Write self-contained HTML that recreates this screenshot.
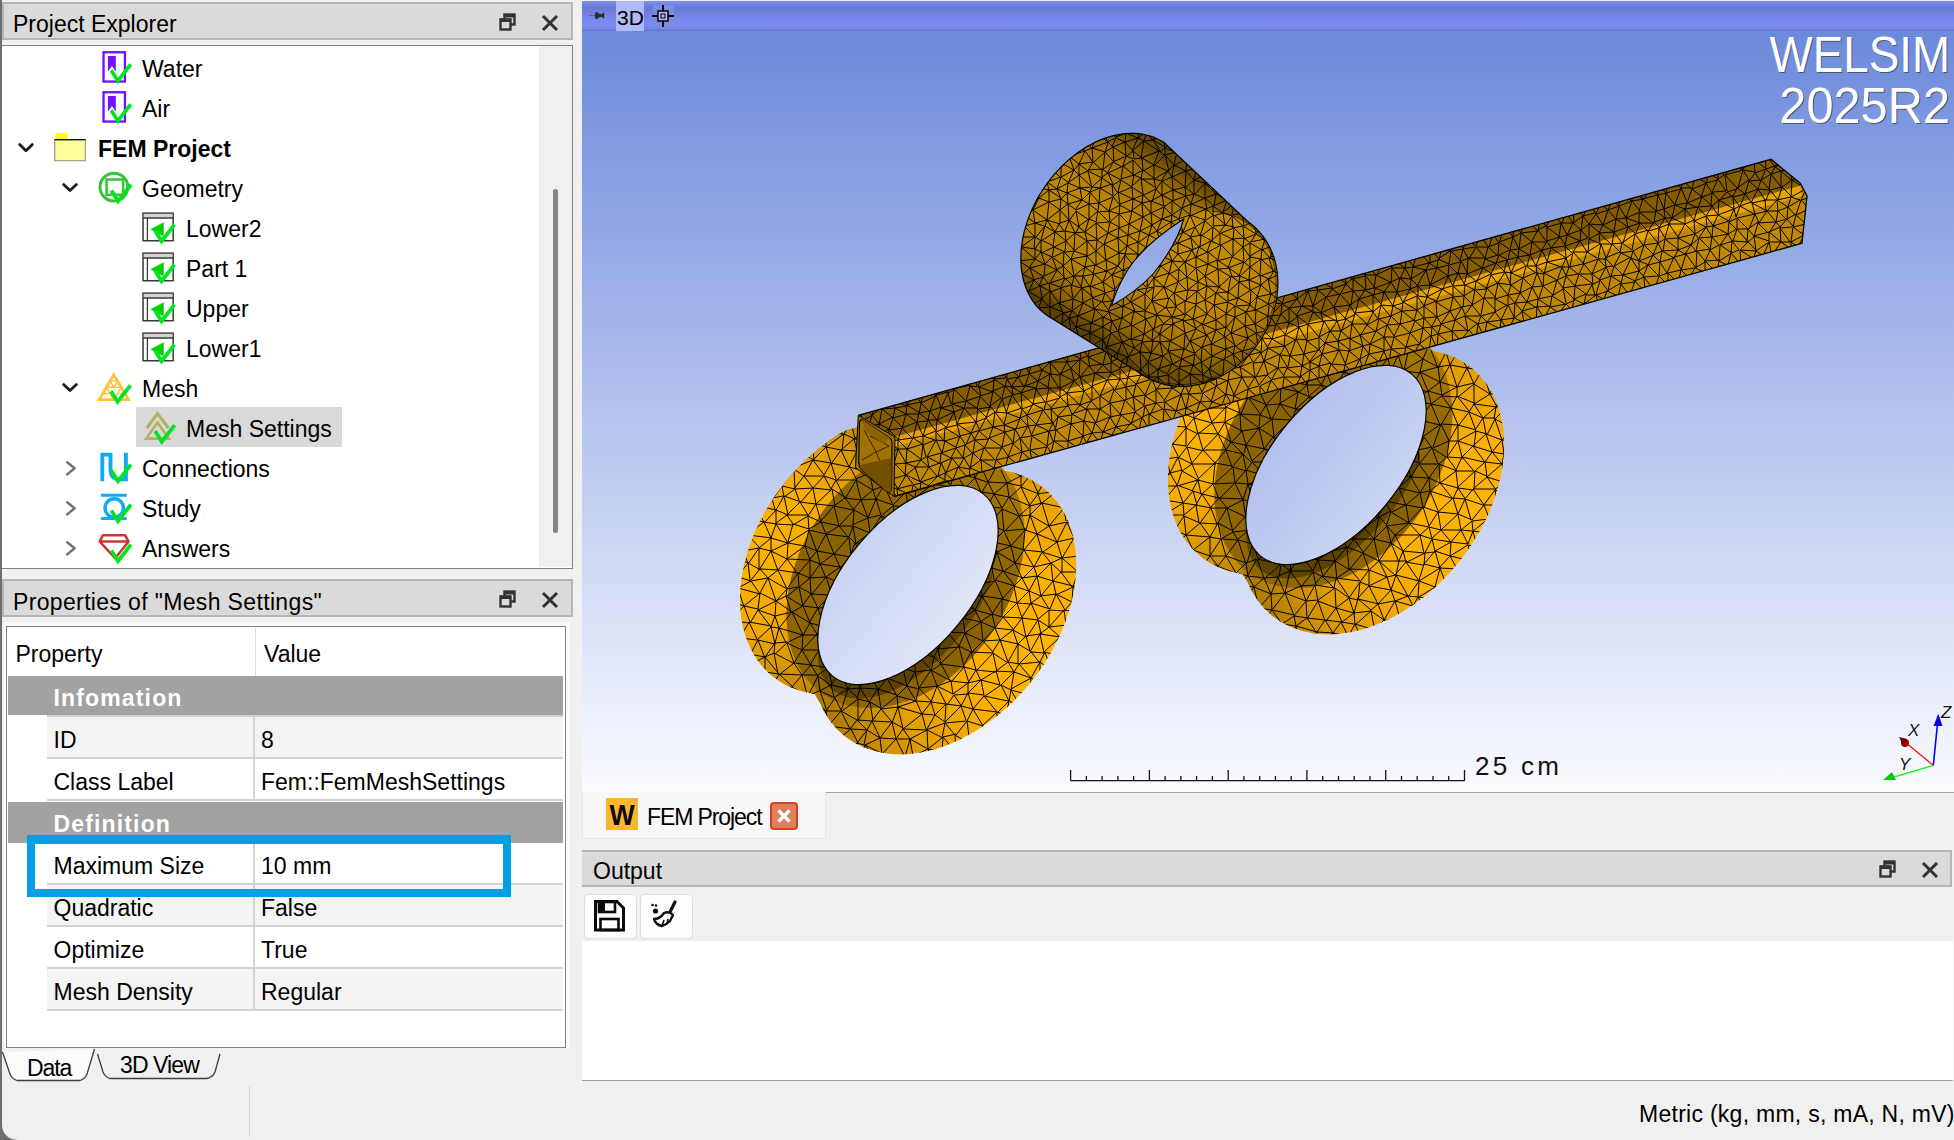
<!DOCTYPE html>
<html><head><meta charset="utf-8"><style>
html,body{margin:0;padding:0;}
body{width:1954px;height:1140px;overflow:hidden;position:relative;background:#f0f0f0;font-family:"Liberation Sans", sans-serif;}
.t{position:absolute;white-space:nowrap;}
.box{position:absolute;box-sizing:content-box;}
.ic{position:absolute;overflow:visible;}
#winborder{position:absolute;left:0;top:0;width:2px;height:1140px;background:#6c6e6f;}
#wincorner{position:absolute;left:0;top:1110px;width:30px;height:30px;background:#6c6e6f;}
#wincorner div{position:absolute;left:2px;top:-2px;width:40px;height:32px;background:#f0f0f0;border-bottom-left-radius:15px;}
</style></head><body>
<div class="box" style="left:2px;top:2px;width:567px;height:34px;background:#dadada;border:2px solid #b6b6b6"></div><div class="t" style="left:13px;top:13.0px;font-size:23px;line-height:23px;font-weight:400;color:#000;">Project Explorer</div><svg class="ic" style="left:499px;top:13px" width="18" height="18" viewBox="0 0 18 18">
<rect x="5.5" y="1.5" width="10" height="10" fill="none" stroke="#333" stroke-width="2.4"/>
<rect x="1.5" y="6.5" width="10" height="10" fill="#dadada" stroke="#333" stroke-width="2.4"/>
<rect x="1" y="5.5" width="11" height="3.5" fill="#333"/>
<rect x="5" y="1" width="11" height="3.5" fill="#333"/>
</svg><svg class="ic" style="left:541px;top:14px" width="18" height="18" viewBox="0 0 18 18"><path d="M2,2 L16,16 M16,2 L2,16" stroke="#333" stroke-width="3"/></svg><div class="box" style="left:2px;top:45px;width:570px;height:522px;background:#fff;border:1px solid #7c828c;border-left:none"></div><div class="box" style="left:539px;top:46px;width:33px;height:521px;background:#f0f0f0"></div><div class="box" style="left:553px;top:189px;width:5px;height:344px;background:#858585;border-radius:3px"></div><div class="box" style="left:136px;top:407px;width:206px;height:40px;background:#d9d9d9"></div><svg class="ic" style="left:0;top:0" width="600" height="600" viewBox="0 0 600 600"><path d="M19.7,144.4 L26.0,150.7 L32.3,144.4" fill="none" stroke="#1c1c1c" stroke-width="2.8" stroke-linecap="round" stroke-linejoin="round"/><path d="M63.6,184.6 L70.0,190.6 L76.4,184.6" fill="none" stroke="#1c1c1c" stroke-width="2.8" stroke-linecap="round" stroke-linejoin="round"/><path d="M63.6,384.6 L70.0,390.6 L76.4,384.6" fill="none" stroke="#1c1c1c" stroke-width="2.8" stroke-linecap="round" stroke-linejoin="round"/><path d="M67.2,462.2 L74.6,468.3 L67.2,474.4" fill="none" stroke="#707070" stroke-width="2.4" stroke-linecap="round" stroke-linejoin="round"/><path d="M67.2,502.2 L74.6,508.3 L67.2,514.4" fill="none" stroke="#707070" stroke-width="2.4" stroke-linecap="round" stroke-linejoin="round"/><path d="M67.2,542.2 L74.6,548.3 L67.2,554.4" fill="none" stroke="#707070" stroke-width="2.4" stroke-linecap="round" stroke-linejoin="round"/><rect x="103.55" y="52.25" width="21.4" height="29.3" fill="none" stroke="#7010ff" stroke-width="2.3"/><path d="M107.9,56 H115.8 V71.8 L111.85,66 L107.9,71.8 Z" fill="#7010ff"/><path d="M112.3,71.9 L117.9,80.9 L129.6,65.9" fill="none" stroke="#00e61e" stroke-width="3.8" stroke-linecap="square" stroke-linejoin="miter"/><rect x="103.55" y="92.25" width="21.4" height="29.3" fill="none" stroke="#7010ff" stroke-width="2.3"/><path d="M107.9,96 H115.8 V111.8 L111.85,106 L107.9,111.8 Z" fill="#7010ff"/><path d="M112.3,111.9 L117.9,120.9 L129.6,105.9" fill="none" stroke="#00e61e" stroke-width="3.8" stroke-linecap="square" stroke-linejoin="miter"/><rect x="55.8" y="133" width="11.7" height="7" fill="#ffff00"/><rect x="54.8" y="139.7" width="30.5" height="21" fill="#fdfd9c" stroke="#8c8c70" stroke-width="1"/><path d="M54.5,139.7 H85.6" stroke="#000" stroke-width="1.2"/><circle cx="113.9" cy="187.1" r="13.9" fill="none" stroke="#35c435" stroke-width="3"/><rect x="106.6" y="179.5" width="16.5" height="15.2" fill="none" stroke="#35c435" stroke-width="2.5"/><path d="M112.5,192.1 L118.1,201.1 L129.8,186.1" fill="none" stroke="#00e61e" stroke-width="3.8" stroke-linecap="square" stroke-linejoin="miter"/><rect x="143.05" y="213.15" width="30.1" height="27.6" fill="#fff" stroke="#3a3a3a" stroke-width="1.5"/><rect x="143.8" y="213.9" width="28.6" height="3.6" fill="#d2d2d2"/><path d="M143,218 H173.2 M147.4,218 V240.8" stroke="#3a3a3a" stroke-width="1.3"/><path d="M150.4,229.2 L163.7,222.2 L163.7,236.5 Z" fill="#00cc00"/><path d="M156.0,232.1 L161.6,241.1 L173.3,226.1" fill="none" stroke="#00e61e" stroke-width="3.8" stroke-linecap="square" stroke-linejoin="miter"/><rect x="143.05" y="253.15" width="30.1" height="27.6" fill="#fff" stroke="#3a3a3a" stroke-width="1.5"/><rect x="143.8" y="253.9" width="28.6" height="3.6" fill="#d2d2d2"/><path d="M143,258 H173.2 M147.4,258 V280.8" stroke="#3a3a3a" stroke-width="1.3"/><path d="M150.4,269.2 L163.7,262.2 L163.7,276.5 Z" fill="#00cc00"/><path d="M156.0,272.1 L161.6,281.1 L173.3,266.1" fill="none" stroke="#00e61e" stroke-width="3.8" stroke-linecap="square" stroke-linejoin="miter"/><rect x="143.05" y="293.15" width="30.1" height="27.6" fill="#fff" stroke="#3a3a3a" stroke-width="1.5"/><rect x="143.8" y="293.9" width="28.6" height="3.6" fill="#d2d2d2"/><path d="M143,298 H173.2 M147.4,298 V320.8" stroke="#3a3a3a" stroke-width="1.3"/><path d="M150.4,309.2 L163.7,302.2 L163.7,316.5 Z" fill="#00cc00"/><path d="M156.0,312.1 L161.6,321.1 L173.3,306.1" fill="none" stroke="#00e61e" stroke-width="3.8" stroke-linecap="square" stroke-linejoin="miter"/><rect x="143.05" y="333.15" width="30.1" height="27.6" fill="#fff" stroke="#3a3a3a" stroke-width="1.5"/><rect x="143.8" y="333.9" width="28.6" height="3.6" fill="#d2d2d2"/><path d="M143,338 H173.2 M147.4,338 V360.8" stroke="#3a3a3a" stroke-width="1.3"/><path d="M150.4,349.2 L163.7,342.2 L163.7,356.5 Z" fill="#00cc00"/><path d="M156.0,352.1 L161.6,361.1 L173.3,346.1" fill="none" stroke="#00e61e" stroke-width="3.8" stroke-linecap="square" stroke-linejoin="miter"/><path d="M113.8,374.8 L128.6,399.7 L99.2,399.7 Z" fill="none" stroke="#fbc43a" stroke-width="2.8" stroke-linejoin="miter"/><path d="M106.4,387.3 H121.2 L113.8,399.7 Z M110.1,381 H117.5 L113.8,387.3 Z M102.8,393.5 H110 M117.6,393.5 H124.8" fill="none" stroke="#fbc43a" stroke-width="1.5"/><path d="M112.0,392.8 L117.6,401.8 L129.3,386.8" fill="none" stroke="#00e61e" stroke-width="3.8" stroke-linecap="square" stroke-linejoin="miter"/><path d="M146.8,428 L157.5,413.5 L168.4,428" fill="none" stroke="#b4b064" stroke-width="3"/><path d="M157.5,422.4 L168.9,438.6 L146.1,438.6 Z" fill="none" stroke="#b4b064" stroke-width="2.6"/><path d="M156.2,432.7 L161.8,441.7 L173.5,426.7" fill="none" stroke="#00e61e" stroke-width="3.8" stroke-linecap="square" stroke-linejoin="miter"/><path d="M102.3,481.2 V454.6 H110.5 V468.5 Q110.5,479.2 119,479.2 H125.9 V452.7" fill="none" stroke="#10aaf6" stroke-width="3.9"/><path d="M112.4,472.2 L118.0,481.2 L129.7,466.2" fill="none" stroke="#00e61e" stroke-width="3.8" stroke-linecap="square" stroke-linejoin="miter"/><path d="M101,495.2 H126.7 M101,518.5 H126.7" stroke="#10aaf6" stroke-width="3"/><circle cx="114.2" cy="508" r="9.2" fill="none" stroke="#10aaf6" stroke-width="3.4"/><path d="M112.4,512.2 L118.0,521.2 L129.7,506.2" fill="none" stroke="#00e61e" stroke-width="3.8" stroke-linecap="square" stroke-linejoin="miter"/><path d="M103,535.2 H125 L128.6,541.5 L115.2,558.2 L99.6,541.5 Z M99.6,541.5 H128.6" fill="none" stroke="#cc3333" stroke-width="2.5" stroke-linejoin="round"/><path d="M112.4,552.2 L118.0,561.2 L129.7,546.2" fill="none" stroke="#00e61e" stroke-width="3.8" stroke-linecap="square" stroke-linejoin="miter"/></svg><div class="t" style="left:142px;top:57.9px;font-size:23px;line-height:23px;font-weight:400;color:#000;">Water</div><div class="t" style="left:142px;top:97.9px;font-size:23px;line-height:23px;font-weight:400;color:#000;">Air</div><div class="t" style="left:98px;top:137.9px;font-size:23px;line-height:23px;font-weight:700;color:#000;">FEM Project</div><div class="t" style="left:142px;top:177.9px;font-size:23px;line-height:23px;font-weight:400;color:#000;">Geometry</div><div class="t" style="left:186px;top:217.9px;font-size:23px;line-height:23px;font-weight:400;color:#000;">Lower2</div><div class="t" style="left:186px;top:257.9px;font-size:23px;line-height:23px;font-weight:400;color:#000;">Part 1</div><div class="t" style="left:186px;top:297.9px;font-size:23px;line-height:23px;font-weight:400;color:#000;">Upper</div><div class="t" style="left:186px;top:337.9px;font-size:23px;line-height:23px;font-weight:400;color:#000;">Lower1</div><div class="t" style="left:142px;top:377.9px;font-size:23px;line-height:23px;font-weight:400;color:#000;">Mesh</div><div class="t" style="left:186px;top:417.9px;font-size:23px;line-height:23px;font-weight:400;color:#000;">Mesh Settings</div><div class="t" style="left:142px;top:457.9px;font-size:23px;line-height:23px;font-weight:400;color:#000;">Connections</div><div class="t" style="left:142px;top:497.9px;font-size:23px;line-height:23px;font-weight:400;color:#000;">Study</div><div class="t" style="left:142px;top:537.9px;font-size:23px;line-height:23px;font-weight:400;color:#000;">Answers</div><div class="box" style="left:2px;top:579px;width:567px;height:34px;background:#dadada;border:2px solid #b6b6b6"></div><div class="t" style="left:13px;top:590.5px;font-size:23px;line-height:23px;font-weight:400;color:#000;letter-spacing:0.35px">Properties of "Mesh Settings"</div><svg class="ic" style="left:499px;top:590px" width="18" height="18" viewBox="0 0 18 18">
<rect x="5.5" y="1.5" width="10" height="10" fill="none" stroke="#333" stroke-width="2.4"/>
<rect x="1.5" y="6.5" width="10" height="10" fill="#dadada" stroke="#333" stroke-width="2.4"/>
<rect x="1" y="5.5" width="11" height="3.5" fill="#333"/>
<rect x="5" y="1" width="11" height="3.5" fill="#333"/>
</svg><svg class="ic" style="left:541px;top:591px" width="18" height="18" viewBox="0 0 18 18"><path d="M2,2 L16,16 M16,2 L2,16" stroke="#333" stroke-width="3"/></svg><div class="box" style="left:4px;top:622px;width:566px;height:426px;background:#fafafa"></div><div class="box" style="left:6px;top:626px;width:558px;height:420px;background:#fff;border:1px solid #7c828c"></div><div class="box" style="left:255px;top:628px;width:1px;height:48px;background:#dcdcdc"></div><div class="t" style="left:15.5px;top:642.5px;font-size:23px;line-height:23px;font-weight:400;color:#000;">Property</div><div class="t" style="left:264px;top:642.5px;font-size:23px;line-height:23px;font-weight:400;color:#000;">Value</div><div class="box" style="left:8px;top:676px;width:555px;height:39px;background:#a2a2a2"></div><div class="t" style="left:53.5px;top:686.5px;font-size:23px;line-height:23px;font-weight:700;color:#fff;letter-spacing:1.15px">Infomation</div><div class="box" style="left:47px;top:715px;width:516px;height:2px;background:#d0d0d0"></div><div class="box" style="left:47px;top:717px;width:516px;height:40px;background:#f4f4f4"></div><div class="box" style="left:47px;top:757px;width:516px;height:2px;background:#d4d4d4"></div><div class="box" style="left:253px;top:717px;width:2px;height:40px;background:#d4d4d4"></div><div class="t" style="left:53.5px;top:728.5px;font-size:23px;line-height:23px;font-weight:400;color:#000;">ID</div><div class="t" style="left:261px;top:728.5px;font-size:23px;line-height:23px;font-weight:400;color:#000;">8</div><div class="box" style="left:47px;top:759px;width:516px;height:40px;background:#fff"></div><div class="box" style="left:47px;top:799px;width:516px;height:2px;background:#d4d4d4"></div><div class="box" style="left:253px;top:759px;width:2px;height:40px;background:#d4d4d4"></div><div class="t" style="left:53.5px;top:770.5px;font-size:23px;line-height:23px;font-weight:400;color:#000;">Class Label</div><div class="t" style="left:261px;top:770.5px;font-size:23px;line-height:23px;font-weight:400;color:#000;">Fem::FemMeshSettings</div><div class="box" style="left:8px;top:802px;width:555px;height:39px;background:#a2a2a2"></div><div class="t" style="left:53.5px;top:812.5px;font-size:23px;line-height:23px;font-weight:700;color:#fff;letter-spacing:1.15px">Definition</div><div class="box" style="left:8px;top:841px;width:555px;height:2px;background:#a2a2a2"></div><div class="box" style="left:47px;top:843px;width:516px;height:40px;background:#fff"></div><div class="box" style="left:47px;top:883px;width:516px;height:2px;background:#d4d4d4"></div><div class="box" style="left:253px;top:843px;width:2px;height:40px;background:#d4d4d4"></div><div class="t" style="left:53.5px;top:854.5px;font-size:23px;line-height:23px;font-weight:400;color:#000;">Maximum Size</div><div class="t" style="left:261px;top:854.5px;font-size:23px;line-height:23px;font-weight:400;color:#000;">10 mm</div><div class="box" style="left:47px;top:885px;width:516px;height:40px;background:#f4f4f4"></div><div class="box" style="left:47px;top:925px;width:516px;height:2px;background:#d4d4d4"></div><div class="box" style="left:253px;top:885px;width:2px;height:40px;background:#d4d4d4"></div><div class="t" style="left:53.5px;top:896.5px;font-size:23px;line-height:23px;font-weight:400;color:#000;">Quadratic</div><div class="t" style="left:261px;top:896.5px;font-size:23px;line-height:23px;font-weight:400;color:#000;">False</div><div class="box" style="left:47px;top:927px;width:516px;height:40px;background:#fff"></div><div class="box" style="left:47px;top:967px;width:516px;height:2px;background:#d4d4d4"></div><div class="box" style="left:253px;top:927px;width:2px;height:40px;background:#d4d4d4"></div><div class="t" style="left:53.5px;top:938.5px;font-size:23px;line-height:23px;font-weight:400;color:#000;">Optimize</div><div class="t" style="left:261px;top:938.5px;font-size:23px;line-height:23px;font-weight:400;color:#000;">True</div><div class="box" style="left:47px;top:969px;width:516px;height:40px;background:#f4f4f4"></div><div class="box" style="left:47px;top:1009px;width:516px;height:2px;background:#d4d4d4"></div><div class="box" style="left:253px;top:969px;width:2px;height:40px;background:#d4d4d4"></div><div class="t" style="left:53.5px;top:980.5px;font-size:23px;line-height:23px;font-weight:400;color:#000;">Mesh Density</div><div class="t" style="left:261px;top:980.5px;font-size:23px;line-height:23px;font-weight:400;color:#000;">Regular</div><div class="box" style="left:27px;top:835px;width:468px;height:45px;border:8px solid #00a0e6;border-top-width:9px;border-bottom-width:8px"></div><svg class="ic" style="left:0px;top:1046px" width="240" height="40" viewBox="0 0 240 40">
<path d="M2.5,6 L10,28 Q12,33 17,34.5 L80,34.5 Q85,33 87,28 L94.5,3" fill="#fbfbfb" stroke="#3c3c3c" stroke-width="1.3"/>
<path d="M97.5,8 L103,26 Q105,31 110,32.5 L207,32.5 Q213,31 215,26 L220,8" fill="#f0f0f0" stroke="#3c3c3c" stroke-width="1.3"/>
</svg><div class="t" style="left:27px;top:1056.5px;font-size:23px;line-height:23px;font-weight:400;color:#000;letter-spacing:-1.1px">Data</div><div class="t" style="left:120px;top:1054.1px;font-size:23px;line-height:23px;font-weight:400;color:#000;letter-spacing:-0.9px">3D View</div><div class="box" style="left:249px;top:1086px;width:1px;height:51px;background:#d2d2d2"></div><svg class="ic" style="left:582px;top:0px" width="1372" height="792" viewBox="582 0 1372 792">
<defs><linearGradient id="bg" x1="0" y1="31" x2="0" y2="792" gradientUnits="userSpaceOnUse">
<stop offset="0" stop-color="#6c8adb"/><stop offset="0.5" stop-color="#b4c2ee"/><stop offset="1" stop-color="#fafbff"/>
</linearGradient>
<linearGradient id="tb" x1="0" y1="1" x2="0" y2="31" gradientUnits="userSpaceOnUse">
<stop offset="0" stop-color="#7b8ff2"/><stop offset="0.22" stop-color="#6a78d4"/><stop offset="0.7" stop-color="#7a8cf2"/><stop offset="0.92" stop-color="#7584e6"/><stop offset="1" stop-color="#6676cc"/>
</linearGradient><pattern id="mbar" patternUnits="userSpaceOnUse" width="12" height="21.0" patternTransform="rotate(-15.5)">
<path d="M-1,0 H13 M-1,10.5 H13 M-1,21.0 H13 M0,0 L12,21.0 M12,0 L0,21.0 M-6.0,-10.5 L6.0,10.5 M6.0,10.5 L18.0,31.5 M6.0,-10.5 L-6.0,10.5 M18.0,10.5 L6.0,31.5" stroke="#000" stroke-width="1.0" stroke-opacity="1" fill="none" shape-rendering="crispEdges"/>
</pattern><pattern id="mring" patternUnits="userSpaceOnUse" width="18" height="30" patternTransform="rotate(12)">
<path d="M-1,0 H19 M-1,15 H19 M-1,30 H19 M0,0 L18,30 M18,0 L0,30 M-9.0,-15 L9.0,15 M9.0,15 L27.0,45 M9.0,-15 L-9.0,15 M27.0,15 L9.0,45" stroke="#000" stroke-width="1.0" stroke-opacity="1" fill="none" shape-rendering="crispEdges"/>
</pattern><pattern id="mup" patternUnits="userSpaceOnUse" width="13" height="22" patternTransform="rotate(40)">
<path d="M-1,0 H14 M-1,11 H14 M-1,22 H14 M0,0 L13,22 M13,0 L0,22 M-6.5,-11 L6.5,11 M6.5,11 L19.5,33 M6.5,-11 L-6.5,11 M19.5,11 L6.5,33" stroke="#000" stroke-width="1.0" stroke-opacity="1" fill="none" shape-rendering="crispEdges"/>
</pattern><clipPath id="barclip"><path d="M582,504.4 L1954,120.0 L1954,792 L582,792 Z"/></clipPath><radialGradient id="rF-428" cx="987" cy="735" r="290" gradientUnits="userSpaceOnUse">
<stop offset="0" stop-color="#ffb600"/><stop offset="0.32" stop-color="#fcb000"/><stop offset="0.6" stop-color="#e29e00"/><stop offset="0.8" stop-color="#b88200"/><stop offset="1" stop-color="#946800"/></radialGradient>
<radialGradient id="rB-428" cx="752" cy="540" r="190" gradientUnits="userSpaceOnUse">
<stop offset="0" stop-color="#ffb400"/><stop offset="0.45" stop-color="#f4aa00"/><stop offset="0.8" stop-color="#c88e00"/><stop offset="1" stop-color="#a07000"/></radialGradient>
<linearGradient id="rD-428" x1="787" y1="570" x2="1027" y2="570" gradientUnits="userSpaceOnUse">
<stop offset="0" stop-color="#906600"/><stop offset="0.5" stop-color="#8a6200"/><stop offset="0.85" stop-color="#946a00"/><stop offset="1" stop-color="#a27400"/></linearGradient>
<linearGradient id="rDb-428" x1="0" y1="660" x2="0" y2="710" gradientUnits="userSpaceOnUse">
<stop offset="0" stop-color="#5e4300"/><stop offset="1" stop-color="#9a6e00"/></linearGradient><clipPath id="s1clip-428"><ellipse cx="872.3" cy="552.4" rx="159.1" ry="111.8" transform="rotate(-51.3 872.3 552.4)"/></clipPath><clipPath id="edclip-428"><ellipse cx="905.4" cy="574.7" rx="145.3" ry="104.2" transform="rotate(-55.3 905.4 574.7)"/></clipPath><clipPath id="silclip-428"><path d="M943.9,611.9 L844.5,736.0 Q822.6,708.2 814.6,694.2 Q804.6,692.2 772.9,676.5 L872.3,552.4 Z"/><ellipse cx="872.3" cy="552.4" rx="159.1" ry="111.8" transform="rotate(-51.3 872.3 552.4)"/><ellipse cx="943.9" cy="611.9" rx="159.1" ry="111.8" transform="rotate(-51.3 943.9 611.9)"/></clipPath><radialGradient id="rF0" cx="1415" cy="615" r="290" gradientUnits="userSpaceOnUse">
<stop offset="0" stop-color="#ffb600"/><stop offset="0.32" stop-color="#fcb000"/><stop offset="0.6" stop-color="#e29e00"/><stop offset="0.8" stop-color="#b88200"/><stop offset="1" stop-color="#946800"/></radialGradient>
<radialGradient id="rB0" cx="1180" cy="420" r="190" gradientUnits="userSpaceOnUse">
<stop offset="0" stop-color="#ffb400"/><stop offset="0.45" stop-color="#f4aa00"/><stop offset="0.8" stop-color="#c88e00"/><stop offset="1" stop-color="#a07000"/></radialGradient>
<linearGradient id="rD0" x1="1215" y1="450" x2="1455" y2="450" gradientUnits="userSpaceOnUse">
<stop offset="0" stop-color="#906600"/><stop offset="0.5" stop-color="#8a6200"/><stop offset="0.85" stop-color="#946a00"/><stop offset="1" stop-color="#a27400"/></linearGradient>
<linearGradient id="rDb0" x1="0" y1="540" x2="0" y2="590" gradientUnits="userSpaceOnUse">
<stop offset="0" stop-color="#5e4300"/><stop offset="1" stop-color="#9a6e00"/></linearGradient><clipPath id="s1clip0"><ellipse cx="1300.3" cy="432.4" rx="159.1" ry="111.8" transform="rotate(-51.3 1300.3 432.4)"/></clipPath><clipPath id="edclip0"><ellipse cx="1333.4" cy="454.7" rx="145.3" ry="104.2" transform="rotate(-55.3 1333.4 454.7)"/></clipPath><clipPath id="silclip0"><path d="M1371.9,491.9 L1272.5,616.0 Q1250.6,588.2 1242.6,574.2 Q1232.6,572.2 1200.9,556.5 L1300.3,432.4 Z"/><ellipse cx="1300.3" cy="432.4" rx="159.1" ry="111.8" transform="rotate(-51.3 1300.3 432.4)"/><ellipse cx="1371.9" cy="491.9" rx="159.1" ry="111.8" transform="rotate(-51.3 1371.9 491.9)"/></clipPath><clipPath id="barfaces"><path d="M858.3,415.0 L1771.0,159.3 L1800.0,183.0 L1800.0,186.0 L895.0,437.0Z M895.0,437.0 L1800.0,186.0 L1807.0,196.0 L1802.0,243.3 L890.0,496.7Z"/></clipPath><clipPath id="cpF"><path d="M1246.0,222.6 L1250.1,225.6 L1253.8,228.9 L1257.4,232.5 L1260.6,236.3 L1263.6,240.4 L1266.3,244.8 L1268.7,249.4 L1270.7,254.2 L1272.5,259.1 L1273.9,264.3 L1275.0,269.6 L1275.7,275.0 L1276.1,280.5 L1276.1,286.1 L1275.8,291.7 L1275.1,297.4 L1274.1,303.1 L1272.8,308.7 L1271.1,314.3 L1269.1,319.8 L1266.8,325.3 L1264.1,330.6 L1261.2,335.8 L1258.0,340.8 L1254.5,345.6 L1250.8,350.2 L1246.8,354.6 L1242.6,358.8 L1238.2,362.7 L1233.6,366.3 L1228.9,369.6 L1224.0,372.7 L1219.0,375.4 L1213.8,377.7 L1208.6,379.8 L1203.4,381.4 L1198.1,382.8 L1192.7,383.7 L1187.4,384.3 L1182.2,384.5 L1176.9,384.4 L1171.8,383.8 L1166.8,382.9 L1161.8,381.7 L1157.1,380.1 L1152.4,378.1 L1148.0,375.8 L1143.8,373.2 L1139.7,370.2 L1136.0,366.9 L1132.4,363.3 L1129.2,359.5 L1126.2,355.4 L1123.5,351.0 L1121.1,346.4 L1119.1,341.6 L1117.3,336.7 L1115.9,331.5 L1114.8,326.2 L1114.1,320.8 L1113.7,315.3 L1113.7,309.7 L1114.0,304.1 L1114.7,298.4 L1115.7,292.7 L1117.0,287.1 L1118.7,281.5 L1120.7,276.0 L1123.0,270.5 L1125.7,265.2 L1128.6,260.0 L1131.8,255.0 L1135.3,250.2 L1139.0,245.6 L1143.0,241.2 L1147.2,237.0 L1151.6,233.1 L1156.2,229.5 L1160.9,226.2 L1165.8,223.1 L1170.8,220.4 L1176.0,218.1 L1181.2,216.0 L1186.4,214.4 L1191.7,213.0 L1197.1,212.1 L1202.4,211.5 L1207.6,211.3 L1212.9,211.4 L1218.0,212.0 L1223.0,212.9 L1228.0,214.1 L1232.7,215.7 L1237.4,217.7 L1241.8,220.0 L1246.0,222.6Z"/></clipPath><linearGradient id="upO" x1="1152.0" y1="150.0" x2="1047.4" y2="303.8" gradientUnits="userSpaceOnUse">
<stop offset="0" stop-color="#6a4a00"/><stop offset="0.12" stop-color="#9e7000"/><stop offset="0.4" stop-color="#c08800"/><stop offset="0.75" stop-color="#b48000"/><stop offset="0.92" stop-color="#8a6100"/><stop offset="1" stop-color="#5a4000"/></linearGradient>
<radialGradient id="upI" cx="1204.9" cy="247.9" r="130" gradientUnits="userSpaceOnUse">
<stop offset="0" stop-color="#c48c00"/><stop offset="0.5" stop-color="#c08800"/><stop offset="0.8" stop-color="#a07000"/><stop offset="1" stop-color="#6e4e00"/></radialGradient><clipPath id="uphull"><path d="M1247.2,221.0 L1250.5,223.4 L1253.6,226.0 L1256.6,228.8 L1259.4,231.8 L1262.1,235.0 L1264.5,238.3 L1266.8,241.8 L1268.9,245.5 L1270.7,249.3 L1272.4,253.2 L1273.9,257.3 L1275.1,261.4 L1276.1,265.7 L1276.9,270.1 L1277.5,274.5 L1277.8,279.0 L1277.9,283.6 L1277.8,288.1 L1277.4,292.8 L1276.9,297.4 L1276.1,302.0 L1275.1,306.7 L1273.8,311.2 L1272.4,315.8 L1270.7,320.3 L1268.8,324.8 L1266.8,329.2 L1264.5,333.4 L1262.0,337.6 L1259.4,341.7 L1256.6,345.7 L1253.6,349.5 L1250.4,353.2 L1247.1,356.8 L1243.7,360.1 L1240.1,363.3 L1236.4,366.4 L1232.6,369.2 L1228.6,371.9 L1224.6,374.3 L1220.5,376.5 L1216.3,378.6 L1212.1,380.4 L1207.9,381.9 L1203.5,383.3 L1199.2,384.4 L1194.9,385.2 L1190.5,385.9 L1186.2,386.3 L1181.9,386.4 L1177.6,386.3 L1173.4,386.0 L1169.2,385.4 L1165.1,384.6 L1161.1,383.5 L1157.2,382.2 L1153.4,380.7 L1149.7,379.0 L1146.1,377.0 L1142.6,374.8 L1047.1,315.4 L1044.0,313.1 L1041.0,310.5 L1038.2,307.8 L1035.6,304.8 L1033.2,301.6 L1031.0,298.2 L1029.0,294.7 L1027.2,290.9 L1025.6,287.0 L1024.3,282.9 L1023.1,278.7 L1022.2,274.4 L1021.5,269.9 L1021.1,265.3 L1020.9,260.6 L1020.9,255.8 L1021.1,251.0 L1021.6,246.1 L1022.3,241.1 L1023.2,236.1 L1024.4,231.1 L1025.8,226.1 L1027.4,221.1 L1029.2,216.1 L1031.3,211.1 L1033.5,206.2 L1035.9,201.4 L1038.5,196.6 L1041.4,192.0 L1044.3,187.4 L1047.5,182.9 L1050.8,178.6 L1054.3,174.4 L1057.9,170.4 L1061.6,166.5 L1065.5,162.8 L1069.4,159.3 L1073.5,155.9 L1077.6,152.8 L1081.9,149.9 L1086.2,147.1 L1090.5,144.7 L1094.9,142.4 L1099.3,140.4 L1103.8,138.6 L1108.2,137.1 L1112.6,135.8 L1117.1,134.8 L1121.4,134.0 L1125.8,133.5 L1130.1,133.3 L1134.3,133.3 L1138.4,133.6 L1142.5,134.2 L1146.4,135.0 L1150.3,136.1 L1154.0,137.4 L1157.6,139.0 L1161.0,140.8 L1164.3,142.8Z"/></clipPath></defs>
<rect x="582" y="31" width="1372" height="761" fill="url(#bg)"/><g clip-path="url(#barclip)"><ellipse cx="872.3" cy="552.4" rx="159.1" ry="111.8" transform="rotate(-51.3 872.3 552.4)" fill="url(#rB-428)"/><path d="M943.9,611.9 L844.5,736.0 Q822.6,708.2 814.6,694.2 Q804.6,692.2 772.9,676.5 L872.3,552.4 Z" fill="url(#rB-428)"/><ellipse cx="943.9" cy="611.9" rx="159.1" ry="111.8" transform="rotate(-51.3 943.9 611.9)" fill="url(#rF-428)"/><path d="M672.3,352.4 L912.3,352.4 L802.3,702.4 L672.3,702.4 Z" fill="url(#rB-428)" clip-path="url(#s1clip-428)"/><ellipse cx="905.4" cy="574.7" rx="145.3" ry="104.2" transform="rotate(-55.3 905.4 574.7)" fill="url(#rD-428)"/><ellipse cx="908.0" cy="599.0" rx="118.3" ry="63.8" transform="rotate(-50.2 908.0 599.0)" fill="url(#rDb-428)" clip-path="url(#edclip-428)"/><ellipse cx="908.0" cy="585.0" rx="118.3" ry="63.8" transform="rotate(-50.2 908.0 585.0)" fill="url(#bg)"/><g clip-path="url(#silclip-428)"><path d="M1081 394l18 4M1081 394l-29 10M1081 394l-12 19M1081 394l11 22M1098 398l14 5M1098 398l-7 18M1098 398l8 22M1112 402l-6 18M1112 402l4 18M995 395l11 0M995 395l-17 10M995 395l-1 13M1006 395l17 2M1006 395l-12 13M1006 395l3 19M1023 397l14 4M1023 397l-14 16M1023 397l6 22M1037 401l15 3M1037 401l-9 18M1037 401l4 16M1052 404l17 9M1052 404l-11 13M1052 404l10 16M1069 413l23 3M1069 413l-6 7M1069 413l6 8M1091 416l15 4M1091 416l-17 5M1091 416l4 10M1107 420l10 1M1107 420l-11 6M1107 420l-2 14M1117 421l-12 13M1117 421l-0 30M927 398l16 4M927 398l32 5M927 398l-36 2M927 398l-26 6M927 398l-4 10M927 398l14 14M943 402l17 1M943 402l-2 10M943 402l7 15M959 403l19 2M959 403l-10 14M959 403l11 12M978 404l16 3M978 404l-7 10M978 404l9 14M994 408l15 5M994 408l-7 11M994 408l8 20M1009 413l19 6M1009 413l-7 15M1009 413l5 15M1029 419l12 -2M1029 419l-15 9M1029 419l7 12M1041 417l21 3M1041 417l-5 14M1041 417l11 16M1062 420l13 1M1062 420l-11 13M1062 420l7 19M1075 421l21 5M1075 421l-6 18M1075 421l11 19M1095 426l9 8M1095 426l-10 13M1105 434l-19 6M1105 434l-8 13M1105 434l12 17M876 397l16 3M876 397l-27 9M876 397l-15 11M876 397l0 16M891 400l10 4M891 400l-15 13M891 400l2 17M901 404l22 4M901 404l-7 13M901 404l5 20M923 408l17 4M923 408l-17 16M923 408l-0 20M941 411l9 6M941 411l-18 16M941 411l-1 19M950 417l21 -2M950 417l-10 14M950 417l8 15M971 415l17 4M971 415l-13 18M971 415l-0 20M987 419l15 9M987 419l-17 16M987 419l6 17M1002 428l12 0M1002 428l-9 8M1002 428l6 12M1014 428l21 4M1014 428l-6 12M1014 428l8 12M1035 431l16 2M1035 431l-14 8M1035 431l-1 18M1052 433l17 6M1052 433l-17 16M1052 433l6 16M1069 439l16 1M1069 439l-11 10M1069 439l-0 11M1086 440l11 7M1086 440l-17 10M1086 440l-1 15M1096 447l20 4M1096 447l-12 8M1096 447l4 11M1116 451l-15 7M1116 451l-0 14M777 394l19 3M777 394l-21 8M777 394l-5 13M777 394l12 16M796 396l13 6M796 396l-7 13M796 396l8 14M809 403l21 5M809 403l-5 8M809 403l8 13M830 407l19 -2M830 407l-13 8M830 407l0 12M849 406l12 3M849 406l-18 13M849 406l2 16M861 408l16 5M861 408l-10 14M861 408l8 18M876 413l18 4M876 413l-7 13M876 413l4 15M894 417l12 7M894 417l-14 11M894 417l3 14M906 424l16 3M906 424l-10 8M906 424l9 14M923 427l17 4M923 427l-8 10M923 427l10 13M940 431l18 2M940 431l-6 9M940 431l12 11M957 432l13 2M957 432l-6 9M957 432l2 16M970 435l23 1M970 435l-11 13M970 435l6 15M993 436l14 4M993 436l-16 13M993 436l5 17M1008 440l14 -0M1008 440l-9 13M1008 440l5 18M1022 440l13 9M1022 440l-9 19M1035 449l23 0M1035 449l-22 9M1035 449l-5 13M1035 449l14 17M1058 449l11 1M1058 449l-10 17M1058 449l6 20M1069 450l16 5M1069 450l-5 20M1069 450l11 22M1085 455l16 3M1085 455l-5 16M1085 455l10 20M1101 458l15 6M1101 458l-6 17M1101 458l8 15M1116 465l-7 8M1116 465l-4 24M703 396l20 2M703 396l31 1M703 396l2 15M703 396l-3 30M723 398l11 -1M723 398l-17 13M723 398l7 13M734 397l22 5M734 397l-4 13M734 397l9 20M756 402l16 5M756 402l-13 15M756 402l1 20M772 407l17 3M772 407l-15 15M772 407l4 13M789 410l15 1M789 410l-13 10M789 410l5 14M804 411l13 5M804 411l-11 13M804 411l2 17M817 416l13 3M817 416l-11 11M817 416l9 17M830 419l21 3M830 419l-4 14M830 419l13 15M851 422l18 4M851 422l-7 12M851 422l4 17M869 426l11 2M869 426l-15 13M869 426l-0 14M880 428l17 4M880 428l-11 12M880 428l10 19M897 432l18 6M897 432l-7 15M897 432l12 18M915 438l18 3M915 438l-7 13M915 438l2 15M933 440l18 1M933 440l-17 13M933 440l5 14M951 441l8 7M951 441l-13 12M951 441l4 20M960 448l17 1M960 448l-4 13M960 448l13 17M977 449l22 4M977 449l-5 15M977 449l4 17M999 453l14 5M999 453l-17 13M999 453l-1 11M1013 458l17 4M1013 458l-15 6M1013 458l8 18M1030 462l19 5M1030 462l-9 14M1030 462l0 13M1048 466l16 3M1048 466l-18 9M1048 466l-1 10M1064 469l16 2M1064 469l-17 7M1064 469l3 12M1080 471l15 4M1080 471l-13 10M1080 471l2 14M1095 475l14 -2M1095 475l-14 10M1095 475l5 14M1109 473l-8 16M1109 473l3 16M705 411l25 -0M705 411l-5 15M705 411l10 13M730 411l13 7M730 411l-15 13M730 411l-3 17M742 417l14 5M742 417l-15 11M742 417l10 14M742 417l-5 24M757 422l19 -3M757 422l-5 10M757 422l11 10M776 419l17 5M776 419l-8 13M776 419l7 23M793 424l13 3M793 424l-10 18M793 424l-0 21M806 427l20 6M806 427l-13 17M806 427l5 15M826 433l17 1M826 433l-14 9M826 433l-0 14M844 434l11 5M844 434l-18 13M844 434l-2 16M854 439l14 1M854 439l-13 11M854 439l3 12M869 441l21 7M869 441l-12 11M869 441l8 19M890 447l18 3M890 447l-13 12M890 447l-1 15M908 450l8 3M908 450l-19 13M908 450l-3 16M917 453l22 1M917 453l-11 13M917 453l12 17M939 454l16 7M939 454l-10 16M939 454l4 13M955 461l17 4M955 461l-13 6M955 461l0 11M972 465l9 2M972 465l-17 7M972 465l3 13M981 466l17 -2M981 466l-6 12M981 466l7 16M998 464l23 12M998 464l-10 18M998 464l9 19M1021 476l9 -1M1021 476l-14 7M1021 476l-0 10M1030 475l17 1M1030 475l-9 12M1030 475l8 18M1047 476l20 5M1047 476l-9 17M1047 476l10 15M1067 481l15 4M1067 481l-10 9M1067 481l5 14M1081 485l19 4M1081 485l-10 11M1081 485l5 14M1100 489l12 0M1100 489l-14 10M1100 489l5 19M1112 489l-7 19M1112 489l1 29M700 426l15 -3M700 426l2 8M700 426l-5 22M715 424l12 4M715 424l-13 11M715 424l5 20M727 428l-7 16M727 428l10 14M752 432l16 1M752 432l-15 10M752 432l4 18M768 432l15 10M768 432l-12 18M768 432l-4 20M783 442l10 2M783 442l-19 10M783 442l1 9M793 445l19 -2M793 445l-9 7M793 445l10 10M812 442l14 5M812 442l-9 12M812 442l2 18M826 447l15 3M826 447l-13 13M826 447l5 16M841 450l16 1M841 450l-10 14M841 450l8 17M857 451l20 8M857 451l-8 16M857 451l12 22M877 459l13 4M877 459l-8 14M877 459l8 15M889 463l17 3M889 463l-5 11M889 463l12 15M906 466l23 4M906 466l-5 12M906 466l11 15M928 470l14 -3M928 470l-12 11M928 470l4 14M942 467l13 4M942 467l-10 16M942 467l8 19M955 472l20 6M955 472l-5 15M955 472l10 16M975 478l12 4M975 478l-10 10M975 478l6 14M988 482l19 1M988 482l-6 10M988 482l6 12M1007 483l14 3M1007 483l-13 11M1007 483l2 14M1021 487l18 7M1021 487l-12 11M1021 487l9 19M1038 494l18 -3M1038 494l-9 12M1038 494l3 9M1057 491l15 5M1057 491l-15 12M1057 491l8 18M1072 496l15 3M1072 496l-7 13M1072 496l5 18M1087 499l19 10M1087 499l-9 15M1087 499l5 16M1105 508l-14 6M1105 508l8 10M702 434l18 9M702 434l-7 14M702 434l8 23M720 444l17 -2M720 444l-10 13M720 444l11 10M737 442l19 8M737 442l-7 12M737 442l5 16M756 450l8 3M756 450l-14 7M756 450l1 14M764 453l20 -1M764 453l-7 12M764 453l12 15M784 452l19 3M784 452l-8 16M784 452l10 17M803 454l11 6M803 454l-9 14M813 460l18 3M813 460l-20 8M813 460l-9 16M813 460l11 15M831 463l18 4M831 463l-7 12M831 463l5 16M850 467l19 6M850 467l-13 13M850 467l7 13M869 473l16 1M869 473l-13 6M869 473l4 16M869 473l15 12M885 474l17 4M885 474l-0 12M901 478l16 3M901 478l-17 8M901 478l4 15M917 481l16 3M917 481l-11 12M917 481l-2 17M933 484l18 3M933 484l-18 14M933 484l7 20M950 487l15 1M950 487l-11 17M950 487l1 19M965 488l16 4M965 488l-14 18M965 488l2 20M982 492l12 2M982 492l-15 16M982 492l5 15M994 494l15 3M994 494l-7 13M994 494l8 14M1009 497l21 9M1009 497l-7 11M1009 497l10 18M1030 506l12 -3M1030 506l-11 10M1030 506l0 9M1042 503l23 5M1042 503l-12 12M1042 503l7 23M1064 508l13 5M1064 508l-15 18M1064 508l2 13M1077 513l14 1M1077 513l-10 8M1077 513l9 15M1091 515l22 4M1091 515l-5 14M1091 515l3 14M1113 518l-19 10M1113 518l1 13M696 448l15 9M696 448l1 15M710 457l20 -3M710 457l-14 7M710 457l4 14M731 454l11 3M731 454l-17 18M731 454l2 22M742 457l15 7M742 457l-9 19M742 457l7 19M757 464l19 3M757 464l-8 13M757 464l7 13M776 467l18 1M776 467l-12 10M776 467l6 18M794 469l11 8M794 469l-12 17M794 469l1 20M804 476l20 -0M804 476l-10 13M804 476l9 12M824 476l12 4M824 476l-11 12M824 476l7 13M836 480l20 -0M836 480l-5 9M836 480l9 19M856 480l17 10M856 480l-11 19M856 480l5 20M873 490l11 -4M873 490l-12 10M873 490l3 10M884 485l22 7M884 485l-8 14M884 485l9 20M906 492l9 6M906 492l-13 13M906 492l2 14M915 498l25 5M915 498l-7 9M915 498l12 17M939 503l12 2M939 503l-13 12M939 503l1 10M951 506l16 3M951 506l-11 8M951 506l6 10M967 508l20 -1M967 508l-9 8M967 508l10 10M987 507l15 1M987 507l-10 11M987 507l3 16M1002 509l17 7M1002 509l-12 15M1002 509l2 23M1019 516l11 -1M1019 516l-15 16M1019 516l6 14M1030 515l19 11M1030 515l-4 15M1030 515l7 19M1049 526l18 -4M1049 526l-12 8M1049 526l8 16M1067 522l19 6M1067 522l-10 20M1067 522l7 16M1086 528l8 1M1086 528l-12 10M1086 528l1 15M1094 529l20 3M1094 529l-7 14M1094 529l10 22M1114 531l-10 19M1114 531l1 16M696 464l18 8M696 464l5 15M714 472l19 4M714 472l-12 7M714 472l5 11M733 476l16 1M733 476l-14 7M733 476l2 9M749 477l15 1M749 477l-14 8M749 477l2 17M764 478l18 8M764 478l-13 16M764 478l8 21M782 486l13 3M782 486l-9 13M782 486l2 11M795 489l19 -1M795 489l-11 8M795 489l5 14M813 488l18 2M813 488l-13 15M813 488l3 16M832 489l14 9M832 489l-16 15M832 489l3 17M845 498l16 2M845 498l-11 8M845 498l9 12M861 500l15 -1M861 500l-8 10M861 500l7 18M876 499l17 6M876 499l-8 19M876 499l5 16M893 506l15 1M893 506l-12 10M893 506l3 15M908 507l18 9M908 507l-13 14M908 507l9 22M927 515l14 -2M927 515l-10 13M927 515l4 10M940 513l17 2M940 513l-10 12M940 513l7 20M958 516l19 3M958 516l-10 18M958 516l2 14M977 518l13 5M977 518l-17 12M977 518l5 21M990 523l14 8M990 523l-8 16M990 523l3 19M1004 531l22 -2M1004 531l-11 11M1004 531l7 15M1025 530l12 4M1025 530l-15 17M1025 530l-2 20M1037 534l20 8M1037 534l-13 16M1037 534l5 18M1057 542l17 -4M1057 542l-14 10M1057 542l5 16M1074 538l13 5M1074 538l-12 20M1074 538l5 18M1087 543l18 8M1087 543l-7 13M1087 543l5 17M1104 550l11 -4M1104 550l-13 10M1104 550l7 11M1116 547l-4 15M1116 547l-0 35M701 479l17 4M701 479l9 21M701 479l-3 29M719 483l16 2M719 483l-8 17M719 483l9 21M735 485l16 9M735 485l-7 19M735 485l6 20M751 494l21 4M751 494l-11 11M751 494l3 10M772 498l11 -2M772 498l-19 6M772 498l3 12M784 496l17 6M784 496l-8 14M784 496l4 19M800 502l16 2M800 502l-13 13M800 502l8 13M816 504l18 2M816 504l-8 12M816 504l5 18M834 506l19 4M834 506l-14 16M834 506l5 20M854 510l15 8M854 510l-14 15M854 510l-1 15M868 518l13 -3M868 518l-16 7M868 518l2 14M881 516l15 5M881 516l-11 17M881 516l7 16M896 521l21 7M896 521l-8 11M896 521l8 18M917 528l14 -3M917 528l-13 10M917 528l-0 12M931 526l17 8M931 526l-14 15M931 526l9 17M948 533l12 -3M948 533l-8 9M948 533l2 13M959 530l22 10M959 530l-10 16M959 530l7 20M982 539l11 3M982 539l-16 10M982 539l0 13M993 542l18 4M993 542l-11 10M993 542l4 10M1011 546l13 4M1011 546l-14 6M1011 546l4 17M1024 550l19 2M1024 550l-9 13M1024 550l10 17M1042 552l19 6M1042 552l-8 15M1042 552l9 11M1062 558l17 -2M1062 558l-11 5M1062 558l-0 14M1062 558l16 14M1079 556l13 5M1079 556l-1 16M1092 560l19 1M1092 560l-14 12M1092 560l4 12M1111 561l-15 11M1111 561l4 20M711 500l17 4M711 500l-13 7M711 500l3 15M728 504l13 1M728 504l-14 11M728 504l-1 14M741 505l13 -1M741 505l-14 13M741 505l6 13M754 505l22 5M754 505l-8 13M754 505l10 17M776 510l12 5M776 510l-11 12M776 510l0 14M787 515l21 0M787 515l-11 8M787 515l6 9M808 516l13 6M808 516l-15 9M808 516l1 14M821 522l19 4M821 522l-12 7M821 522l5 12M839 526l13 0M839 526l-13 8M839 526l9 11M853 526l17 7M853 526l-4 11M853 526l3 18M870 533l17 -1M870 533l-15 11M870 533l3 11M887 532l17 6M887 532l-14 12M887 532l2 16M904 538l12 2M904 538l-15 10M904 538l5 12M916 540l24 2M916 540l-8 10M916 540l4 13M940 542l10 4M940 542l-20 11M940 542l0 18M950 546l16 4M950 546l-10 14M950 546l4 15M966 550l16 3M966 550l-12 11M966 550l5 16M982 552l15 -0M982 552l-11 13M982 552l10 16M997 552l18 11M997 552l-5 16M997 552l6 19M1015 563l19 4M1015 563l-12 9M1015 563l7 15M1034 567l17 -4M1034 567l-12 12M1034 567l3 9M1051 563l10 9M1051 563l-14 14M1051 563l2 19M1061 572l16 -0M1061 572l-8 9M1061 572l11 15M1078 572l18 0M1078 572l-5 15M1078 572l6 12M1096 572l19 10M1096 572l-12 12M1096 572l9 23M1115 582l-10 14M1115 582l-9 23M698 507l16 7M698 507l9 20M714 515l13 3M714 515l-7 13M714 515l2 16M727 518l20 -0M727 518l-11 13M727 518l7 14M746 518l18 4M746 518l-13 14M746 518l1 17M764 522l12 2M764 522l-17 13M764 522l7 16M776 524l17 1M776 524l-5 14M776 524l12 19M793 524l16 5M793 524l-5 18M809 530l17 4M809 530l-21 13M809 530l-4 16M809 530l8 22M826 534l23 3M826 534l-9 17M826 534l8 20M849 537l7 7M849 537l-15 17M849 537l2 20M855 543l18 1M855 543l-5 13M855 543l10 18M873 544l16 4M873 544l-8 17M873 544l13 14M889 549l19 2M889 549l-3 10M889 549l9 18M909 550l12 3M909 550l-10 16M909 550l4 17M920 553l20 7M920 553l-8 14M920 553l9 20M940 560l14 1M940 560l-10 12M940 560l2 11M954 561l17 4M954 561l-12 11M954 561l10 17M971 565l21 3M971 565l-7 12M971 565l9 18M992 568l10 3M992 568l-12 15M992 568l2 12M1003 571l20 7M1003 571l-8 9M1003 571l12 15M1022 578l15 -2M1022 578l-8 8M1022 578l7 13M1037 576l16 5M1037 576l-8 15M1037 576l4 20M1053 581l20 5M1053 581l-12 15M1053 581l3 13M1073 587l11 -3M1073 587l-17 8M1073 587l-1 15M1073 587l16 14M1084 584l22 12M1084 584l5 17M1106 596l-16 5M1106 596l1 9M707 528l9 3M707 528l-1 16M715 531l18 1M715 531l-10 12M715 531l6 12M734 532l14 2M734 532l-12 11M734 532l9 19M748 535l24 3M748 535l-4 16M748 535l12 13M771 538l17 5M771 538l-12 10M771 538l-0 13M788 543l17 3M788 543l-17 8M788 543l-1 16M805 546l12 5M805 546l-18 13M805 546l5 14M817 551l17 3M817 551l-7 8M817 551l3 13M834 554l16 3M834 554l-14 10M834 554l6 13M850 557l15 5M850 557l-10 11M850 557l1 10M865 561l21 -3M865 561l-14 5M865 561l8 15M865 561l-9 20M886 558l12 8M886 558l-13 18M886 558l-3 19M898 567l14 0M898 567l-15 11M898 567l5 11M912 567l17 6M912 567l-9 10M912 567l3 13M930 573l12 -1M930 573l-14 8M930 573l6 16M942 572l22 6M942 572l-7 17M942 572l12 22M964 578l15 6M964 578l-11 16M964 578l-1 18M980 584l15 -3M980 584l-17 12M980 584l2 12M995 580l20 6M995 580l-13 16M995 580l8 19M1014 586l15 5M1014 586l-12 13M1014 586l3 16M1029 591l12 5M1029 591l-12 12M1029 591l2 12M1041 596l15 -2M1041 596l-10 7M1041 596l8 13M1056 594l16 8M1056 594l-6 15M1056 594l9 16M1072 602l18 -1M1072 602l-7 8M1072 602l13 12M1089 601l17 4M1089 601l-5 13M1089 601l6 17M1106 605l-11 13M1106 605l10 15M706 543l16 -0M706 543l-4 10M706 543l10 16M722 543l21 8M722 543l-6 16M722 543l6 14M743 551l16 -3M743 551l-15 6M743 551l5 12M759 548l12 3M759 548l-11 16M759 548l0 22M771 551l16 8M771 551l-12 19M771 551l7 20M787 559l23 1M787 559l-9 11M787 559l11 15M810 560l10 4M810 560l-12 14M810 560l0 19M820 564l20 3M820 564l-10 14M820 564l6 14M840 567l12 -1M840 567l-14 10M840 567l1 18M851 567l-10 18M851 567l5 15M873 576l10 2M873 576l-16 5M873 576l1 11M883 578l21 -1M883 578l-9 9M883 578l8 12M903 577l12 3M903 577l-13 12M903 577l2 16M915 580l20 8M915 580l-10 13M915 580l4 21M935 589l19 5M935 589l-16 13M935 589l6 9M954 594l9 2M954 594l-13 5M954 594l0 10M963 595l18 1M963 595l-9 8M963 595l12 15M982 596l21 3M982 596l-7 14M982 596l11 18M1002 599l15 4M1002 599l-10 15M1002 599l0 18M1017 603l14 1M1017 603l-14 14M1017 603l5 15M1031 603l19 6M1031 603l-9 14M1031 603l7 16M1049 610l15 1M1049 610l-12 10M1049 610l-0 17M1064 610l20 3M1064 610l-15 17M1064 610l2 14M1084 614l11 4M1084 614l-18 11M1084 614l6 15M1095 618l21 2M1095 618l-5 11M1095 618l7 15M1116 620l-14 13M1116 620l-8 31M702 553l13 6M702 553l-2 12M715 559l12 -2M715 559l-16 7M715 559l1 15M728 557l21 6M728 557l-11 16M728 557l10 20M748 563l11 6M748 563l-10 13M748 563l2 17M760 569l19 1M760 569l-9 11M760 569l8 9M778 570l20 3M778 570l-10 8M778 570l9 19M798 573l12 5M798 573l-11 16M798 573l1 14M810 578l15 -1M810 578l-11 9M810 578l1 16M826 577l16 7M826 577l-14 17M826 577l6 18M841 585l15 -4M841 585l-10 11M841 585l4 13M856 581l17 5M856 581l-11 17M856 581l4 22M874 586l17 3M874 586l-13 17M874 586l8 19M890 589l15 4M890 589l-9 16M890 589l11 21M905 593l14 8M905 593l-5 17M905 593l9 16M920 602l21 -3M920 602l-5 7M920 602l11 14M941 598l13 5M941 598l-10 17M941 598l3 18M954 603l20 6M954 603l-10 13M954 603l9 15M975 610l18 5M975 610l-12 8M975 610l6 12M992 614l10 3M992 614l-12 8M992 614l3 13M1003 617l20 1M1003 617l-8 11M1003 617l11 13M1022 618l16 2M1022 618l-9 12M1022 618l4 19M1038 620l11 7M1038 620l-11 17M1038 620l3 14M1049 627l18 -2M1049 627l-9 7M1049 627l11 10M1067 625l23 4M1067 625l-7 12M1067 625l7 23M1090 629l12 4M1090 629l-16 19M1090 629l-2 16M1102 633l-14 12M1102 633l6 18M700 565l17 8M700 565l11 18M700 565l-2 30M717 574l21 3M717 574l-6 10M717 574l9 12M738 577l13 4M738 577l-13 9M738 577l-0 11M751 581l17 -3M751 581l-13 7M751 581l9 13M768 578l19 11M768 578l-8 15M768 578l8 23M787 589l11 -2M787 589l-11 12M787 589l-1 7M799 587l13 7M799 587l-12 9M799 587l4 19M811 594l20 1M811 594l-9 12M811 594l7 14M831 595l14 2M831 595l-13 13M831 595l10 12M845 598l15 5M845 598l-4 9M845 598l13 13M860 603l21 3M860 603l-2 8M860 603l5 15M881 606l20 4M881 606l-16 12M881 606l3 16M901 610l14 -1M901 610l-17 11M901 610l-1 11M915 609l16 7M915 609l-15 13M915 609l3 21M931 616l14 1M931 616l-13 14M931 616l8 13M944 616l19 2M944 616l-5 12M944 616l3 16M963 618l18 4M963 618l-16 14M963 618l2 15M981 622l14 6M981 622l-16 11M981 622l2 19M995 628l18 2M995 628l-12 13M995 628l5 12M1013 630l13 7M1013 630l-13 10M1013 630l5 15M1026 636l14 -2M1026 636l-8 8M1026 636l4 15M1040 634l20 3M1040 634l-10 18M1040 634l4 19M1060 637l14 11M1060 637l-16 15M1060 637l2 20M1074 648l14 -3M1074 648l-12 9M1074 648l10 14M1088 645l20 6M1088 645l-4 17M1088 645l10 19M1108 651l-10 13M1108 651l1 12M710 583l15 2M710 583l-13 12M710 583l0 15M725 586l12 2M725 586l-15 13M725 586l1 15M738 588l22 6M738 588l-11 13M738 588l6 19M760 593l16 8M760 593l-16 13M760 593l-2 16M776 601l10 -5M776 601l-18 9M776 601l-1 15M776 601l16 11M786 596l16 10M786 596l5 16M803 606l16 2M803 606l-11 6M803 606l7 17M818 608l23 -1M818 608l-9 15M818 608l6 19M842 607l17 4M842 607l-17 19M842 607l2 18M858 611l7 7M858 611l-14 14M858 611l-1 20M865 618l19 3M865 618l-9 13M865 618l5 16M884 621l15 0M884 621l-14 13M884 621l5 15M900 622l18 8M900 622l-10 15M900 622l10 16M918 630l21 -1M918 630l-7 8M918 630l4 13M939 629l8 3M939 629l-18 14M939 629l-0 20M947 632l18 1M947 632l-9 17M947 632l12 14M965 633l18 8M965 633l-6 13M965 633l7 19M983 641l17 -1M983 641l-11 11M983 641l10 11M1000 640l18 4M1000 640l-8 13M1000 640l8 22M1018 644l12 7M1018 644l-10 18M1018 644l0 20M1031 652l14 1M1031 652l-12 12M1031 652l9 11M1045 652l18 5M1045 652l-5 10M1045 652l6 18M1062 657l22 5M1062 657l-12 13M1062 657l3 15M1084 662l14 2M1084 662l-18 10M1084 662l1 10M1098 664l11 -1M1098 664l-13 8M1098 664l4 15M1110 663l-7 16M1110 663l-3 28M698 596l13 3M698 596l8 20M698 596l6 30M711 598l16 2M711 598l-5 17M711 598l4 18M727 600l17 6M727 600l-12 16M727 600l4 20M744 606l14 3M744 606l-13 14M744 606l6 16M758 610l17 6M758 610l-8 13M758 610l13 17M775 616l17 -4M775 616l-4 11M775 616l4 12M792 612l18 11M792 612l-13 16M792 612l11 23M810 623l15 4M810 623l-7 12M810 623l7 11M825 626l19 -1M825 626l-8 8M825 626l3 11M844 625l13 6M844 625l-16 13M844 625l5 17M857 631l14 4M857 631l-8 11M857 631l7 15M870 634l19 2M870 634l-7 12M870 634l11 12M890 637l21 1M890 637l-8 9M890 637l10 11M910 638l11 5M910 638l-11 10M910 638l5 14M921 643l17 6M921 643l-6 9M921 643l13 14M938 649l21 -2M938 649l-4 8M938 649l3 15M959 646l12 6M959 646l-18 17M959 646l5 21M971 652l21 1M971 652l-8 15M971 652l5 18M993 653l15 10M993 653l-16 17M993 653l4 19M1008 662l11 2M1008 662l-12 9M1008 662l6 10M1019 664l21 -2M1019 664l-5 8M1019 664l12 14M1040 662l11 8M1040 662l-9 16M1040 662l-0 21M1050 670l15 3M1050 670l-11 13M1050 670l7 14M1066 673l20 -1M1066 673l-8 12M1066 673l13 17M1085 672l17 7M1085 672l-7 17M1085 672l9 19M1103 679l-8 12M1103 679l4 12M706 616l9 1M706 616l-2 10M715 617l16 4M715 617l-11 9M715 617l12 15M731 621l19 2M731 621l-4 11M731 621l9 17M749 622l22 4M749 622l-9 16M749 622l8 17M771 627l8 1M771 627l-14 13M771 627l4 17M779 628l24 7M779 628l-4 15M779 628l7 15M803 635l14 -0M803 635l-17 8M803 635l-1 15M817 634l11 4M817 634l-15 16M817 634l2 15M828 638l21 4M828 638l-9 12M828 638l7 20M849 642l15 5M849 642l-14 16M849 642l6 19M864 646l18 -0M864 646l-9 15M864 646l4 15M882 646l18 2M882 646l-13 15M882 646l2 20M900 648l16 4M900 648l-16 18M900 648l4 20M915 652l19 5M915 652l-12 16M915 652l-0 20M915 652l16 18M934 657l7 7M934 657l-3 14M941 664l22 3M941 664l-10 7M941 664l10 18M964 667l12 3M964 667l-12 14M964 667l5 16M976 670l20 2M976 670l-8 13M976 670l5 11M996 671l18 1M996 671l-15 9M996 671l4 14M1014 672l17 6M1014 672l-13 13M1014 672l-3 18M1031 678l9 5M1031 678l-20 11M1031 678l-1 17M1039 683l18 1M1039 683l-10 12M1039 683l9 11M1058 684l20 5M1058 684l-9 10M1058 684l3 19M1078 689l17 1M1078 689l-18 14M1078 689l0 12M1095 691l11 0M1095 691l-16 11M1095 691l1 20M1106 691l-10 19M1106 691l6 21M704 626l22 5M704 626l-2 14M704 626l6 20M726 631l14 6M726 631l-16 15M726 631l4 14M740 638l17 2M740 638l-10 7M740 638l9 17M758 640l17 4M758 640l-8 15M758 640l7 18M775 643l12 -1M775 643l-10 14M775 643l-1 10M787 643l15 7M787 643l-12 11M787 643l7 20M802 650l17 -0M802 650l-8 13M802 650l9 15M819 650l15 8M819 650l-9 15M819 650l9 19M835 658l20 3M835 658l-7 11M835 658l6 15M855 661l13 1M855 661l-15 11M855 661l2 12M868 662l15 5M868 662l-11 11M868 662l2 14M884 666l19 2M884 666l-13 9M884 666l3 11M903 668l12 4M903 668l-16 10M903 668l4 18M915 672l16 -2M915 672l-8 14M915 672l4 17M931 670l20 11M931 670l-12 18M931 670l6 16M951 681l17 2M951 681l-14 5M951 681l2 13M968 683l13 -3M968 683l-15 11M968 683l-0 10M981 680l19 5M981 680l-13 13M981 680l3 15M1001 685l10 5M1001 685l-16 11M1001 685l8 16M1011 690l19 5M1011 690l-2 11M1011 690l9 16M1030 695l19 -1M1030 695l-10 11M1030 695l4 11M1049 694l12 9M1049 694l-15 13M1049 694l6 17M1061 703l18 -1M1061 703l-6 8M1061 703l4 8M1079 702l18 9M1079 702l-14 10M1079 702l4 15M1096 711l16 1M1096 711l-13 6M1096 711l9 15M1113 712l-8 13M702 640l9 6M702 640l-3 17M710 647l20 -1M710 647l-12 11M710 647l5 12M731 645l19 9M731 645l-15 13M731 645l8 15M749 654l16 3M749 654l-10 6M749 654l0 11M765 657l9 -4M765 657l-16 8M765 657l-0 15M765 657l14 17M774 653l19 10M774 653l4 21M794 663l17 2M794 663l-15 12M794 663l8 12M811 665l17 3M811 665l-9 10M811 665l7 11M828 668l13 4M828 668l-10 7M828 668l4 17M840 672l17 1M840 672l-9 13M840 672l8 17M857 673l13 2M857 673l-9 16M857 673l3 15M870 675l17 2M870 675l-10 13M870 675l8 14M887 678l20 8M887 678l-9 12M887 678l10 18M907 686l12 3M907 686l-10 10M907 686l9 15M919 688l18 -2M919 688l-3 12M919 688l13 14M937 686l16 8M937 686l-6 16M937 686l9 18M954 695l15 -1M954 695l-7 10M954 695l8 12M968 693l16 2M968 693l-7 13M968 693l5 16M984 696l24 5M984 696l-11 13M984 696l13 16M1009 701l11 5M1009 701l-11 11M1009 701l-3 15M1020 706l15 1M1020 706l-14 9M1020 706l2 18M1034 707l21 4M1034 707l-13 18M1034 707l10 14M1055 711l10 1M1055 711l-11 11M1055 711l5 20M1065 712l18 5M1065 712l-5 19M1065 712l11 22M1083 717l22 8M1083 717l-7 17M1083 717l7 17M1105 725l-15 9M1105 725l-2 13M1105 725l7 30M698 657l17 1M698 657l5 15M698 657l3 24M715 658l23 2M715 658l-13 14M715 658l8 15M739 661l11 5M739 661l-15 12M739 661l-2 20M749 665l15 7M749 665l-13 16M749 665l8 18M765 672l14 2M765 672l-7 11M765 672l7 16M779 674l23 1M779 674l-7 13M779 674l13 12M802 675l16 0M802 675l-10 12M802 675l5 20M818 676l14 10M818 676l-10 20M818 676l2 15M831 685l17 4M831 685l-12 6M831 685l3 12M848 689l12 -1M848 689l-13 8M848 689l10 9M848 689l-7 22M860 688l18 1M860 688l-3 11M860 688l9 14M878 689l19 6M878 689l-9 13M878 689l3 20M897 696l19 5M897 696l-16 13M897 696l1 11M916 701l15 1M916 701l-18 6M916 701l6 13M931 702l15 2M931 702l-9 12M931 702l4 13M946 704l15 2M946 704l-11 11M946 704l-1 18M961 706l12 3M961 706l-16 16M961 706l5 14M973 709l24 3M973 709l-6 12M973 709l10 17M997 712l8 3M997 712l-15 14M997 712l-0 21M1006 715l16 9M1006 715l-9 18M1006 715l13 21M1022 724l23 -3M1022 724l-3 12M1022 724l13 15M1044 721l16 9M1044 721l-10 18M1044 721l-1 22M1060 730l16 4M1060 730l-18 13M1060 730l0 9M1076 734l14 -0M1076 734l-15 5M1076 734l2 14M1090 734l13 4M1090 734l-12 14M1090 734l8 19M1103 738l-5 15M1103 738l9 18M703 672l21 1M703 672l-1 9M703 672l10 17M723 673l13 8M723 673l-11 16M723 673l2 15M736 681l21 2M736 681l-11 7M736 681l8 15M758 683l14 5M758 683l-14 13M758 683l6 11M771 688l20 -1M771 688l-8 6M771 688l2 12M792 687l15 9M792 687l-19 12M792 687l-0 13M807 696l12 -5M807 696l-15 4M807 696l-2 12M807 696l19 15M820 691l15 7M820 691l7 20M835 698l-9 13M835 698l7 14M858 699l12 3M858 699l-16 12M858 699l-0 22M870 702l12 7M870 702l-12 18M870 702l3 19M881 709l17 -2M881 709l-9 12M881 709l11 13M898 707l24 7M898 707l-6 16M898 707l5 22M922 714l13 1M922 714l-19 15M922 714l4 15M935 715l10 7M935 715l-8 14M945 723l22 -2M945 723l-19 7M945 723l-3 15M945 723l10 12M967 721l16 5M967 721l-11 14M967 721l3 23M983 726l15 7M983 726l-12 17M983 726l9 14M997 733l21 3M997 733l-6 7M997 733l4 14M1018 736l16 3M1018 736l-17 12M1018 736l5 12M1035 739l8 4M1035 739l-12 9M1035 739l-0 12M1043 744l18 -4M1043 744l-9 8M1043 744l11 14M1061 739l17 9M1061 739l-7 18M1061 739l7 16M1078 748l20 5M1078 748l-11 7M1078 748l8 13M1098 753l14 3M1098 753l-12 8M1098 753l7 11M1112 756l-7 8M1112 756l0 15M701 682l11 8M701 682l-4 19M713 689l12 -1M713 689l-15 11M713 689l6 16M725 688l19 8M725 688l-6 17M725 688l14 17M744 696l19 -2M744 696l-5 9M744 696l11 11M763 694l10 5M763 694l-8 13M773 699l19 1M773 699l-18 8M773 699l-3 14M773 699l13 14M792 700l13 8M792 700l-6 14M792 700l5 15M805 708l21 3M805 708l-8 7M805 708l14 18M805 708l1 23M826 711l15 0M826 711l-8 16M826 711l2 16M841 711l16 9M841 711l-13 15M841 711l9 18M857 720l15 1M857 720l-7 9M857 720l10 10M872 721l20 1M872 721l-5 9M872 721l8 17M892 722l11 6M892 722l-12 16M892 722l4 17M903 729l24 1M903 729l-7 10M903 729l7 10M927 730l16 8M927 730l-17 9M927 730l1 20M943 737l13 -3M943 737l-15 12M943 737l-1 14M943 737l14 17M955 735l15 9M955 735l1 20M970 743l21 -3M970 743l-14 11M970 743l2 14M992 740l10 8M992 740l-19 17M992 740l4 19M1001 748l22 1M1001 748l-6 12M1001 748l12 13M1023 748l11 3M1023 748l-10 13M1023 748l-1 17M1034 752l20 6M1034 752l-13 14M1034 752l3 13M1054 757l14 -2M1054 757l-17 7M1054 757l1 15M1068 755l18 5M1068 755l-12 17M1068 755l3 15M1086 761l19 3M1086 761l-15 10M1086 761l2 13M1105 764l7 7M1105 764l-17 10M1105 764l1 20M1113 770l-6 13M1113 770l-1 25M698 700l21 5M698 700l12 12M698 700l-0 31M719 706l20 -1M719 706l-9 6M719 706l3 11M739 705l17 2M739 705l-17 11M739 705l4 17M755 707l15 6M755 707l-12 15M755 707l-0 16M770 713l16 1M770 713l-15 10M770 713l2 13M786 714l11 1M786 714l-14 12M786 714l5 21M797 715l-6 20M797 715l10 17M819 727l10 -0M819 727l-12 5M819 727l-2 8M828 726l23 3M828 726l-11 9M828 726l4 17M851 729l17 1M851 729l-18 14M851 729l7 14M867 730l13 8M867 730l-10 13M867 730l-3 15M880 738l16 1M880 738l-15 7M880 738l2 17M896 739l14 -0M896 739l-14 15M896 739l9 18M910 739l18 10M910 739l-5 18M910 739l3 17M928 749l14 3M928 749l-15 7M928 749l3 8M942 752l15 3M942 752l-11 6M942 752l6 10M956 755l16 2M956 755l-9 7M956 755l5 16M973 757l23 2M973 757l-12 14M973 757l8 16M995 759l18 2M995 759l-14 14M995 759l4 12M1013 761l9 5M1013 761l-14 10M1013 761l-1 18M1022 766l16 -1M1022 766l-9 13M1022 766l5 13M1037 765l18 7M1037 765l-10 14M1037 765l12 22M1055 772l16 -1M1055 772l-6 14M1055 772l11 14M1071 771l17 3M1071 771l-5 15M1071 771l9 17M1088 774l19 10M1088 774l-8 14M1088 774l5 16M1106 783l-14 6M1106 783l6 12M710 712l12 4M710 712l-12 20M710 712l5 19M722 716l21 5M722 716l-7 15M722 716l4 20M743 722l12 1M743 722l-17 14M743 722l5 20M755 723l17 3M755 723l-7 19M755 723l7 22M772 726l18 9M772 726l-10 19M772 726l4 16M791 735l16 -4M791 735l-14 7M791 735l1 13M806 731l11 3M806 731l-14 17M806 731l6 19M817 735l16 8M817 735l-5 15M817 735l6 18M833 743l25 1M833 743l-10 10M833 743l10 14M857 743l7 2M857 743l-14 14M857 743l3 16M865 745l18 9M865 745l-5 14M865 745l10 15M882 755l22 3M882 755l-7 5M882 755l11 15M905 757l8 -1M905 757l-12 12M905 757l1 14M913 756l18 1M913 756l-7 15M913 756l9 20M931 758l16 4M931 758l-9 18M931 758l6 16M947 762l14 9M947 762l-10 12M947 762l12 17M961 771l20 2M961 771l-2 8M961 771l8 13M981 773l18 -2M981 773l-12 11M981 773l7 17M1000 771l13 8M1000 771l-11 19M1000 771l3 18M1012 779l15 0M1012 779l-10 11M1012 779l12 13M1027 779l22 7M1027 779l-3 13M1049 786l17 -0M1049 786l-25 5M1066 786l14 2M1080 788l13 2M1080 788l32 8M1093 789l19 6M698 732l17 -1M698 732l2 10M714 731l11 5M714 731l-14 11M714 731l3 19M726 736l23 6M726 736l-8 14M726 736l4 12M748 742l14 3M748 742l-19 6M748 742l0 11M762 745l15 -3M762 745l-13 7M762 745l8 13M777 742l16 6M777 742l-6 15M777 742l3 14M792 748l20 2M792 748l-13 8M792 748l10 13M812 750l11 3M812 750l-10 12M812 750l4 14M823 753l20 4M823 753l-6 12M823 753l7 14M843 757l17 2M843 757l-14 10M843 757l6 16M860 759l15 1M860 759l-11 14M860 759l2 13M875 760l18 10M875 760l-13 13M875 760l7 22M893 770l13 2M893 770l-11 13M893 770l-1 10M906 772l16 4M906 772l-14 8M906 772l2 13M922 776l16 -2M922 776l-13 9M922 776l8 15M937 774l22 5M937 774l-7 17M937 774l7 16M959 779l10 5M959 779l-15 11M959 779l-2 16M969 784l19 7M969 784l-12 11M988 790l14 -1M988 790l36 1M988 790l-31 4M1003 789l21 2M700 742l18 8M700 742l8 20M700 742l-0 31M718 750l12 -2M718 750l-10 12M718 750l3 11M729 748l19 4M729 748l-9 13M729 748l7 20M749 752l21 5M749 752l-13 16M749 752l4 19M770 758l9 -1M770 758l-17 14M770 758l2 17M779 757l23 5M779 757l-8 18M779 757l10 18M802 762l14 3M802 762l-13 13M802 762l5 18M816 765l13 3M816 765l-9 15M816 765l-0 14M829 767l20 6M829 767l-13 11M829 767l4 19M849 773l12 -1M849 773l-17 13M849 773l1 18M862 772l21 10M862 772l-12 19M862 772l10 17M882 782l10 -3M882 782l26 2M882 782l-11 7M892 779l16 5M908 785l22 6M930 791l14 -1M930 791l27 4M944 789l13 5M708 762l12 -1M708 762l-8 11M708 762l2 11M720 761l16 7M720 761l-10 13M720 761l5 15M736 768l17 3M736 768l-11 8M736 768l11 13M753 771l19 3M753 771l-6 10M753 771l6 10M772 775l17 -0M772 775l-13 7M772 775l8 13M789 775l19 5M789 775l-9 13M789 775l5 17M807 780l8 -1M807 780l-14 12M807 780l2 11M816 778l17 8M816 778l-6 12M816 778l6 18M833 787l17 5M833 787l-11 9M850 791l21 -2M850 791l-29 5M700 773l10 1M700 773l-1 16M710 773l15 2M710 773l-11 15M710 773l11 17M725 776l22 6M725 776l-4 14M747 782l12 0M747 782l-26 9M759 782l21 6M780 788l14 3M794 791l16 -1M794 791l28 5M810 790l12 5M699 789l22 1" stroke="#000" stroke-width="1" fill="none"/></g><ellipse cx="908.0" cy="585.0" rx="118.3" ry="63.8" transform="rotate(-50.2 908.0 585.0)" fill="url(#bg)"/><ellipse cx="908.0" cy="585.0" rx="118.3" ry="63.8" transform="rotate(-50.2 908.0 585.0)" fill="none" stroke="#000" stroke-width="1.2"/></g><g clip-path="url(#barclip)"><ellipse cx="1300.3" cy="432.4" rx="159.1" ry="111.8" transform="rotate(-51.3 1300.3 432.4)" fill="url(#rB0)"/><path d="M1371.9,491.9 L1272.5,616.0 Q1250.6,588.2 1242.6,574.2 Q1232.6,572.2 1200.9,556.5 L1300.3,432.4 Z" fill="url(#rB0)"/><ellipse cx="1371.9" cy="491.9" rx="159.1" ry="111.8" transform="rotate(-51.3 1371.9 491.9)" fill="url(#rF0)"/><path d="M1100.3,232.4 L1340.3,232.4 L1230.3,582.4 L1100.3,582.4 Z" fill="url(#rB0)" clip-path="url(#s1clip0)"/><ellipse cx="1333.4" cy="454.7" rx="145.3" ry="104.2" transform="rotate(-55.3 1333.4 454.7)" fill="url(#rD0)"/><ellipse cx="1336.0" cy="479.0" rx="118.3" ry="63.8" transform="rotate(-50.2 1336.0 479.0)" fill="url(#rDb0)" clip-path="url(#edclip0)"/><ellipse cx="1336.0" cy="465.0" rx="118.3" ry="63.8" transform="rotate(-50.2 1336.0 465.0)" fill="url(#bg)"/><g clip-path="url(#silclip0)"><path d="M1510 280l15 2M1510 280l-23 8M1510 280l-14 9M1510 280l6 15M1525 282l15 5M1525 282l-9 13M1525 282l3 17M1540 287l-12 13M1540 287l-2 27M1440 277l8 3M1440 277l28 6M1440 277l-30 12M1440 277l-15 17M1440 277l2 13M1448 280l20 2M1448 280l-6 10M1448 280l10 15M1468 282l19 6M1468 282l-10 13M1468 282l9 15M1487 288l9 0M1487 288l-10 9M1487 288l4 12M1496 288l21 7M1496 288l-5 11M1496 288l9 19M1517 295l12 4M1517 295l-11 12M1517 295l6 10M1529 299l-6 6M1529 299l10 14M1344 275l21 0M1344 275l-28 7M1344 275l-14 13M1344 275l5 9M1364 276l7 6M1364 276l26 7M1364 276l-16 9M1364 276l3 13M1371 281l20 2M1371 281l-4 7M1371 281l7 16M1390 283l20 6M1390 283l-13 14M1390 283l7 16M1410 289l15 5M1410 289l-13 10M1410 289l4 15M1425 294l16 -4M1425 294l-11 10M1425 294l7 10M1442 290l17 6M1442 290l-10 14M1442 290l-0 18M1458 295l18 2M1458 295l-17 12M1458 295l7 14M1477 297l14 3M1477 297l-11 12M1477 297l1 14M1491 300l14 8M1491 300l-13 12M1491 300l2 18M1505 307l17 -2M1505 307l-12 11M1505 307l5 17M1523 305l16 8M1523 305l-12 19M1523 305l2 19M1539 313l-14 11M1539 313l-6 26M1264 275l16 1M1264 275l-21 5M1264 275l-6 12M1264 275l7 15M1280 276l24 0M1280 276l-9 14M1280 276l10 15M1304 276l11 6M1304 276l-14 15M1304 276l2 16M1315 282l14 6M1315 282l-9 11M1315 282l7 19M1330 288l19 -3M1330 288l-7 14M1330 288l8 12M1348 285l19 4M1348 285l-10 15M1348 285l4 17M1367 288l10 9M1367 288l-14 14M1367 288l3 16M1377 297l19 2M1377 297l-7 8M1377 297l13 14M1397 299l17 5M1397 299l-7 12M1397 299l2 17M1414 304l17 0M1414 304l-15 12M1414 304l1 13M1432 304l9 4M1432 304l-16 13M1432 304l-2 18M1441 308l24 1M1441 308l-11 14M1441 308l13 15M1465 309l13 2M1465 309l-11 14M1465 309l6 20M1478 312l15 7M1478 312l-7 18M1478 312l3 16M1494 318l17 6M1494 318l-12 9M1494 318l4 15M1510 324l14 0M1510 324l-13 9M1510 324l3 11M1524 325l-11 10M1524 325l9 14M1211 275l14 -0M1211 275l-29 9M1211 275l-9 9M1211 275l6 19M1225 274l18 5M1225 274l-8 19M1225 274l1 17M1242 280l16 8M1242 280l-17 12M1242 280l5 18M1258 287l13 3M1258 287l-11 11M1258 287l3 10M1271 290l20 1M1271 290l-10 7M1271 290l4 14M1291 291l16 2M1291 291l-16 13M1291 291l1 15M1306 293l16 9M1306 293l-15 13M1306 293l6 22M1323 302l15 -2M1323 302l-10 13M1323 302l8 16M1338 300l15 3M1338 300l-8 18M1338 300l5 18M1353 302l17 2M1353 302l-10 15M1353 302l6 15M1370 305l20 7M1370 305l-11 12M1370 305l6 17M1390 311l9 5M1390 311l-14 10M1390 311l4 16M1399 316l16 1M1399 316l-5 11M1399 316l10 16M1415 317l14 5M1415 317l-6 16M1415 317l4 18M1430 322l25 1M1430 322l-11 13M1430 322l7 16M1454 323l17 6M1454 323l-18 16M1454 323l5 19M1471 330l10 -2M1471 330l-12 13M1471 330l1 13M1481 327l16 6M1481 327l-9 15M1481 327l8 20M1497 333l16 2M1497 333l-8 14M1497 333l10 15M1513 335l20 4M1513 335l-6 13M1513 335l9 18M1533 339l-11 14M1533 339l6 16M1133 276l15 5M1133 276l29 3M1133 276l-0 16M1133 276l-8 24M1149 281l14 -2M1149 281l-16 11M1149 281l4 14M1163 279l19 5M1163 279l-10 17M1163 279l7 13M1181 284l21 0M1181 284l-12 8M1181 284l4 18M1202 284l15 9M1202 284l-16 18M1202 284l-0 20M1217 293l9 -2M1217 293l-15 11M1217 293l6 11M1226 292l22 6M1226 292l-2 13M1226 292l6 18M1247 298l14 -1M1247 298l-16 12M1247 298l7 19M1247 298l-8 23M1261 298l14 7M1261 298l-6 19M1261 298l3 14M1275 304l16 2M1275 304l-11 7M1275 304l13 14M1291 306l21 8M1291 306l-3 12M1291 306l8 13M1313 314l18 3M1313 314l-14 5M1313 314l5 15M1313 314l16 11M1330 318l13 -0M1330 318l-2 7M1343 317l16 -0M1343 317l-15 8M1343 317l5 12M1359 317l17 4M1359 317l-10 12M1359 317l8 16M1376 321l19 6M1376 321l-9 11M1376 321l5 20M1394 327l15 5M1394 327l-13 14M1394 327l6 13M1409 333l10 3M1409 333l-9 8M1409 333l-0 16M1419 335l18 3M1419 335l-10 13M1419 335l10 10M1437 339l22 4M1437 339l-8 6M1437 339l10 13M1459 342l13 0M1459 342l-13 9M1459 342l-1 9M1472 342l17 4M1472 342l-15 9M1472 342l9 14M1490 347l18 1M1490 347l-9 10M1490 347l4 12M1508 348l14 5M1508 348l-14 11M1508 348l-0 17M1522 353l17 2M1522 353l-14 12M1522 353l2 12M1539 355l-15 10M1539 355l5 15M1133 292l19 3M1133 292l-8 8M1133 292l8 14M1153 295l17 -3M1153 295l-11 10M1153 295l3 12M1170 292l16 10M1170 292l-14 16M1170 292l4 17M1186 302l16 2M1186 302l-12 7M1186 302l8 10M1202 304l22 0M1202 304l-8 8M1202 304l9 13M1223 305l8 5M1223 305l-13 13M1223 305l-2 20M1231 310l-10 14M1231 310l8 11M1255 317l9 -5M1255 317l-15 5M1255 317l5 9M1264 312l24 7M1264 312l-4 14M1264 312l13 17M1288 318l11 1M1288 318l-10 11M1288 318l-3 16M1299 319l19 10M1299 319l-14 15M1299 319l3 14M1317 329l11 -4M1317 329l-16 5M1317 329l6 11M1328 325l20 4M1328 325l-4 15M1328 325l9 18M1348 329l18 4M1348 329l-11 14M1348 329l5 18M1367 333l15 9M1367 333l-14 14M1367 333l4 18M1381 342l19 -1M1381 342l-10 9M1381 342l6 16M1400 340l9 8M1400 340l-12 17M1400 340l-2 15M1409 348l20 -4M1409 348l-11 7M1409 348l14 11M1409 348l-5 22M1429 345l17 7M1429 345l-6 14M1429 345l9 23M1446 352l11 -0M1446 352l-8 16M1446 352l4 13M1458 351l23 5M1458 351l-8 14M1458 351l9 17M1481 357l12 3M1481 357l-14 11M1481 357l0 13M1494 359l14 6M1494 359l-12 11M1494 359l6 22M1508 365l17 1M1508 365l-8 16M1508 365l5 16M1524 366l20 5M1524 366l-12 16M1524 366l7 19M1544 371l-12 14M1544 371l-10 31M1125 300l16 5M1125 300l6 13M1125 300l-0 33M1141 306l15 2M1141 306l-10 8M1141 306l4 13M1156 308l18 2M1156 308l-11 11M1156 308l5 17M1174 309l20 3M1174 309l-13 15M1174 309l10 20M1193 313l17 5M1193 313l-10 16M1193 313l-0 15M1210 317l11 7M1210 317l-17 10M1210 317l-1 14M1222 324l18 -3M1222 324l-12 7M1222 324l12 13M1222 324l-4 22M1240 321l20 4M1240 321l-6 16M1240 321l8 23M1260 325l18 4M1260 325l-13 19M1260 325l-0 22M1260 325l16 18M1277 329l8 5M1277 329l-2 14M1285 334l17 -1M1285 334l-9 9M1285 334l12 19M1302 334l22 7M1302 334l-5 20M1302 334l11 20M1324 340l14 3M1324 340l-11 13M1324 340l5 15M1338 343l15 4M1338 343l-9 12M1338 343l5 17M1353 347l18 4M1353 347l-10 13M1353 347l7 13M1371 351l17 7M1371 351l-11 9M1371 351l8 19M1388 358l11 -2M1388 358l-9 12M1388 358l3 14M1398 355l-7 16M1398 355l5 15M1423 359l15 8M1423 359l-19 11M1423 359l-3 13M1438 367l12 -2M1438 367l-18 5M1438 367l2 15M1450 365l17 3M1450 365l-10 17M1450 365l7 22M1467 368l15 2M1467 368l-10 19M1467 368l7 16M1482 370l18 11M1482 370l-8 14M1482 370l8 24M1499 381l13 0M1499 381l-10 13M1499 381l3 12M1512 381l19 4M1512 381l-10 12M1512 381l7 13M1531 385l-12 9M1531 385l3 16M1131 314l14 5M1131 314l-6 19M1131 314l10 22M1145 318l15 6M1145 318l-5 17M1145 318l5 21M1161 324l23 5M1161 324l-10 15M1161 324l6 17M1183 329l10 -2M1183 329l-17 12M1183 329l3 15M1193 327l16 4M1193 327l-7 16M1193 327l10 20M1210 331l-7 16M1210 331l8 15M1234 337l14 7M1234 337l-16 9M1234 337l3 12M1247 345l12 3M1247 345l-11 5M1247 345l5 10M1260 347l16 -4M1260 347l-7 7M1260 347l10 15M1276 343l21 10M1276 343l-6 19M1276 343l4 23M1297 354l16 -0M1297 354l-17 12M1297 354l4 10M1313 353l15 2M1313 353l-12 11M1313 353l-2 19M1328 355l15 4M1328 355l-18 17M1328 355l-1 19M1343 360l17 0M1343 360l-16 15M1343 360l1 13M1360 360l19 9M1360 360l-15 12M1360 360l1 19M1379 369l12 2M1379 369l-18 9M1379 369l4 12M1391 372l13 -1M1391 372l-8 9M1391 372l4 16M1404 371l16 2M1404 371l-9 17M1404 371l9 17M1420 372l20 10M1420 372l-8 16M1420 372l8 19M1440 382l17 5M1440 382l-12 9M1440 382l2 14M1457 387l17 -4M1457 387l-15 8M1457 387l0 9M1474 384l16 10M1474 384l-16 13M1474 384l0 20M1490 394l13 -1M1490 394l-16 10M1490 394l7 13M1502 393l17 1M1502 393l-6 14M1502 393l6 12M1520 394l14 7M1520 394l-11 11M1520 394l5 18M1534 401l-9 11M1534 401l6 13M1125 333l16 2M1125 333l1 16M1141 335l10 4M1141 335l-14 14M1141 335l5 15M1151 339l16 2M1151 339l-4 12M1151 339l12 15M1166 341l20 3M1166 341l-3 13M1166 341l4 17M1186 344l17 4M1186 344l-15 14M1186 344l5 12M1203 348l15 -1M1203 348l-12 8M1203 348l1 12M1218 346l19 3M1218 346l-14 14M1218 346l6 15M1236 350l17 5M1236 350l-13 12M1236 350l7 18M1253 355l17 8M1253 355l-10 13M1253 355l4 22M1269 362l11 4M1269 362l-13 14M1269 362l4 12M1280 366l21 -2M1280 366l-7 8M1280 366l4 14M1301 364l10 8M1301 364l-17 16M1301 364l6 21M1311 372l16 2M1311 372l-4 13M1311 372l11 13M1327 374l17 -2M1327 374l-6 11M1327 374l7 16M1344 372l16 6M1344 372l-10 18M1344 372l12 17M1360 379l23 2M1360 379l-4 11M1360 379l5 12M1383 381l12 6M1383 381l-17 10M1383 381l-0 14M1395 387l18 0M1395 387l-12 8M1395 387l10 11M1413 388l16 4M1413 388l-8 11M1413 388l2 13M1428 391l14 4M1428 391l-14 9M1428 391l3 12M1442 396l15 1M1442 396l-11 8M1442 396l9 12M1457 396l17 7M1457 396l-6 11M1457 396l12 15M1474 404l23 3M1474 404l-5 8M1474 404l9 14M1496 407l12 -2M1496 407l-13 11M1496 407l-2 12M1509 405l16 7M1509 405l-14 14M1509 405l3 23M1525 412l15 2M1525 412l-13 15M1525 412l8 17M1540 414l-7 15M1540 414l5 20M1127 349l20 2M1127 349l2 16M1127 349l-2 27M1146 351l17 3M1146 351l-17 14M1146 351l3 16M1163 354l8 4M1163 354l-14 13M1163 354l-3 16M1170 358l20 -3M1170 358l-10 11M1170 358l11 9M1191 356l13 5M1191 356l-10 12M1191 356l3 22M1204 360l20 1M1204 360l-10 17M1204 360l13 15M1223 361l20 6M1223 361l-6 14M1223 361l8 23M1243 367l14 9M1243 367l-11 17M1243 367l5 14M1257 376l16 -2M1257 376l-9 5M1257 376l3 15M1273 374l11 6M1273 374l-14 16M1273 374l8 14M1284 380l23 5M1284 380l-3 8M1284 380l14 12M1307 385l15 0M1307 385l-8 7M1307 385l2 12M1322 385l13 5M1322 385l-13 11M1322 385l5 13M1335 390l22 -1M1335 390l-8 8M1335 390l5 10M1356 390l10 1M1356 390l-16 10M1356 390l-1 16M1366 391l17 5M1366 391l-11 15M1366 391l11 17M1383 395l22 4M1383 395l-6 12M1383 395l3 18M1405 399l9 2M1405 399l-18 15M1405 399l3 20M1414 401l17 3M1414 401l-7 18M1414 401l5 19M1431 404l19 4M1431 404l-12 16M1431 404l9 21M1451 408l18 4M1451 408l-10 17M1451 408l7 17M1469 412l14 6M1469 412l-11 14M1469 412l7 19M1483 418l12 0M1483 418l-8 12M1483 418l3 16M1495 419l17 9M1495 419l-8 16M1495 419l7 21M1512 428l21 1M1512 428l-10 12M1512 428l7 12M1533 429l12 5M1533 429l-14 11M1533 429l5 18M1545 434l-8 13M1545 434l-7 24M1129 365l20 2M1129 365l-4 11M1129 365l4 11M1149 367l11 3M1149 367l-16 9M1149 367l4 11M1160 370l21 -2M1160 370l-7 8M1160 370l13 12M1181 367l13 10M1181 367l-8 14M1181 367l5 16M1194 377l23 -2M1194 377l-8 7M1194 377l6 16M1217 375l15 9M1217 375l-17 18M1217 375l3 21M1232 384l16 -3M1232 384l-12 12M1232 384l5 15M1232 384l16 13M1248 381l11 10M1248 381l-1 16M1259 391l21 -3M1259 391l-12 6M1259 391l7 14M1281 388l18 4M1281 388l-15 17M1281 388l-1 16M1298 392l10 4M1298 392l-19 12M1298 392l-3 17M1309 397l18 1M1309 397l-13 12M1309 397l7 13M1327 398l13 2M1327 398l-11 11M1327 398l2 21M1340 400l15 5M1340 400l-11 19M1340 400l11 19M1355 405l22 2M1355 405l-5 13M1355 405l7 19M1377 407l9 6M1377 407l-15 17M1377 407l0 15M1387 414l21 6M1387 414l-9 9M1387 414l11 14M1407 419l12 1M1407 419l-10 8M1407 419l2 15M1419 420l21 5M1419 420l-10 15M1419 420l4 17M1441 424l17 1M1441 424l-17 12M1441 424l8 17M1441 424l-8 23M1458 425l18 5M1458 425l-9 16M1458 425l-0 16M1476 431l11 3M1476 431l-18 10M1476 431l-2 15M1486 434l16 6M1486 434l-13 12M1486 434l6 18M1502 440l17 0M1502 440l-10 12M1502 440l2 14M1519 440l18 7M1519 440l-15 14M1519 440l8 18M1537 447l-10 11M1537 447l0 10M1125 376l8 -0M1125 376l13 15M1125 376l10 32M1133 375l20 2M1133 375l5 15M1153 378l20 4M1153 378l-15 13M1153 378l8 21M1173 382l13 2M1173 382l-12 17M1173 382l-1 19M1186 384l14 9M1186 384l-14 17M1186 384l6 22M1200 393l20 3M1200 393l-7 13M1200 393l7 14M1220 396l17 3M1220 396l-13 11M1220 396l6 11M1237 399l11 -2M1237 399l-11 8M1237 399l3 14M1248 397l19 8M1248 397l-7 17M1248 397l13 18M1266 405l14 -1M1266 405l-6 10M1266 405l5 14M1280 404l16 5M1280 404l-8 15M1280 404l12 15M1296 409l20 0M1296 409l-4 10M1296 409l12 13M1316 409l12 10M1316 409l-8 13M1328 419l22 -0M1328 419l-21 3M1328 419l-8 13M1328 419l8 13M1350 419l12 5M1350 419l-14 13M1350 419l2 16M1362 424l15 -2M1362 424l-10 11M1362 424l8 16M1377 423l20 5M1377 423l-8 17M1377 423l6 15M1398 427l12 7M1398 427l-15 10M1398 427l3 19M1409 434l14 2M1409 434l-9 12M1409 434l9 16M1424 437l-6 14M1424 437l8 11M1449 441l9 0M1449 441l-16 7M1449 441l-2 16M1458 441l15 5M1458 441l-11 16M1458 441l4 16M1473 446l19 6M1473 446l-11 11M1473 446l12 16M1492 452l12 2M1492 452l-7 10M1492 452l10 12M1504 454l23 4M1504 454l-2 10M1504 454l14 11M1527 458l10 -1M1527 458l-9 7M1527 458l5 11M1538 458l-5 12M1538 458l1 29M1138 391l23 8M1138 391l-3 17M1138 391l12 15M1161 399l11 2M1161 399l-11 7M1161 399l2 15M1172 401l20 5M1172 401l-9 12M1172 401l9 12M1193 406l14 2M1193 406l-11 7M1193 406l1 12M1207 408l19 -0M1207 408l-13 10M1207 408l5 15M1226 407l14 6M1226 407l-14 15M1226 407l-1 14M1240 414l20 1M1240 414l-15 8M1240 414l1 18M1240 414l19 14M1260 415l11 4M1260 415l-1 13M1272 419l20 1M1272 419l-12 9M1272 419l2 18M1292 419l16 3M1292 419l-18 18M1292 419l-0 22M1308 422l13 10M1308 422l-16 19M1308 422l-3 20M1320 432l16 -0M1320 432l-16 11M1320 432l1 11M1337 432l15 3M1337 432l-15 11M1337 432l3 18M1352 435l18 5M1352 435l-12 15M1352 435l10 18M1370 440l13 -2M1370 440l-8 13M1370 440l5 19M1383 437l17 9M1383 437l-8 21M1383 437l6 21M1400 446l18 4M1400 446l-11 13M1400 446l4 11M1418 450l14 -3M1418 450l-14 7M1418 450l1 13M1432 448l14 9M1432 448l-13 16M1432 448l6 16M1447 457l16 1M1447 457l-8 7M1447 457l10 14M1462 457l22 5M1462 457l-6 13M1462 457l12 14M1485 462l17 2M1485 462l-10 9M1485 462l2 15M1502 464l16 1M1502 464l-15 13M1502 464l4 19M1518 465l15 4M1518 465l-12 18M1518 465l5 15M1533 469l-10 11M1533 469l6 17M1135 407l15 -1M1135 407l-2 8M1150 406l14 7M1150 406l-17 10M1150 406l3 15M1164 413l18 -0M1164 413l-11 8M1164 413l5 13M1182 413l12 5M1182 413l-13 13M1182 413l4 15M1194 418l18 5M1194 418l-8 10M1194 418l4 16M1212 423l13 -1M1212 423l-14 11M1212 423l6 11M1225 422l17 9M1225 422l-7 12M1225 422l6 20M1242 431l18 -3M1242 431l-10 11M1242 431l4 14M1259 428l14 9M1259 428l-14 18M1259 428l5 21M1273 437l18 4M1273 437l-9 12M1273 437l10 15M1292 441l13 1M1292 441l-8 11M1292 441l5 13M1305 443l16 0M1305 443l-8 11M1305 443l11 17M1321 443l18 7M1321 443l-5 17M1321 443l13 14M1340 449l22 3M1340 449l-6 8M1340 449l4 9M1362 453l13 6M1362 453l-19 6M1362 453l-1 12M1375 458l14 0M1375 458l-15 6M1375 458l1 15M1389 459l15 -2M1389 459l-13 14M1389 459l7 14M1404 457l15 6M1404 457l-8 16M1404 457l7 20M1419 464l20 0M1419 464l-8 13M1419 464l10 14M1439 464l18 7M1439 464l-10 14M1439 464l1 19M1456 471l18 0M1456 471l-16 12M1456 471l2 17M1475 471l12 5M1475 471l-17 16M1475 471l-1 18M1487 477l19 6M1487 477l-14 12M1487 477l9 13M1506 483l17 -3M1506 483l-11 6M1506 483l4 12M1523 480l16 6M1523 480l-13 15M1523 480l0 18M1539 486l-16 12M1539 486l6 14M1133 416l20 5M1133 416l-6 14M1133 416l4 23M1153 421l16 6M1153 421l-16 18M1153 421l8 21M1169 426l18 1M1169 426l-8 15M1169 426l4 18M1186 428l12 6M1186 428l-14 17M1186 428l0 19M1198 433l20 1M1198 433l-11 13M1198 433l5 17M1218 434l13 8M1218 434l-15 16M1218 434l8 16M1231 442l14 3M1231 442l-5 8M1231 442l12 12M1246 445l19 4M1246 445l-2 8M1246 445l6 16M1265 449l19 3M1265 449l-13 12M1265 449l11 13M1283 452l13 1M1283 452l-7 9M1283 452l7 15M1296 454l19 6M1296 454l-6 13M1296 454l5 17M1316 460l18 -2M1316 460l-14 10M1316 460l-0 12M1316 460l18 12M1334 457l9 1M1334 457l-0 14M1343 459l18 6M1343 459l-10 13M1343 459l8 21M1361 465l16 8M1361 465l-9 15M1361 465l5 17M1377 473l20 -0M1377 473l-11 8M1377 473l5 10M1396 473l15 4M1396 473l-14 10M1396 473l2 15M1411 477l17 1M1411 477l-13 11M1411 477l9 16M1429 478l11 5M1429 478l-9 15M1429 478l1 13M1440 483l18 5M1440 483l-10 8M1440 483l13 16M1458 488l15 2M1458 488l-5 11M1458 488l8 12M1473 489l22 0M1473 489l-8 10M1473 489l11 16M1495 490l15 6M1495 490l-12 16M1495 490l3 16M1511 495l13 3M1511 495l-12 11M1511 495l8 17M1523 498l22 2M1523 498l-5 14M1523 498l4 16M1545 500l-18 14M1545 500l-0 15M1127 430l10 9M1127 430l3 19M1137 439l24 3M1137 439l-7 10M1137 439l15 14M1161 441l12 3M1161 441l-9 11M1161 441l6 18M1172 444l14 2M1172 444l-5 15M1172 444l6 12M1187 447l17 4M1187 447l-8 10M1187 447l5 17M1203 450l23 -0M1203 450l-11 13M1203 450l12 13M1226 450l17 4M1226 450l-11 13M1226 450l6 17M1243 454l8 8M1243 454l-11 13M1243 454l3 16M1252 462l24 0M1252 462l-6 9M1252 462l13 14M1276 462l14 6M1276 462l-12 14M1276 462l0 15M1291 467l11 3M1291 467l-14 10M1291 467l3 12M1302 470l14 1M1302 470l-8 9M1302 470l4 10M1316 472l18 -0M1316 472l-10 9M1316 472l9 13M1334 471l18 8M1334 471l-9 13M1334 471l11 24M1351 479l14 2M1351 479l-7 16M1351 479l2 17M1366 481l16 2M1366 481l-12 15M1366 481l4 18M1382 483l17 5M1382 483l-12 16M1382 483l3 18M1399 488l21 5M1399 488l-13 13M1399 488l7 17M1420 493l9 -2M1420 493l-14 12M1420 493l3 14M1430 491l24 8M1430 491l-6 17M1430 491l9 22M1453 498l12 1M1453 498l-15 14M1453 498l5 16M1465 499l18 6M1465 499l-7 15M1465 499l6 21M1484 505l15 0M1484 505l-12 15M1484 505l5 13M1498 506l20 6M1498 506l-10 13M1498 506l6 18M1518 512l9 2M1518 512l-14 12M1518 512l1 18M1527 514l17 1M1527 514l-8 15M1527 514l4 16M1545 515l-13 15M1545 515l-8 28M1130 449l21 4M1130 449l2 18M1130 449l-3 31M1152 453l15 7M1152 453l-19 14M1152 453l2 18M1167 459l11 -2M1167 459l-14 11M1167 459l3 14M1178 457l14 7M1178 457l-8 16M1178 457l4 14M1192 464l24 -0M1192 464l-10 7M1192 464l7 16M1215 463l17 3M1215 463l-17 16M1215 463l-2 21M1233 467l13 4M1233 467l-19 17M1233 467l2 16M1246 470l19 6M1246 470l-11 13M1246 470l2 14M1265 476l12 1M1265 476l-16 8M1265 476l5 13M1277 477l17 2M1277 477l-7 11M1277 477l4 14M1293 479l12 2M1293 479l-13 12M1293 479l6 16M1306 481l19 4M1306 481l-6 15M1306 481l10 17M1325 484l20 11M1325 484l-9 13M1325 484l10 18M1344 495l9 1M1344 495l-10 7M1344 495l4 11M1353 496l16 3M1353 496l-5 10M1353 496l13 17M1370 499l15 2M1370 499l-4 14M1370 499l9 18M1385 501l20 4M1385 501l-7 16M1385 501l6 11M1406 505l17 3M1406 505l-14 7M1406 505l3 18M1423 507l15 5M1423 507l-14 15M1423 507l6 19M1438 512l20 2M1438 512l-9 14M1438 512l3 18M1458 514l14 6M1458 514l-17 16M1458 514l3 16M1472 521l17 -2M1472 521l-11 9M1472 521l1 11M1488 519l16 5M1488 519l-16 13M1488 519l5 16M1504 524l15 6M1504 524l-10 11M1504 524l4 14M1519 529l13 1M1519 529l-11 8M1519 529l10 12M1531 530l-3 11M1531 530l6 13M1132 467l21 4M1132 467l-5 12M1132 467l7 16M1153 471l17 3M1153 471l-14 13M1153 471l5 15M1170 473l12 -3M1170 473l-11 12M1170 473l7 12M1182 471l16 9M1182 471l-5 15M1198 480l15 4M1198 480l-21 6M1198 480l-6 11M1198 480l3 14M1213 484l21 -1M1213 484l-11 10M1213 484l6 15M1235 483l14 1M1235 483l-16 16M1235 483l8 17M1248 484l21 4M1248 484l-5 16M1248 484l5 17M1270 488l11 3M1270 488l-16 12M1270 488l4 17M1280 491l20 4M1280 491l-7 14M1280 491l9 15M1300 495l16 2M1300 495l-11 11M1300 495l6 21M1316 497l19 5M1316 497l-10 19M1316 497l-1 19M1335 502l14 4M1335 502l-19 14M1335 502l5 18M1349 506l17 7M1349 506l-9 14M1349 506l6 17M1366 513l13 5M1366 513l-11 11M1366 513l-1 16M1379 517l12 -6M1379 517l-14 11M1379 517l8 8M1379 517l-5 22M1391 512l18 11M1391 512l-5 14M1409 523l20 4M1409 523l-22 3M1409 523l-14 12M1409 523l11 12M1429 527l12 3M1429 527l-9 8M1429 527l3 12M1441 530l20 0M1441 530l-10 9M1441 530l10 12M1461 530l11 1M1461 530l-10 12M1461 530l7 14M1473 531l21 3M1473 531l-5 13M1473 531l4 15M1494 534l14 3M1494 534l-17 12M1494 534l7 19M1507 538l21 4M1507 538l-7 15M1507 538l3 15M1529 542l8 2M1529 542l-19 11M1529 542l-2 14M1537 544l-10 12M1537 544l9 14M1127 479l12 4M1127 479l2 11M1139 483l20 2M1139 483l-10 7M1139 483l8 14M1159 486l18 -0M1159 486l-12 11M1159 486l5 15M1177 485l16 6M1177 485l-13 15M1177 485l6 18M1193 491l9 3M1193 491l-10 12M1193 491l4 14M1202 494l17 4M1202 494l-6 11M1202 494l9 14M1219 498l24 1M1219 498l-8 9M1219 498l8 10M1243 500l10 1M1243 500l-16 8M1243 500l3 18M1253 501l20 5M1253 501l-8 17M1253 501l8 21M1274 506l15 0M1274 506l-13 16M1274 506l-2 19M1274 506l17 17M1289 506l17 10M1289 506l2 17M1306 516l9 0M1306 516l-15 7M1306 516l-0 11M1315 516l24 4M1315 516l-10 11M1315 516l10 13M1339 520l16 3M1339 520l-14 9M1339 520l-0 16M1355 524l10 5M1355 524l-16 13M1355 524l-2 16M1365 529l-11 10M1365 529l9 10M1387 526l8 9M1387 526l-13 13M1387 526l4 17M1395 535l25 0M1395 535l-4 8M1395 535l8 16M1420 535l12 4M1420 535l-17 16M1420 535l4 18M1432 539l19 3M1432 539l-7 14M1432 539l3 12M1451 542l17 2M1451 542l-16 9M1451 542l-1 14M1468 545l9 2M1468 545l-18 11M1468 545l4 16M1477 547l24 6M1477 547l-5 14M1477 547l10 19M1501 553l10 -0M1501 553l-14 13M1501 553l4 17M1510 553l17 3M1510 553l-6 18M1510 553l12 21M1527 556l19 2M1527 556l-5 18M1527 556l9 15M1546 558l-11 13M1546 558l-2 30M1129 491l18 6M1129 491l3 16M1147 497l17 3M1147 497l-15 10M1147 497l6 15M1164 500l19 3M1164 500l-11 12M1164 500l-0 15M1183 503l13 2M1183 503l-19 12M1183 503l1 12M1196 505l15 3M1196 505l-13 11M1196 505l3 18M1211 508l15 0M1211 508l-11 15M1211 508l6 16M1227 508l19 9M1227 508l-9 15M1227 508l6 24M1245 517l15 4M1245 517l-13 14M1245 517l5 12M1261 522l11 3M1261 522l-10 8M1261 522l-0 14M1271 525l19 -2M1271 525l-11 11M1271 525l8 15M1291 523l15 4M1291 523l-12 17M1291 523l8 20M1306 527l19 2M1306 527l-6 16M1306 527l7 18M1325 530l14 7M1325 530l-12 15M1325 530l7 21M1339 536l14 3M1339 536l-7 14M1339 536l8 11M1354 539l20 -0M1354 539l-6 8M1354 539l10 14M1374 539l17 4M1374 539l-11 14M1374 539l5 22M1391 543l12 8M1391 543l-12 18M1391 543l8 19M1403 551l21 2M1403 551l-4 10M1403 551l3 11M1425 553l10 -1M1425 553l-18 9M1425 553l-1 12M1435 551l15 5M1435 551l-11 13M1435 551l5 17M1450 556l22 5M1450 556l-11 12M1450 556l7 13M1472 561l14 5M1472 561l-15 8M1472 561l-1 17M1487 566l18 5M1487 566l-16 11M1487 566l10 11M1504 571l18 3M1504 571l-8 7M1504 571l-0 14M1522 574l13 -3M1522 574l-18 10M1522 574l2 9M1536 571l-11 12M1536 571l9 17M1132 507l21 6M1132 507l13 14M1132 507l-7 31M1153 512l10 3M1153 512l-8 8M1153 512l9 13M1164 515l20 0M1164 515l-2 10M1164 515l10 15M1184 516l16 7M1184 516l-10 15M1184 516l2 19M1200 523l18 1M1200 523l-14 12M1200 523l10 14M1218 523l15 8M1218 523l-8 14M1218 523l3 15M1233 532l18 -2M1233 532l-12 7M1233 532l5 8M1250 529l10 6M1250 529l-13 11M1250 529l2 14M1260 535l19 5M1260 535l-8 8M1260 535l14 14M1279 540l20 3M1279 540l-5 10M1279 540l9 12M1299 543l13 2M1299 543l-11 8M1299 543l2 12M1313 545l20 6M1313 545l-12 10M1313 545l5 15M1332 551l15 -4M1332 551l-15 9M1332 551l3 10M1347 547l16 6M1347 547l-12 14M1347 547l2 22M1363 553l16 8M1363 553l-14 17M1363 553l6 17M1379 561l20 0M1379 561l-10 9M1379 561l8 16M1379 561l16 14M1399 561l8 0M1399 561l-3 14M1406 562l17 3M1406 562l-11 13M1406 562l13 19M1424 564l16 4M1424 564l-5 16M1440 568l18 1M1440 568l-21 13M1440 568l-5 19M1440 568l6 16M1457 569l13 8M1457 569l-11 15M1471 577l26 -0M1471 577l-25 7M1471 577l-2 14M1471 577l13 18M1497 577l7 7M1497 577l-13 18M1497 577l3 17M1504 585l20 -2M1504 585l-5 9M1504 585l5 13M1524 583l20 5M1524 583l-15 14M1524 583l4 18M1544 588l-15 13M1544 588l-6 28M1145 521l17 5M1145 521l-20 17M1145 521l6 19M1162 526l12 4M1162 526l-11 14M1162 526l-2 13M1174 530l12 5M1174 530l-14 8M1174 530l4 12M1186 535l24 2M1186 535l-8 7M1186 535l7 15M1210 537l11 2M1210 537l-17 13M1210 537l0 19M1221 539l17 1M1221 539l-11 17M1221 539l5 17M1238 540l15 4M1238 540l-12 16M1238 540l8 24M1253 543l22 7M1253 543l-6 20M1253 543l5 16M1274 550l14 2M1274 550l-17 9M1274 550l6 14M1289 552l12 4M1289 552l-8 12M1289 552l2 20M1301 555l16 5M1301 555l-11 16M1301 555l12 16M1318 560l17 1M1318 560l-5 11M1318 560l5 16M1335 561l15 9M1335 561l-12 15M1335 561l2 18M1350 569l19 1M1350 569l-13 9M1350 569l10 12M1369 570l18 7M1369 570l-9 12M1369 570l0 16M1387 577l9 -2M1387 577l-18 9M1387 577l4 13M1396 575l23 6M1396 575l-5 15M1396 575l12 21M1419 581l16 6M1419 581l-11 16M1419 581l-1 17M1435 587l11 -3M1435 587l-16 10M1435 587l1 13M1446 584l23 7M1446 584l-11 15M1446 584l8 16M1469 592l15 4M1469 592l-14 9M1469 592l4 15M1484 595l16 -1M1484 595l-11 11M1484 595l6 12M1499 594l10 3M1499 594l-10 13M1499 594l2 21M1510 597l19 4M1510 597l-8 17M1510 597l9 19M1529 601l-10 15M1529 601l9 15M1125 537l26 2M1125 537l7 11M1125 537l0 29M1151 539l9 -1M1151 539l-19 9M1151 539l-2 17M1151 539l14 14M1160 538l18 3M1160 538l5 15M1178 542l15 8M1178 542l-13 12M1178 542l6 19M1193 550l17 6M1193 550l-9 11M1193 550l9 16M1210 556l16 -0M1210 556l-8 11M1210 556l8 10M1226 556l20 7M1226 556l-8 10M1226 556l10 17M1246 563l11 -4M1246 563l-10 10M1246 563l2 13M1257 559l24 5M1257 559l-9 16M1257 559l7 19M1281 564l10 7M1281 564l-16 14M1281 564l-2 13M1290 571l22 0M1290 571l-12 5M1290 571l11 15M1290 571l-5 22M1313 572l10 5M1313 572l-12 15M1313 572l3 13M1322 576l14 2M1322 576l-7 8M1322 576l12 12M1336 578l23 3M1336 578l-2 10M1336 578l13 19M1360 582l10 4M1360 582l-11 16M1360 582l-2 18M1369 586l22 4M1369 586l-12 13M1369 586l9 18M1391 590l17 6M1391 590l-13 14M1391 590l4 11M1408 596l10 1M1408 596l-13 5M1408 596l5 10M1418 597l17 2M1418 597l-5 9M1418 597l5 10M1435 599l19 1M1435 599l-13 8M1435 599l9 13M1454 600l18 6M1454 600l-10 12M1454 600l6 14M1473 606l17 0M1473 606l-12 8M1473 606l1 14M1490 607l12 8M1490 607l-16 14M1490 607l-2 19M1501 615l17 1M1501 615l-14 11M1501 615l7 16M1519 616l19 -0M1519 616l-10 15M1519 616l0 16M1538 616l-19 16M1538 616l1 17M1132 548l17 8M1132 548l-7 18M1132 548l9 17M1149 556l16 -3M1149 556l-7 9M1149 556l10 18M1165 553l19 8M1165 553l-6 20M1165 553l12 25M1184 561l18 5M1184 561l-7 17M1184 561l6 14M1202 566l15 -1M1202 566l-13 8M1202 566l8 13M1217 566l18 7M1217 566l-8 14M1217 566l5 19M1236 573l12 3M1236 573l-13 11M1236 573l1 12M1248 576l16 2M1248 576l-11 9M1248 576l6 11M1264 578l14 -1M1264 578l-10 9M1264 578l7 16M1278 577l-7 17M1278 577l7 17M1301 586l14 -1M1301 586l-16 7M1301 586l5 15M1315 585l19 3M1315 585l-9 16M1315 585l3 16M1335 588l14 10M1335 588l-17 12M1335 588l1 20M1349 598l9 2M1349 598l-13 10M1349 598l5 15M1358 599l21 5M1358 599l-4 14M1358 599l13 11M1378 604l16 -3M1378 604l-8 7M1378 604l6 16M1395 601l18 5M1395 601l-11 19M1395 601l6 21M1413 606l10 1M1413 606l-12 15M1413 606l5 18M1423 607l22 5M1423 607l-5 17M1423 607l9 20M1444 613l16 2M1444 613l-12 15M1444 613l3 15M1460 614l13 6M1460 614l-13 13M1460 614l8 16M1474 620l14 5M1474 620l-5 10M1474 620l3 16M1487 625l21 6M1487 625l-10 11M1487 625l6 12M1508 631l11 1M1508 631l-15 7M1508 631l2 14M1519 632l19 1M1519 632l-9 13M1519 632l8 11M1538 633l-11 10M1538 633l-8 25M1538 633l8 34M1125 566l16 -2M1125 566l6 16M1141 565l17 9M1141 565l-10 18M1141 565l4 21M1159 574l18 4M1159 574l-13 12M1159 574l0 11M1177 578l13 -3M1177 578l-17 7M1177 578l1 7M1189 575l20 5M1189 575l-12 11M1189 575l7 19M1210 579l13 5M1210 579l-13 14M1210 579l-3 19M1223 584l14 1M1223 584l-15 14M1223 584l5 19M1237 585l17 2M1237 585l-10 18M1237 585l7 16M1254 587l17 7M1254 587l-11 14M1254 587l5 22M1271 594l14 -1M1271 594l-12 14M1271 594l1 17M1285 593l21 8M1285 593l-13 17M1285 593l9 22M1306 601l12 -1M1306 601l-12 15M1306 601l1 17M1318 601l18 7M1318 601l-11 18M1318 601l7 20M1336 608l18 5M1336 608l-10 13M1336 608l6 14M1354 613l17 -2M1354 613l-12 9M1354 613l1 12M1371 611l13 9M1371 611l-16 14M1371 611l4 20M1384 620l17 1M1384 620l-10 11M1384 620l4 10M1401 622l17 3M1401 622l-13 8M1401 622l7 15M1418 625l15 3M1418 625l-9 12M1418 625l3 11M1432 628l15 0M1432 628l-11 8M1432 628l2 12M1448 628l21 3M1448 628l-13 12M1448 628l6 14M1468 630l9 7M1468 630l-15 11M1468 630l1 15M1477 637l16 1M1477 637l-8 8M1477 637l13 12M1493 638l17 8M1493 638l-3 12M1493 638l7 13M1510 645l17 -2M1510 645l-10 6M1510 645l12 11M1527 643l-5 13M1527 643l3 15M1132 583l14 3M1132 583l3 11M1146 586l13 -1M1146 586l-12 7M1146 586l7 11M1159 585l18 0M1159 585l-6 12M1159 585l10 21M1178 585l19 8M1178 585l-8 21M1178 585l5 22M1196 594l11 5M1196 594l-14 14M1196 594l0 16M1207 598l20 5M1207 598l-11 12M1207 598l6 13M1227 603l17 -2M1227 603l-14 9M1227 603l2 14M1244 601l15 8M1244 601l-14 16M1244 601l0 20M1259 608l13 2M1259 608l-15 12M1259 608l5 14M1272 610l22 5M1272 610l-8 11M1272 610l10 14M1294 616l14 2M1294 616l-12 8M1294 616l2 10M1307 618l18 2M1307 618l-11 8M1307 618l9 14M1325 620l16 2M1325 620l-8 12M1325 620l8 13M1341 622l13 2M1341 622l-8 11M1341 622l7 14M1355 624l20 6M1355 624l-6 11M1355 624l9 20M1374 631l14 -1M1374 631l-11 14M1374 631l2 11M1388 630l20 7M1388 630l-11 11M1388 630l8 17M1408 637l13 -1M1408 637l-12 10M1408 637l-3 17M1408 637l13 18M1421 635l13 4M1421 635l0 20M1435 640l19 2M1435 640l-13 15M1435 640l4 18M1454 641l15 4M1454 641l-15 16M1454 641l4 16M1469 645l21 4M1469 645l-12 12M1469 645l8 16M1490 649l10 2M1490 649l-13 12M1490 649l-3 14M1501 651l21 5M1501 651l-13 12M1501 651l6 17M1522 656l8 2M1522 656l-15 11M1522 656l3 15M1530 658l16 9M1530 658l-6 14M1530 658l13 17M1546 667l-3 8M1134 594l19 4M1134 594l2 18M1134 594l-1 30M1153 597l16 9M1153 597l-17 14M1153 597l-1 14M1169 606l13 1M1169 606l-17 5M1169 606l1 9M1182 607l14 2M1182 607l-12 8M1182 607l7 10M1196 610l17 2M1196 610l-7 8M1196 610l5 15M1213 612l16 5M1213 612l-12 13M1213 612l8 19M1229 617l15 3M1229 617l-8 14M1229 617l6 14M1244 620l20 2M1244 620l-9 11M1244 620l13 11M1264 622l18 2M1264 622l-7 10M1264 622l7 13M1282 624l14 2M1282 624l-12 11M1282 624l6 17M1296 626l21 6M1296 626l-8 16M1296 626l4 18M1317 632l17 1M1317 632l-17 11M1317 632l2 14M1333 633l15 3M1333 633l-15 13M1333 633l5 14M1348 636l15 8M1348 636l-10 11M1348 636l-2 14M1364 644l13 -3M1364 644l-17 6M1364 644l7 11M1376 641l20 5M1376 641l-5 14M1376 641l7 20M1396 647l9 7M1396 647l-13 14M1405 653l16 2M1405 653l-22 8M1405 653l-2 13M1405 653l8 15M1421 655l17 3M1421 655l-9 14M1421 655l9 17M1438 657l19 -0M1438 657l-7 15M1438 657l11 14M1457 657l20 4M1457 657l-8 14M1477 661l10 2M1477 661l-28 10M1487 663l19 5M1506 668l18 4M1524 671l19 3M1136 611l17 -0M1136 611l-3 13M1136 611l10 12M1153 611l18 4M1153 611l-7 12M1153 611l7 20M1171 615l19 3M1171 615l-11 16M1171 615l3 17M1190 618l12 7M1190 618l-16 14M1190 618l4 18M1202 624l20 7M1202 624l-8 12M1202 624l6 16M1221 631l14 0M1221 631l-14 9M1221 631l7 14M1235 631l21 0M1235 631l-7 13M1235 631l8 15M1257 631l14 3M1257 631l-13 15M1257 631l6 17M1270 635l18 7M1270 635l-7 13M1270 635l6 19M1288 642l12 2M1288 642l-12 13M1288 642l1 11M1300 644l19 3M1300 644l-10 9M1300 644l7 14M1319 646l20 1M1319 646l-13 12M1319 646l4 17M1339 647l8 3M1339 647l-15 16M1339 647l1 18M1347 650l24 6M1347 650l-7 15M1347 650l13 22M1371 655l13 5M1371 655l-12 16M1371 655l2 19M1383 661l20 5M1383 661l-11 14M1403 666l10 2M1403 666l-30 9M1413 668l18 4M1431 672l19 -1M1133 624l13 -0M1133 624l6 15M1133 624l3 34M1146 624l14 8M1146 624l-7 15M1146 624l6 18M1160 631l14 1M1160 631l-8 10M1160 631l11 12M1174 632l20 4M1174 632l-3 11M1174 632l8 14M1193 636l14 4M1193 636l-12 10M1193 636l3 17M1207 640l21 5M1207 640l-11 14M1207 640l12 20M1228 645l15 1M1228 645l-9 15M1228 645l8 11M1244 646l19 2M1244 646l-8 9M1244 646l4 16M1263 648l13 6M1263 648l-16 14M1263 648l4 15M1276 654l13 -2M1276 654l-9 9M1276 654l5 15M1289 653l17 5M1289 653l-8 17M1289 653l10 17M1306 658l17 6M1306 658l-7 12M1323 663l17 2M1323 663l-24 7M1340 665l19 7M1359 672l13 3M1139 639l13 2M1139 639l-2 18M1152 641l19 1M1152 641l-15 16M1152 641l1 17M1171 643l11 3M1171 643l-18 16M1171 643l2 20M1182 646l15 7M1182 646l-9 17M1182 646l10 19M1196 653l23 6M1196 653l-5 11M1196 653l4 13M1219 660l17 -4M1219 660l-18 7M1219 660l-1 9M1236 656l11 7M1236 656l-17 13M1247 662l20 2M1247 662l34 7M1247 662l-29 7M1267 664l14 6M1281 670l18 0M1137 657l16 1M1137 657l-6 13M1137 657l8 15M1153 659l19 4M1153 659l-8 14M1153 659l7 16M1172 663l20 2M1172 663l-12 12M1172 663l10 11M1192 665l9 2M1192 665l-10 9M1192 665l-0 11M1201 667l18 2M1201 667l-9 9M1218 669l-27 7M1131 671l14 2M1144 673l15 2M1160 675l22 -1M1160 675l32 1M1182 674l9 2" stroke="#000" stroke-width="1" fill="none"/></g><ellipse cx="1336.0" cy="465.0" rx="118.3" ry="63.8" transform="rotate(-50.2 1336.0 465.0)" fill="url(#bg)"/><ellipse cx="1336.0" cy="465.0" rx="118.3" ry="63.8" transform="rotate(-50.2 1336.0 465.0)" fill="none" stroke="#000" stroke-width="1.2"/></g><path d="M858.3,415.0 L1771.0,159.3 L1800.0,183.0 L1800.0,186.0 L895.0,437.0Z" fill="#855c00"/><path d="M895.0,437.0 L1800.0,186.0 L1807.0,196.0 L1802.0,243.3 L890.0,496.7Z" fill="#bf8800"/><path d="M895.0,437.0 L1800.0,186.0 L1802.0,196.0 L893.0,447.0Z" fill="#eaa400"/><g clip-path="url(#barfaces)"><path d="M1444 237l-14 11M1444 237l-2 10M1444 237l13 7M1444 237l23 4M1504 220l17 -5M1504 220l-11 14M1504 220l1 6M1504 220l10 4M1522 215l22 -6M1522 215l-8 9M1522 215l4 4M1522 215l20 2M1543 209l-2 8M1543 209l10 4M1638 183l-18 11M1638 183l-6 7M1638 183l12 7M1638 183l19 0M1638 183l5 17M1736 155l-18 12M1736 155l-2 10M1736 155l8 6M1736 155l18 4M850 411l14 -4M850 411l-4 9M850 411l11 9M864 407l11 -2M864 407l-4 14M864 407l8 9M875 404l16 -5M875 404l-3 11M875 404l6 4M891 400l11 -8M891 400l-9 9M891 400l4 8M891 400l16 6M902 392l12 0M902 392l23 -6M902 392l5 14M914 392l11 -6M914 392l-7 13M914 392l7 11M925 386l12 -2M925 386l-4 17M925 386l11 10M937 384l9 1M937 384l25 -5M937 384l-1 11M946 385l16 -6M946 385l-10 10M946 385l2 8M946 385l8 4M962 379l10 -6M962 379l-8 10M962 379l8 6M971 374l12 -1M971 374l26 -5M971 374l-2 12M971 374l7 13M983 373l14 -5M983 373l-5 14M983 373l11 6M997 368l10 -2M997 368l-3 11M997 368l10 10M1007 366l17 -6M1007 366l-0 12M1007 366l11 10M1024 360l9 -3M1024 360l-5 17M1024 360l5 14M1033 356l13 -4M1033 356l21 -6M1033 356l-4 18M1033 356l9 14M1033 356l17 6M1046 353l8 -2M1046 353l4 10M1054 350l13 2M1054 350l25 -5M1054 350l-4 12M1054 350l14 12M1067 352l12 -7M1067 352l1 9M1067 352l14 7M1079 345l12 -3M1079 345l2 14M1079 345l9 11M1091 342l15 -2M1091 342l-3 15M1091 342l15 9M1106 339l12 -6M1106 339l-0 12M1106 339l6 8M1118 333l14 -1M1118 333l20 -5M1118 333l-6 14M1118 333l11 10M1132 332l6 -4M1132 332l-3 11M1132 332l9 7M1138 328l15 -4M1138 328l3 10M1138 328l12 11M1153 324l14 -1M1153 324l24 -5M1153 324l-3 14M1153 324l11 6M1167 323l10 -4M1167 323l-3 7M1167 323l7 5M1177 319l9 -5M1177 319l-3 8M1177 319l8 8M1186 314l12 -4M1186 314l-1 14M1186 314l13 8M1198 310l13 2M1198 310l26 -6M1198 310l1 12M1198 310l11 10M1211 312l13 -8M1211 312l-2 8M1211 312l9 7M1224 304l12 0M1224 304l-4 14M1224 304l12 8M1236 305l16 -9M1236 305l0 8M1236 305l9 7M1252 295l11 1M1252 295l19 -2M1252 295l-8 16M1252 295l10 12M1263 296l8 -3M1263 296l-1 11M1263 296l5 6M1271 293l16 -6M1271 293l-3 9M1271 293l11 10M1287 288l12 -0M1287 288l25 -6M1287 288l-5 16M1287 288l10 11M1298 288l14 -6M1298 288l-1 11M1298 288l10 4M1312 281l8 0M1312 281l20 -7M1312 281l-4 10M1312 281l6 9M1320 281l12 -7M1320 281l-3 9M1320 281l12 7M1333 274l13 -4M1333 274l-1 14M1333 274l14 10M1345 270l14 1M1345 270l23 -3M1345 270l1 14M1345 270l7 9M1359 271l9 -4M1359 271l-6 7M1359 271l6 4M1368 267l16 -9M1368 267l-3 8M1368 267l8 8M1384 259l8 -0M1384 259l-7 16M1384 259l8 9M1392 259l15 -0M1392 259l-0 9M1392 259l13 9M1407 258l11 -9M1407 258l-2 10M1407 258l6 8M1418 250l12 -2M1418 250l-5 17M1418 250l11 13M1430 248l12 -1M1430 248l-0 15M1430 248l9 11M1442 247l15 -3M1442 247l-3 13M1442 247l9 5M1456 243l11 -3M1456 243l-6 8M1456 243l7 5M1467 240l13 -4M1467 240l-4 9M1467 240l9 6M1480 236l13 -2M1480 236l-4 10M1480 236l8 10M1493 234l12 -8M1493 234l-4 13M1493 234l6 9M1505 226l9 -2M1505 226l-6 17M1505 226l8 11M1514 224l11 -4M1514 224l-1 13M1514 224l7 9M1525 220l16 -3M1525 220l-4 13M1525 220l13 11M1541 217l12 -4M1541 217l-3 14M1541 217l5 10M1553 213l12 0M1553 213l19 -4M1553 213l-7 14M1553 213l8 10M1566 213l7 -4M1566 213l-4 10M1566 213l7 10M1573 208l16 -7M1573 208l1 15M1573 208l11 8M1589 202l12 3M1589 202l23 -2M1589 202l-6 15M1589 202l7 12M1601 204l11 -4M1601 204l-5 9M1601 204l7 6M1612 200l8 -6M1612 200l-4 10M1612 200l7 6M1620 194l12 -4M1620 194l-1 12M1620 194l12 7M1632 190l-0 11M1632 190l11 10M1650 190l7 -7M1650 190l-7 10M1650 190l8 5M1657 183l13 -4M1657 183l1 12M1657 183l9 10M1670 179l13 2M1670 179l25 -2M1670 179l-4 14M1670 179l11 9M1683 181l11 -4M1683 181l-2 7M1683 181l8 7M1695 177l12 -5M1695 177l-3 12M1695 177l12 6M1707 172l10 -6M1707 172l-0 11M1707 172l11 7M1717 166l17 -2M1717 166l1 13M1717 166l7 9M1734 164l9 -4M1734 164l-9 11M1734 164l8 6M1743 161l11 -2M1743 161l-1 10M1754 159l11 -6M1754 159l-12 11M1754 159l1 14M1754 159l12 10M1765 153l17 -1M1765 153l1 16M1765 153l10 14M1782 152l-7 15M1782 152l9 8M846 420l14 0M846 420l10 8M846 420l11 21M860 421l12 -5M860 421l-5 8M860 421l9 7M872 415l9 -7M872 415l-3 12M872 415l7 9M882 409l13 -1M882 409l-3 16M882 409l11 9M895 408l12 -2M895 408l-2 10M895 408l11 6M907 405l14 -3M907 405l-1 8M907 405l13 8M921 403l15 -7M921 403l-2 11M921 403l9 9M936 395l12 -3M936 395l-6 16M936 395l5 12M948 393l6 -3M948 393l-7 15M948 393l3 11M954 389l16 -4M954 389l-2 15M954 389l11 11M970 386l9 1M970 386l-4 15M970 386l11 10M979 387l16 -7M979 387l2 9M979 387l14 5M994 379l12 -1M994 379l-1 12M994 379l10 7M1007 379l12 -2M1007 379l-2 8M1007 379l5 8M1018 377l11 -3M1018 377l-7 10M1018 377l6 10M1029 374l13 -4M1029 374l-4 12M1029 374l9 7M1042 370l8 -8M1042 370l-4 11M1042 370l8 4M1050 362l17 -0M1050 362l1 12M1050 362l10 12M1067 362l13 -2M1067 362l-7 13M1067 362l4 7M1080 359l7 -3M1080 359l-9 9M1080 359l9 7M1080 359l-1 18M1088 357l18 -6M1088 357l2 10M1088 357l15 8M1106 351l6 -3M1106 351l-3 14M1106 351l6 11M1112 347l17 -5M1112 347l-1 15M1112 347l13 8M1129 343l12 -4M1129 343l-4 13M1129 343l7 7M1141 339l9 0M1141 339l-5 11M1141 339l8 9M1150 339l14 -8M1150 339l-1 9M1150 339l8 7M1164 331l10 -3M1164 331l-5 15M1164 331l10 11M1174 328l11 -0M1174 328l0 14M1174 328l6 11M1185 328l14 -5M1185 328l-4 11M1185 328l9 11M1199 322l10 -2M1199 322l-5 16M1199 322l9 11M1209 320l11 -1M1209 320l-1 13M1209 320l9 12M1220 319l16 -7M1220 319l-2 14M1220 319l13 7M1236 312l8 -1M1236 312l-2 13M1236 312l9 9M1244 311l17 -5M1244 311l1 10M1244 311l13 9M1261 307l6 -4M1261 307l-4 14M1261 307l9 9M1268 302l14 2M1268 302l2 13M1282 304l15 -5M1282 304l-12 12M1282 304l-1 10M1282 304l7 4M1297 299l11 -8M1297 299l-8 9M1297 299l5 8M1308 291l10 -1M1308 291l-6 15M1308 291l5 15M1318 290l14 -2M1318 290l-5 16M1318 290l8 7M1332 289l14 -5M1332 289l-6 9M1332 289l8 6M1346 284l7 -6M1346 284l-6 10M1346 284l7 7M1353 279l12 -3M1353 279l-0 12M1353 279l13 11M1365 275l12 -0M1365 275l1 14M1365 275l10 13M1376 275l15 -7M1376 275l-2 13M1376 275l14 7M1392 268l13 0M1392 268l-1 15M1392 268l8 11M1405 268l9 -1M1405 268l-5 11M1405 268l6 11M1413 267l16 -4M1413 267l-2 13M1413 267l13 3M1429 263l9 -3M1429 263l-3 7M1429 263l8 5M1438 259l12 -8M1438 259l-1 9M1438 259l11 5M1451 251l13 -2M1451 251l-2 13M1451 251l10 10M1463 249l12 -2M1463 249l-3 12M1463 249l5 9M1476 247l13 -0M1476 247l-7 12M1476 247l10 12M1488 247l11 -4M1488 247l-3 12M1488 247l10 9M1499 242l14 -5M1499 242l-1 13M1499 242l10 7M1513 237l8 -4M1513 237l-3 13M1513 237l6 12M1521 233l17 -2M1521 233l-2 16M1521 233l11 9M1538 230l8 -4M1538 230l-6 11M1538 230l8 11M1547 227l15 -4M1547 227l0 15M1547 227l13 10M1561 223l12 0M1561 223l-2 14M1561 223l6 12M1573 223l10 -7M1573 223l-6 12M1573 223l8 7M1583 216l12 -3M1583 216l-2 14M1583 216l6 8M1596 214l12 -4M1596 214l-7 10M1596 214l7 11M1608 210l11 -4M1608 210l-5 15M1608 210l8 9M1619 206l13 -5M1619 206l-3 13M1619 206l7 12M1632 201l12 -2M1632 201l-6 17M1632 201l8 10M1643 199l14 -4M1643 199l-4 12M1643 199l13 12M1658 195l8 -2M1658 195l-2 16M1658 195l6 14M1666 193l15 -4M1666 193l-2 16M1666 193l9 12M1681 188l11 0M1681 188l-6 16M1681 188l6 14M1692 189l15 -6M1692 189l-5 14M1692 189l10 8M1706 183l12 -3M1706 183l-5 14M1706 183l6 10M1718 179l6 -4M1718 179l-6 13M1718 179l8 12M1725 175l18 -5M1725 175l2 16M1725 175l12 13M1743 170l13 2M1743 170l-5 18M1743 170l6 10M1755 173l11 -4M1755 173l-6 8M1755 173l5 7M1766 169l9 -3M1766 169l-5 11M1766 169l5 5M1775 167l16 -7M1775 167l-4 7M1775 167l6 4M1791 160l-9 11M1791 160l5 8M1791 160l16 16M855 429l13 -2M855 429l1 12M855 429l9 10M869 427l10 -3M869 427l-4 11M869 427l9 8M879 424l14 -7M879 424l-1 11M879 424l10 5M893 418l14 -4M893 418l-4 12M893 418l10 10M906 414l13 -0M906 414l-4 15M906 414l11 8M919 413l11 -2M919 413l-2 9M919 413l9 7M930 411l11 -4M930 411l-2 9M930 411l7 9M941 408l11 -3M941 408l-4 13M941 408l13 4M952 404l14 -3M952 404l2 8M952 404l12 4M966 401l15 -5M966 401l-2 8M966 401l12 8M980 396l13 -4M980 396l-3 13M980 396l10 11M993 391l12 -5M993 391l-3 15M993 391l8 7M1005 386l7 1M1005 386l-3 12M1005 386l8 9M1012 387l13 -1M1012 387l1 8M1012 387l10 6M1025 386l13 -5M1025 386l-4 7M1025 386l12 2M1038 381l12 -7M1038 381l-2 8M1038 381l11 7M1050 374l9 1M1050 374l-2 14M1050 374l9 14M1060 374l12 -6M1060 374l-0 13M1060 374l14 7M1071 368l3 13M1071 368l8 8M1089 366l14 -2M1089 366l-9 11M1089 366l6 7M1103 365l8 -2M1103 365l-8 9M1103 365l8 8M1111 362l14 -7M1111 362l-0 10M1111 362l9 6M1125 355l11 -6M1125 355l-5 13M1125 355l6 10M1136 350l13 -2M1136 350l-5 15M1136 350l6 14M1148 348l10 -2M1148 348l-7 16M1148 348l5 10M1158 346l16 -4M1158 346l-5 13M1158 346l8 8M1174 342l6 -3M1174 342l-8 12M1174 342l9 7M1180 339l14 -0M1180 339l2 9M1180 339l12 9M1194 339l14 -5M1194 339l-2 10M1194 339l9 9M1208 333l10 -1M1208 333l-5 15M1208 333l11 8M1218 333l15 -7M1218 333l1 9M1218 333l11 7M1234 325l12 -5M1234 325l-4 14M1234 325l6 11M1245 321l13 -1M1245 321l-6 16M1245 321l8 12M1258 320l12 -5M1258 320l-4 12M1258 320l3 6M1270 316l11 -1M1270 316l-10 11M1270 316l6 9M1281 314l8 -6M1281 314l-5 10M1281 314l8 9M1289 308l14 -2M1289 308l0 15M1289 308l8 8M1302 306l11 0M1302 306l-6 10M1302 306l10 5M1313 306l13 -9M1313 306l-0 5M1313 306l8 6M1326 297l14 -3M1326 297l-5 16M1326 297l8 10M1340 294l13 -3M1340 294l-6 13M1340 294l10 11M1353 291l13 -1M1353 291l-2 14M1353 291l7 8M1365 290l9 -2M1365 290l-6 9M1365 290l8 5M1375 288l16 -6M1375 288l-1 7M1375 288l10 4M1391 282l9 -4M1391 282l-7 10M1391 282l6 10M1400 278l11 1M1400 278l-3 14M1400 278l10 10M1411 279l16 -10M1411 279l-1 10M1411 279l7 7M1426 270l11 -2M1426 270l-9 16M1426 270l4 15M1437 268l12 -3M1437 268l-7 17M1437 268l11 8M1449 265l11 -3M1449 265l-1 12M1449 265l9 9M1461 261l8 -3M1461 261l-3 12M1461 261l7 13M1468 258l17 0M1468 258l-1 16M1468 258l14 10M1485 259l13 -4M1485 259l-3 10M1485 259l10 4M1499 255l11 -5M1499 255l-3 8M1499 255l9 5M1510 250l9 -1M1510 250l-2 10M1510 250l8 7M1519 249l13 -7M1519 249l-1 8M1519 249l10 6M1532 242l15 -0M1532 242l-2 13M1532 242l10 9M1547 241l13 -4M1547 241l-5 9M1547 241l4 7M1560 237l8 -2M1560 237l-9 11M1560 237l6 9M1567 235l14 -5M1567 235l-2 11M1567 235l13 6M1581 230l8 -6M1581 230l-1 11M1581 230l7 8M1589 224l14 1M1589 224l-0 14M1589 224l10 8M1603 225l13 -6M1603 225l-4 8M1603 225l11 7M1616 219l10 -1M1616 219l-2 13M1616 219l12 8M1626 218l14 -6M1626 218l2 9M1626 218l14 5M1639 212l17 -0M1639 212l0 11M1639 212l14 11M1656 211l8 -2M1656 211l-2 11M1656 211l9 7M1664 209l11 -4M1664 209l1 9M1664 209l8 9M1675 205l12 -2M1675 205l-3 13M1675 205l10 4M1687 203l15 -6M1687 203l-2 7M1687 203l11 5M1702 197l11 -4M1702 197l-4 11M1702 197l10 9M1712 192l14 -1M1712 192l-1 14M1712 192l7 8M1727 192l10 -3M1727 192l-8 9M1727 192l6 5M1737 188l12 -8M1737 188l-4 8M1737 188l8 6M1749 181l12 -1M1749 181l-4 13M1749 181l9 8M1761 180l10 -6M1761 180l-3 9M1761 180l9 10M1771 174l10 -3M1771 174l-2 16M1771 174l10 13M1781 171l14 -3M1781 171l0 16M1781 171l10 9M1795 168l-4 12M1795 168l11 8M857 441l8 -3M857 441l5 10M865 438l13 -3M865 438l-3 13M865 438l9 12M878 435l11 -6M878 435l-4 15M878 435l9 6M889 430l14 -2M889 430l-1 11M889 430l10 10M902 428l15 -6M902 428l-4 12M902 428l10 10M917 422l11 -1M917 422l-4 16M917 422l6 14M928 420l9 -0M928 420l-5 16M928 420l8 11M937 420l17 -8M937 420l-1 11M937 420l9 7M954 412l10 -4M954 412l-8 16M954 412l3 12M964 408l14 0M964 408l-7 16M964 408l12 14M978 409l13 -2M978 409l-2 13M978 409l9 9M990 406l11 -8M990 406l-4 12M990 406l5 6M1002 399l11 -4M1002 399l-6 13M1002 399l5 15M1012 395l9 -2M1012 395l-6 18M1012 395l9 13M1021 393l15 -5M1021 393l1 15M1021 393l12 11M1036 389l12 -1M1036 389l-3 15M1036 389l9 13M1049 388l11 -0M1049 388l-3 14M1049 388l11 9M1060 388l14 -7M1060 388l0 10M1060 388l7 5M1074 381l6 -4M1074 381l-7 12M1074 381l10 10M1080 377l16 -4M1080 377l4 14M1080 377l12 10M1095 373l16 -1M1095 373l-3 13M1095 373l12 7M1111 373l9 -4M1111 373l-4 8M1111 373l9 6M1120 368l11 -3M1120 368l-0 10M1120 368l8 9M1131 365l11 -1M1131 365l-3 12M1131 365l10 10M1142 364l12 -6M1142 364l-1 11M1142 364l14 6M1154 358l12 -5M1154 358l2 12M1154 358l13 6M1166 353l17 -5M1166 353l1 11M1166 353l8 10M1183 349l10 -0M1183 349l-9 15M1183 349l7 13M1192 348l11 -0M1192 348l-3 14M1192 348l6 9M1204 348l15 -6M1204 348l-6 9M1204 348l12 6M1219 342l10 -2M1219 342l-3 12M1219 342l4 8M1229 340l10 -3M1229 340l-6 10M1229 340l6 6M1239 336l14 -4M1239 336l-4 9M1239 336l9 10M1254 332l7 -6M1254 332l-5 14M1254 332l8 5M1260 327l16 -2M1260 327l2 11M1260 327l12 12M1276 324l13 -2M1276 324l-4 15M1276 324l9 10M1289 323l8 -6M1289 323l-4 12M1289 323l10 4M1297 316l16 -5M1297 316l2 11M1297 316l11 8M1313 312l9 1M1313 312l-5 13M1313 312l11 10M1321 313l13 -6M1321 313l2 8M1321 313l15 8M1334 307l16 -2M1334 307l3 14M1334 307l12 12M1350 305l9 -6M1350 305l-5 14M1350 305l5 9M1359 299l14 -4M1359 299l-4 15M1359 299l14 13M1373 295l11 -3M1373 295l-0 17M1373 295l8 9M1384 292l12 0M1384 292l-3 13M1384 292l9 14M1397 292l13 -3M1397 292l-4 13M1397 292l6 10M1410 289l8 -3M1410 289l-7 14M1410 289l8 7M1418 286l12 -1M1418 286l-0 10M1418 286l10 11M1430 285l17 -9M1430 285l-3 13M1430 285l12 4M1448 276l10 -3M1448 276l-5 13M1448 276l5 10M1458 273l9 1M1458 273l-5 12M1458 273l7 12M1467 274l15 -6M1467 274l-3 11M1467 274l9 7M1483 268l13 -5M1483 268l-6 13M1483 268l9 6M1496 263l11 -3M1496 263l-5 11M1496 263l9 9M1507 260l11 -3M1507 260l-3 12M1507 260l4 13M1518 257l12 -2M1518 257l-7 16M1518 257l8 9M1530 255l12 -5M1530 255l-3 11M1530 255l6 11M1542 250l9 -2M1542 250l-6 16M1542 250l5 11M1551 248l14 -2M1551 248l-4 14M1551 248l15 10M1565 246l15 -5M1565 246l1 12M1565 246l7 7M1580 241l8 -3M1580 241l-7 11M1580 241l7 11M1589 239l11 -6M1589 239l-1 14M1589 239l12 5M1599 233l15 -1M1599 233l1 11M1599 233l12 11M1614 232l14 -5M1614 232l-2 12M1614 232l8 11M1628 227l12 -4M1628 227l-5 16M1628 227l8 7M1640 223l14 -0M1640 223l-5 12M1640 223l8 8M1654 222l12 -4M1654 222l-6 9M1654 222l6 6M1665 218l7 -0M1665 218l-6 10M1665 218l4 6M1672 218l13 -9M1672 218l-3 6M1672 218l13 6M1685 209l13 -2M1685 209l-0 15M1685 209l9 11M1698 207l13 -1M1698 207l-4 13M1698 207l7 8M1712 206l7 -6M1712 206l-6 10M1712 206l6 9M1719 200l14 -4M1719 200l-1 15M1719 200l15 9M1733 197l12 -3M1733 197l1 13M1733 197l7 10M1745 194l13 -5M1745 194l-5 12M1745 194l7 9M1758 189l11 1M1758 189l-7 14M1758 189l7 11M1770 190l12 -3M1770 190l-4 10M1770 190l8 10M1782 187l10 -7M1782 187l-4 13M1782 187l10 10M1792 180l15 -4M1792 180l-1 17M1792 180l14 9M1807 176l-1 13M1807 176l5 21M862 451l11 -0M862 451l11 6M862 451l6 22M874 451l13 -10M874 451l0 6M874 451l11 2M887 441l11 -1M887 441l-2 12M887 441l11 8M898 440l14 -2M898 440l-0 9M898 440l9 9M913 438l10 -2M913 438l-6 11M913 438l11 7M923 436l13 -5M923 436l0 8M923 436l12 4M936 432l9 -4M936 432l-0 8M936 432l9 10M945 428l12 -3M945 428l-1 13M945 428l15 9M957 424l19 -2M957 424l3 12M957 424l14 9M976 422l10 -4M976 422l-5 11M976 422l4 9M986 418l9 -6M986 418l-7 13M986 418l7 9M995 412l12 1M995 412l-2 15M995 412l9 12M1007 413l15 -5M1007 413l-3 11M1007 413l13 5M1022 409l11 -4M1022 409l-2 10M1022 409l5 6M1033 404l12 -2M1033 404l-6 11M1033 404l10 5M1046 402l14 -4M1046 402l-2 8M1046 402l6 7M1060 397l7 -4M1060 397l-9 11M1060 397l8 8M1067 393l17 -2M1067 393l1 12M1067 393l13 12M1084 391l8 -4M1084 391l-4 14M1084 391l8 10M1092 386l15 -6M1092 386l-0 14M1092 386l8 10M1107 380l13 -1M1107 380l-7 16M1107 380l7 9M1120 379l9 -1M1120 379l-5 11M1120 379l6 8M1128 377l13 -2M1128 377l-2 9M1128 377l8 7M1141 375l14 -5M1141 375l-5 9M1141 375l11 4M1155 370l11 -6M1155 370l-3 10M1155 370l9 8M1167 364l7 -0M1167 364l-2 14M1167 364l8 13M1174 364l15 -2M1174 364l1 13M1174 364l14 5M1189 362l9 -5M1189 362l-2 7M1189 362l7 6M1198 357l18 -3M1198 357l-2 11M1198 357l10 12M1216 354l8 -4M1216 354l-7 15M1216 354l5 9M1223 350l12 -4M1223 350l-2 13M1223 350l11 9M1235 345l13 1M1235 345l-1 14M1235 345l13 10M1249 346l13 -9M1249 346l0 9M1249 346l12 6M1262 338l10 1M1262 338l-1 15M1262 338l6 10M1272 339l13 -4M1272 339l-5 9M1272 339l12 7M1285 335l14 -8M1285 335l-1 12M1285 335l11 5M1299 327l9 -3M1299 327l-3 12M1299 327l8 14M1308 324l16 -3M1308 324l-1 16M1308 324l11 13M1324 321l13 -1M1324 321l-5 16M1324 321l6 10M1337 321l9 -2M1337 321l-7 11M1337 321l4 11M1346 319l10 -5M1346 319l-5 13M1346 319l7 5M1355 313l18 -2M1355 313l-3 11M1355 313l12 11M1373 312l8 -7M1373 312l-6 13M1373 312l5 7M1381 305l12 1M1381 305l-3 14M1381 305l9 11M1393 306l10 -3M1393 306l-2 10M1393 306l9 5M1403 302l14 -6M1403 302l-1 8M1403 302l14 8M1417 296l10 1M1417 296l0 14M1417 296l7 10M1427 297l15 -8M1427 297l-3 9M1427 297l9 4M1442 289l10 -3M1442 289l-6 13M1442 289l11 7M1453 286l12 -1M1453 286l0 11M1453 286l11 10M1465 285l11 -4M1465 285l-1 11M1465 285l10 5M1476 281l15 -7M1476 281l-1 8M1476 281l10 7M1491 275l13 -3M1491 275l-5 14M1491 275l7 9M1505 272l7 1M1505 272l-7 11M1505 272l6 13M1511 273l15 -7M1511 273l-1 12M1511 273l12 5M1526 266l10 0M1526 266l-3 12M1526 266l10 7M1536 266l11 -4M1536 266l1 7M1536 266l8 7M1547 262l19 -4M1547 262l-3 12M1547 262l14 5M1566 258l7 -5M1566 258l-4 9M1566 258l3 9M1573 252l15 0M1573 252l-3 14M1573 252l11 12M1587 252l13 -8M1587 252l-4 12M1587 252l10 6M1601 244l11 -0M1601 244l-3 15M1601 244l5 14M1612 244l11 -1M1612 244l-6 15M1612 244l9 9M1622 243l13 -9M1622 243l-2 9M1622 243l10 7M1635 234l13 -4M1635 234l-3 16M1635 234l8 11M1648 231l11 -3M1648 231l-4 14M1648 231l10 12M1659 228l10 -4M1659 228l-1 15M1659 228l6 10M1669 224l16 -0M1669 224l-4 14M1669 224l9 13M1685 224l9 -4M1685 224l-7 13M1685 224l10 10M1694 221l12 -5M1694 221l1 13M1694 221l12 6M1706 216l12 -1M1706 216l1 11M1706 216l8 11M1718 215l16 -6M1718 215l-5 11M1718 215l11 6M1734 209l6 -3M1734 209l-5 12M1734 209l2 8M1740 206l11 -4M1740 206l-4 11M1740 206l14 8M1752 203l14 -3M1752 203l3 11M1752 203l15 8M1765 200l12 0M1765 200l1 11M1777 200l14 -3M1777 200l-10 11M1777 200l1 11M1777 200l11 7M1791 197l15 -8M1791 197l-3 10M1791 197l9 3M1806 189l-5 11M1806 189l6 8M874 457l11 -3M874 457l-6 16M874 457l5 11M885 453l14 -4M885 453l-6 14M885 453l10 11M898 449l9 0M898 449l-4 15M898 449l8 14M907 449l16 -5M907 449l-1 14M907 449l14 10M923 445l12 -5M923 445l-2 15M923 445l3 12M936 440l9 1M936 440l-9 17M936 440l6 13M945 441l16 -5M945 441l-3 12M945 441l12 7M960 436l11 -3M960 436l-4 11M960 436l5 8M971 433l9 -3M971 433l-5 12M971 433l4 7M979 431l14 -4M979 431l-5 9M979 431l9 8M993 427l11 -2M993 427l-4 11M993 427l12 5M1004 425l16 -6M1004 425l1 7M1004 425l11 4M1020 418l7 -3M1020 418l-4 11M1020 418l8 8M1027 415l16 -5M1027 415l1 11M1027 415l10 10M1043 410l8 -1M1043 410l-7 15M1043 410l10 13M1051 409l17 -3M1051 409l1 14M1051 409l7 8M1068 405l12 -1M1068 405l-10 11M1068 405l4 9M1080 405l11 -4M1080 405l-8 10M1080 405l7 5M1091 401l8 -4M1091 401l-5 8M1091 401l8 9M1100 396l14 -7M1100 396l-0 13M1100 396l10 7M1114 390l12 -3M1114 390l-5 14M1114 390l11 11M1126 387l10 -2M1126 387l-0 13M1126 387l8 11M1136 384l16 -5M1136 384l-3 13M1136 384l9 11M1152 379l12 -2M1152 379l-7 16M1152 379l4 10M1165 378l10 -1M1165 378l-9 12M1165 378l8 11M1175 377l13 -8M1175 377l-3 12M1175 377l10 9M1188 369l8 -1M1188 369l-3 16M1188 369l9 10M1196 368l12 1M1196 368l0 11M1208 369l12 -6M1208 369l-12 10M1208 369l0 12M1208 369l8 8M1221 363l14 -4M1221 363l-5 14M1221 363l9 7M1234 359l14 -4M1234 359l-5 10M1234 359l6 8M1249 355l12 -3M1249 355l-9 12M1249 355l4 7M1261 353l7 -5M1261 353l-8 10M1261 353l3 9M1268 348l17 -2M1268 348l-4 13M1268 348l12 7M1285 346l12 -7M1285 346l-5 9M1285 346l5 10M1296 339l11 1M1296 339l-6 17M1296 339l8 15M1307 341l11 -3M1307 341l-3 13M1307 341l12 9M1319 337l11 -6M1319 337l0 12M1319 337l6 6M1330 331l11 -0M1330 331l-5 12M1330 331l8 10M1341 331l11 -7M1341 331l-3 10M1341 331l9 8M1352 324l15 0M1352 324l-2 15M1352 324l8 11M1367 325l11 -6M1367 325l-7 11M1367 325l9 7M1379 319l12 -3M1379 319l-3 12M1379 319l9 6M1391 316l11 -5M1391 316l-4 10M1391 316l9 9M1402 311l16 -1M1402 311l-2 14M1402 311l13 10M1417 310l7 -4M1417 310l-3 11M1417 310l7 8M1424 306l12 -5M1424 306l-0 12M1424 306l13 11M1436 302l17 -5M1436 302l1 15M1436 302l14 9M1453 297l10 -1M1453 297l-3 14M1453 297l9 11M1464 296l11 -7M1464 296l-1 11M1464 296l9 9M1475 290l12 -1M1475 290l-3 16M1475 290l9 9M1487 288l11 -5M1487 288l-3 10M1487 288l9 10M1498 283l13 2M1498 283l-3 15M1498 283l10 12M1511 285l12 -7M1511 285l-3 10M1511 285l10 8M1523 278l14 -6M1523 278l-3 15M1523 278l9 9M1537 273l7 1M1537 273l-5 15M1537 273l6 14M1544 273l18 -7M1544 273l-1 13M1544 273l13 7M1562 267l8 0M1562 267l-5 14M1562 267l4 9M1569 267l14 -3M1569 267l-3 9M1569 267l9 7M1584 264l14 -5M1584 264l-5 10M1584 264l8 10M1598 259l8 -0M1598 259l-6 15M1598 259l9 9M1605 258l15 -6M1605 258l1 9M1605 258l8 8M1621 253l12 -2M1621 253l-7 13M1621 253l10 5M1633 251l11 -6M1633 251l-2 7M1633 251l6 10M1644 245l14 -2M1644 245l-5 16M1644 245l10 10M1658 243l7 -4M1658 243l-5 12M1658 243l4 8M1665 239l13 -1M1665 239l-2 12M1665 239l14 11M1678 238l17 -4M1678 238l0 12M1678 238l13 7M1695 234l11 -7M1695 234l-4 11M1695 234l4 5M1706 227l7 -1M1706 227l-7 11M1706 227l6 10M1713 226l16 -5M1713 226l-1 11M1713 226l15 8M1729 222l8 -4M1729 222l-1 12M1729 222l8 8M1737 218l18 -4M1737 218l0 12M1737 218l12 12M1755 214l12 -3M1755 214l-6 15M1755 214l4 9M1767 211l11 0M1767 211l-8 12M1767 211l9 11M1778 211l10 -4M1778 211l-2 11M1778 211l9 9M1788 207l12 -7M1788 207l-1 12M1788 207l7 8M1801 200l11 -3M1801 200l-5 15M1801 200l8 9M1812 197l-4 12M1812 197l7 12M868 473l11 -5M868 473l14 8M868 473l6 19M879 468l16 -4M879 468l2 13M879 468l13 12M895 464l12 -1M895 464l-3 15M895 464l11 11M906 463l15 -3M906 463l-1 12M906 463l9 4M921 460l5 -3M921 460l-6 8M921 460l8 7M927 457l14 -4M927 457l2 10M927 457l14 7M941 453l15 -5M941 453l-1 11M941 453l10 5M956 448l9 -3M956 448l-5 10M956 448l7 10M965 445l9 -5M965 445l-2 13M965 445l7 8M975 440l14 -1M975 440l-2 13M975 440l10 8M989 438l16 -6M989 438l-4 9M989 438l13 9M1005 432l11 -3M1005 432l-3 15M1005 432l9 12M1015 429l13 -3M1015 429l-2 15M1015 429l5 9M1028 426l8 -1M1028 426l-7 12M1028 426l4 10M1036 425l16 -2M1036 425l-5 11M1036 425l13 6M1053 423l5 -6M1053 423l-4 8M1053 423l3 7M1058 417l14 -2M1058 417l-3 14M1058 417l13 7M1072 414l14 -5M1072 414l-1 9M1072 414l12 7M1087 409l13 0M1087 409l-3 12M1087 409l9 14M1100 409l10 -6M1100 409l-4 14M1100 409l11 8M1110 403l16 -3M1110 403l1 14M1110 403l11 12M1125 400l8 -3M1125 400l-5 15M1125 400l10 11M1133 397l12 -2M1133 397l2 14M1133 397l11 8M1145 396l11 -6M1145 396l-1 10M1145 396l11 7M1156 389l17 -1M1156 389l-0 13M1156 389l9 12M1172 388l13 -3M1172 388l-8 13M1172 388l9 6M1185 385l11 -6M1185 385l-4 9M1185 385l4 9M1196 379l12 1M1196 379l-8 15M1196 379l6 13M1208 380l8 -4M1208 380l-6 12M1208 380l8 6M1216 377l14 -7M1216 377l1 9M1216 377l12 4M1230 369l11 -2M1230 369l-2 11M1230 369l12 8M1240 367l12 -5M1240 367l2 10M1240 367l15 10M1253 363l11 -1M1253 363l2 14M1264 361l16 -7M1264 361l-8 16M1264 361l4 14M1264 361l14 7M1280 355l10 1M1280 355l-2 14M1280 355l8 13M1290 356l15 -2M1290 356l-2 11M1290 356l13 10M1304 354l15 -4M1304 354l-2 12M1304 354l6 8M1319 349l6 -6M1319 349l-9 12M1319 349l3 5M1325 343l13 -2M1325 343l-3 11M1325 343l14 7M1338 341l12 -3M1338 341l1 8M1338 341l12 9M1350 339l11 -4M1350 339l-0 12M1350 339l13 7M1360 335l16 -4M1360 335l3 11M1360 335l10 9M1376 331l11 -6M1376 331l-6 13M1376 331l8 6M1387 325l13 -1M1387 325l-3 12M1387 325l7 11M1400 324l15 -4M1400 324l-6 12M1400 324l10 9M1415 321l9 -3M1415 321l-5 12M1415 321l8 7M1424 318l13 -1M1424 318l-1 10M1424 318l8 9M1437 317l13 -6M1437 317l-5 9M1437 317l4 7M1450 311l12 -4M1450 311l-9 13M1450 311l5 9M1462 307l10 -2M1462 307l-7 12M1462 307l3 8M1472 305l12 -7M1472 305l-7 10M1472 305l9 11M1484 298l11 0M1484 298l-3 17M1484 298l12 13M1495 299l13 -4M1495 299l0 13M1495 299l13 7M1508 295l12 -2M1508 295l-0 10M1508 295l7 8M1520 293l12 -6M1520 293l-5 10M1520 293l7 9M1532 287l11 -1M1532 287l-5 15M1532 287l6 11M1543 286l14 -6M1543 286l-4 12M1543 286l10 9M1557 280l9 -4M1557 280l-4 15M1557 280l6 8M1566 276l13 -2M1566 276l-3 12M1566 276l9 10M1579 274l13 0M1579 274l-4 12M1579 274l14 10M1592 274l15 -7M1592 274l1 10M1592 274l8 6M1606 267l7 -1M1606 267l-7 13M1606 267l4 9M1614 266l17 -9M1614 266l-3 10M1614 266l9 9M1631 258l8 3M1631 258l-8 17M1631 258l8 13M1639 261l15 -6M1639 261l0 10M1639 261l10 4M1653 255l9 -4M1653 255l-5 10M1653 255l7 7M1662 251l16 -1M1662 251l-2 11M1662 251l12 7M1678 250l13 -5M1678 250l-4 8M1678 250l7 4M1691 245l8 -7M1691 245l-6 9M1691 245l5 6M1699 238l13 -1M1699 238l-3 13M1699 238l11 11M1712 237l16 -3M1712 237l-2 13M1712 237l7 8M1728 234l9 -5M1728 234l-8 11M1728 234l4 7M1737 229l11 0M1737 229l-4 12M1737 229l11 13M1748 229l10 -7M1748 229l-1 13M1748 229l6 7M1758 223l17 -1M1758 223l-4 14M1758 223l10 10M1776 222l11 -3M1776 222l-7 11M1776 222l5 6M1787 219l9 -5M1787 219l-7 8M1787 219l6 7M1796 215l13 -6M1796 215l-3 12M1796 215l10 9M1808 209l10 -0M1808 209l-2 15M1819 209l-13 15M1819 209l-7 22M882 481l10 -2M882 481l-8 11M882 481l7 9M892 479l14 -4M892 479l-3 10M892 479l6 10M906 475l10 -8M906 475l-8 14M906 475l7 9M906 475l15 7M915 467l14 -0M915 467l5 15M929 467l11 -4M929 467l-9 15M929 467l9 10M941 463l11 -5M941 463l-3 13M941 463l5 10M952 458l12 -0M952 458l-6 15M952 458l7 9M964 458l9 -5M964 458l-5 9M964 458l6 10M973 453l11 -5M973 453l-3 16M973 453l8 8M984 448l18 -0M984 448l-4 12M984 448l11 12M1002 447l11 -4M1002 447l-6 12M1002 447l6 9M1013 444l7 -6M1013 444l-5 13M1013 444l9 8M1020 438l11 -2M1020 438l2 14M1020 438l9 12M1032 436l17 -5M1032 436l-2 13M1032 436l15 10M1049 431l6 -1M1049 431l-2 15M1049 431l4 10M1056 430l16 -7M1056 430l-2 11M1056 430l12 11M1071 424l13 -3M1071 424l-3 17M1071 424l12 12M1084 421l11 2M1084 421l-1 15M1084 421l8 12M1095 423l15 -6M1095 423l-3 10M1095 423l8 9M1110 417l10 -2M1110 417l-7 15M1110 417l6 10M1121 415l15 -3M1121 415l-5 12M1121 415l10 8M1135 412l9 -6M1135 412l-4 12M1135 412l7 6M1145 406l11 -3M1145 406l-2 11M1145 406l5 9M1156 403l9 -1M1156 403l-6 12M1156 403l8 7M1165 402l17 -8M1165 402l-1 8M1165 402l11 9M1181 394l7 -0M1181 394l-5 17M1181 394l5 15M1189 394l14 -1M1189 394l-3 15M1189 394l11 8M1203 393l14 -7M1203 393l-3 10M1203 393l9 9M1216 386l12 -6M1216 386l-5 16M1216 386l9 8M1228 380l14 -3M1228 380l-2 14M1228 380l6 15M1242 377l13 -0M1242 377l-8 18M1242 377l6 11M1255 377l12 -2M1255 377l-7 11M1255 377l4 8M1267 375l10 -7M1267 375l-8 10M1267 375l4 4M1278 368l10 -1M1278 368l-6 11M1278 368l6 8M1287 368l15 -2M1287 368l-4 9M1287 368l13 9M1302 366l8 -4M1302 366l-2 11M1302 366l7 4M1310 362l12 -8M1310 362l-0 8M1310 362l9 4M1322 354l17 -4M1322 354l-3 12M1322 354l9 10M1339 350l11 1M1339 350l-7 14M1339 350l7 15M1349 351l14 -5M1349 351l-4 14M1349 351l11 9M1363 346l7 -2M1363 346l-3 13M1363 346l6 8M1370 344l14 -7M1370 344l-1 10M1370 344l14 6M1384 337l10 -0M1384 337l-0 14M1384 337l7 11M1394 337l16 -4M1394 337l-3 12M1394 337l12 10M1410 333l13 -5M1410 333l-4 14M1410 333l10 11M1423 328l9 -1M1423 328l-3 16M1423 328l8 8M1432 327l9 -2M1432 327l-1 10M1432 327l6 7M1441 324l14 -4M1441 324l-3 10M1441 324l11 7M1455 320l10 -4M1455 320l-3 11M1455 320l13 11M1465 316l16 0M1465 316l3 15M1465 316l13 8M1481 316l14 -4M1481 316l-3 8M1481 316l6 6M1495 312l12 -7M1495 312l-8 10M1495 312l6 8M1508 305l7 -2M1508 305l-7 15M1508 305l6 12M1515 303l12 -1M1515 303l-1 15M1515 303l7 8M1527 302l11 -3M1527 302l-5 9M1527 302l10 6M1538 299l14 -3M1538 299l-1 9M1538 299l12 8M1552 296l11 -7M1552 296l-2 11M1552 296l13 8M1563 288l12 -2M1563 288l3 15M1563 288l11 11M1575 286l17 -2M1575 286l-1 13M1575 286l11 8M1592 285l7 -4M1592 285l-6 10M1592 285l3 10M1600 280l11 -4M1600 280l-4 15M1600 280l8 11M1611 276l13 -1M1611 276l-3 15M1611 276l11 7M1623 275l16 -4M1623 275l-2 9M1623 275l12 6M1639 271l9 -6M1639 271l-4 11M1639 271l5 6M1648 265l12 -3M1648 265l-5 12M1648 265l10 10M1660 262l14 -4M1660 262l-1 14M1660 262l7 11M1674 257l12 -3M1674 257l-7 16M1674 257l7 12M1686 254l11 -3M1686 254l-5 16M1686 254l10 14M1697 251l14 -2M1697 251l-1 17M1697 251l8 10M1710 250l9 -5M1710 250l-5 12M1710 250l8 11M1720 245l13 -4M1720 245l-1 16M1720 245l12 8M1732 241l15 1M1732 241l-1 12M1732 241l7 9M1748 242l7 -6M1748 242l-8 8M1748 242l9 9M1754 236l15 -4M1754 236l2 15M1754 236l15 5M1769 232l11 -5M1769 232l0 9M1769 232l12 10M1780 228l12 -1M1780 228l1 15M1780 228l10 14M1793 227l13 -3M1793 227l-2 15M1793 227l11 8M1806 224l-3 11M1806 224l6 7M873 492l15 -3M873 492l11 7M889 489l9 -1M889 489l-4 10M889 489l10 9M897 489l15 -4M897 489l1 10M897 489l14 6M913 485l8 -2M913 485l-2 11M913 485l7 6M921 482l17 -6M921 482l-1 9M921 482l8 4M938 476l7 -3M938 476l-10 10M938 476l7 4M945 473l13 -6M945 473l0 8M945 473l8 7M958 467l11 2M958 467l-5 13M958 467l10 11M970 468l11 -8M970 468l-1 10M970 468l12 5M981 460l15 -0M981 460l1 13M981 460l13 8M996 460l13 -3M996 460l-2 8M996 460l9 8M1008 457l14 -5M1008 457l-3 11M1008 457l10 8M1022 452l8 -2M1022 452l-4 14M1022 452l10 9M1030 450l17 -3M1030 450l2 11M1030 450l13 9M1047 446l7 -5M1047 446l-4 12M1047 446l4 7M1054 441l14 0M1054 441l-3 12M1054 441l14 10M1068 441l16 -5M1068 441l0 9M1068 441l11 8M1083 436l9 -3M1083 436l-5 13M1083 436l3 6M1092 433l11 -1M1092 433l-5 9M1092 433l8 10M1103 432l13 -5M1103 432l-3 11M1103 432l9 3M1116 427l15 -3M1116 427l-4 8M1116 427l8 5M1131 423l12 -6M1131 423l-7 8M1131 423l9 7M1142 417l7 -3M1142 417l-3 13M1142 417l6 11M1149 414l14 -5M1149 414l-0 13M1149 414l13 9M1164 409l12 2M1164 409l-1 14M1164 409l9 13M1176 411l10 -3M1176 411l-4 12M1176 411l9 6M1186 408l14 -6M1186 408l-1 8M1186 408l10 5M1200 402l12 -1M1200 402l-4 11M1200 402l8 7M1212 402l14 -8M1212 402l-4 8M1212 402l10 3M1226 394l8 2M1226 394l-4 11M1226 394l6 11M1234 396l14 -7M1234 396l-2 9M1234 396l12 6M1248 389l11 -3M1248 389l-2 14M1248 389l11 9M1260 386l12 -6M1260 386l-0 12M1260 386l7 9M1271 380l12 -3M1271 380l-5 15M1271 380l10 13M1284 377l17 -0M1284 377l-2 16M1284 377l12 10M1301 376l9 -6M1301 376l-5 10M1301 376l7 10M1310 370l10 -4M1310 370l-2 17M1310 370l10 10M1319 366l12 -3M1319 366l0 13M1319 366l8 10M1331 364l14 1M1331 364l-4 12M1331 364l12 13M1345 365l15 -6M1345 365l-2 11M1345 365l8 8M1360 359l9 -5M1360 359l-7 13M1360 359l3 10M1369 354l15 -3M1369 354l-6 15M1369 354l10 8M1384 351l7 -2M1384 351l-5 11M1384 351l5 13M1391 349l15 -1M1391 349l-2 15M1391 349l12 7M1406 347l14 -3M1406 347l-2 9M1406 347l10 5M1419 344l11 -8M1419 344l-4 8M1419 344l9 7M1431 336l7 -2M1431 336l-2 16M1431 336l7 14M1438 334l14 -3M1438 334l-1 16M1438 334l15 12M1452 331l16 -1M1452 331l1 15M1452 331l8 9M1469 330l9 -7M1469 330l-8 10M1469 330l8 10M1478 324l9 -2M1478 324l-2 16M1478 324l6 13M1487 322l14 -2M1487 322l-3 15M1487 322l13 7M1501 320l13 -2M1501 320l-1 9M1501 320l7 11M1514 318l8 -6M1514 318l-6 13M1514 318l9 4M1522 311l15 -4M1522 311l2 11M1522 311l14 11M1537 307l13 -1M1537 307l-1 15M1537 307l7 11M1550 307l16 -3M1550 307l-6 12M1550 307l9 6M1566 304l9 -4M1566 304l-7 9M1566 304l6 6M1574 299l12 -5M1574 299l-2 11M1574 299l10 5M1586 295l10 0M1586 295l-2 9M1596 295l12 -4M1596 295l-12 9M1596 295l3 11M1596 295l9 5M1607 291l14 -8M1607 291l-3 8M1607 291l11 5M1621 284l14 -2M1621 284l-3 13M1621 284l9 12M1635 281l9 -4M1635 281l-5 14M1635 281l9 10M1644 277l15 -1M1644 277l1 14M1644 277l10 13M1659 276l9 -3M1659 276l-5 15M1659 276l9 9M1668 273l13 -3M1668 273l0 12M1668 273l10 10M1681 270l14 -2M1681 270l-3 13M1681 270l8 8M1695 268l10 -6M1695 268l-6 10M1695 268l9 4M1705 261l14 -1M1705 261l-0 10M1705 261l11 11M1719 261l13 -8M1719 261l-2 12M1719 261l10 5M1731 253l8 -3M1731 253l-3 12M1731 253l10 12M1740 250l17 1M1740 250l1 15M1740 250l14 9M1756 251l13 -9M1756 251l-3 9M1756 251l6 4M1769 242l12 0M1769 242l-6 14M1769 242l3 14M1781 242l10 -0M1781 242l-9 13M1781 242l10 7M1791 242l13 -7M1791 242l0 7M1791 242l7 5M1804 235l8 -4M1804 235l-6 12M1804 235l10 9M1812 231l2 12M884 499l14 -0M884 499l23 6M898 499l13 -4M898 499l9 6M911 495l9 -4M911 495l-4 10M911 495l15 3M920 491l8 -4M920 491l6 7M928 487l17 -6M928 487l-3 12M946 481l8 -1M946 481l-20 17M946 481l18 8M953 480l15 -2M953 480l10 9M969 478l13 -4M969 478l-5 11M969 478l8 6M982 473l12 -5M982 473l-5 10M982 473l6 10M994 468l11 0M994 468l-6 16M994 468l9 11M1005 468l13 -3M1005 468l-2 10M1018 465l14 -5M1018 465l-15 13M1018 465l17 6M1032 460l11 -2M1032 460l3 11M1043 458l8 -5M1043 458l-8 13M1043 458l8 5M1051 453l17 -3M1051 453l0 11M1068 451l11 -1M1068 451l-17 13M1068 451l4 8M1079 449l8 -7M1079 449l-7 9M1079 449l22 3M1087 442l13 1M1087 442l14 10M1100 443l12 -8M1100 443l0 9M1100 443l9 4M1112 435l13 -3M1112 435l-3 12M1124 432l15 -1M1124 432l-16 16M1124 432l22 8M1139 430l9 -2M1139 430l7 9M1149 428l14 -5M1149 428l-3 12M1149 428l11 7M1162 423l10 -0M1162 423l-2 12M1162 423l9 9M1172 423l12 -6M1172 423l-1 9M1172 423l10 4M1185 417l11 -3M1185 417l-2 10M1185 417l8 8M1196 413l12 -4M1196 413l-3 12M1196 413l10 8M1208 410l14 -5M1208 410l-2 12M1222 405l10 1M1222 405l-16 17M1222 405l11 10M1232 405l14 -3M1232 405l1 10M1232 405l11 7M1246 402l14 -5M1246 402l-3 10M1246 402l19 2M1259 397l7 -3M1259 397l5 7M1266 395l15 -2M1266 395l-2 9M1266 395l12 9M1281 392l14 -6M1281 392l-3 11M1295 386l12 1M1295 386l-17 17M1295 386l16 6M1308 387l12 -7M1308 387l4 6M1320 380l8 -4M1320 380l-8 13M1320 380l5 9M1328 376l16 0M1328 376l-3 13M1343 376l10 -4M1343 376l-19 13M1353 373l10 -4M1363 369l16 -7M1363 369l24 2M1379 362l10 2M1379 362l8 9M1389 363l14 -7M1389 363l-2 7M1389 363l12 6M1403 356l12 -4M1403 356l-3 13M1403 356l5 8M1416 352l13 -1M1416 352l-8 12M1416 352l5 9M1429 352l9 -1M1429 352l-9 10M1437 350l15 -4M1437 350l-17 11M1437 350l10 5M1453 346l7 -6M1453 346l-5 9M1453 346l5 6M1460 340l16 -0M1460 340l-2 12M1476 340l7 -3M1476 340l-18 12M1476 340l18 2M1484 337l16 -8M1484 337l10 5M1500 329l8 2M1500 329l-6 13M1500 329l4 11M1508 331l15 -9M1508 331l-4 9M1508 331l20 0M1524 322l12 0M1524 322l5 9M1536 322l8 -4M1536 322l-7 9M1544 318l15 -5M1544 318l22 4M1559 313l13 -3M1559 313l7 9M1572 310l12 -6M1572 310l-6 12M1572 310l10 7M1584 304l15 2M1584 304l-2 12M1599 306l6 -6M1599 306l-17 11M1605 299l13 -3M1605 299l25 4M1618 296l12 -1M1618 296l11 8M1630 295l14 -4M1630 295l-1 8M1630 295l19 3M1644 291l9 -1M1644 291l5 7M1654 290l14 -6M1654 290l-5 8M1668 285l10 -2M1668 285l-19 14M1668 285l23 3M1678 283l11 -5M1678 283l13 5M1689 278l15 -7M1689 278l2 10M1704 272l12 1M1704 272l-13 16M1704 272l9 10M1716 273l13 -7M1716 273l-3 10M1716 273l9 5M1729 265l12 0M1729 265l-4 13M1741 265l13 -6M1741 265l-16 13M1754 260l9 -4M1754 260l18 5M1763 255l10 0M1763 255l9 9M1772 256l18 -6M1772 256l-1 9M1791 249l7 -2M1791 249l-19 15M1791 249l17 4M1798 247l16 -4M1798 247l10 6M1814 243l-6 10M907 505l19 -7M964 489l13 -6M964 489l24 -5M977 483l11 0M988 484l15 -5M1035 471l16 -7M1051 464l20 -5M1100 452l8 -5M1146 439l14 -4M1146 439l25 -8M1160 435l11 -3M1171 432l12 -5M1171 432l22 -7M1183 427l10 -2M1193 425l13 -3M1206 422l27 -7M1233 415l10 -3M1243 412l22 -8M1264 404l14 -1M1311 392l13 -3M1387 370l14 -1M1401 369l7 -5M1401 369l19 -7M1408 364l12 -3M1448 355l10 -3M1494 342l10 -2M1504 340l25 -8M1566 322l16 -5M1629 304l20 -5M1691 288l22 -6M1713 282l12 -4" stroke="#000" stroke-width="1" fill="none"/></g><path d="M858.3,415.4 L895,437 L894,496.5 L855.4,467.6 Z" fill="#9a6e00" stroke="#000" stroke-width="1"/><path d="M862,419.5 Q859.5,420 859.5,424 L858.8,462 Q859,467 862,470 L886,491 Q891,494 891.5,489 L892,443 Q892,439 889,437.5 Z" fill="#a07200" stroke="#000" stroke-width="1.1"/><path d="M864,430 L876,452 L862,460 M876,452 L889,446 M876,452 L884,470 L868,470 M884,470 L890,480 M870,436 L889,446" stroke="#000" stroke-width="0.8" fill="none" opacity="0.85"/><path d="M859.5,465 L891.5,458 L891.5,489 Q891,494 886,491 L862,470 Q859.5,468 859.5,465 Z" fill="#725200"/><path d="M862,419.5 L889,437.5 L884,444 L866,432 Z" fill="#8a6200"/><path d="M858.3,415.4 L1771,159.3 L1800,183 L1807,196 L1802,243.3 L894,496.5" fill="none" stroke="#000" stroke-width="1.3"/><path d="M1247.2,221.0 L1250.5,223.4 L1253.6,226.0 L1256.6,228.8 L1259.4,231.8 L1262.1,235.0 L1264.5,238.3 L1266.8,241.8 L1268.9,245.5 L1270.7,249.3 L1272.4,253.2 L1273.9,257.3 L1275.1,261.4 L1276.1,265.7 L1276.9,270.1 L1277.5,274.5 L1277.8,279.0 L1277.9,283.6 L1277.8,288.1 L1277.4,292.8 L1276.9,297.4 L1276.1,302.0 L1275.1,306.7 L1273.8,311.2 L1272.4,315.8 L1270.7,320.3 L1268.8,324.8 L1266.8,329.2 L1264.5,333.4 L1262.0,337.6 L1259.4,341.7 L1256.6,345.7 L1253.6,349.5 L1250.4,353.2 L1247.1,356.8 L1243.7,360.1 L1240.1,363.3 L1236.4,366.4 L1232.6,369.2 L1228.6,371.9 L1224.6,374.3 L1220.5,376.5 L1216.3,378.6 L1212.1,380.4 L1207.9,381.9 L1203.5,383.3 L1199.2,384.4 L1194.9,385.2 L1190.5,385.9 L1186.2,386.3 L1181.9,386.4 L1177.6,386.3 L1173.4,386.0 L1169.2,385.4 L1165.1,384.6 L1161.1,383.5 L1157.2,382.2 L1153.4,380.7 L1149.7,379.0 L1146.1,377.0 L1142.6,374.8 L1047.1,315.4 L1044.0,313.1 L1041.0,310.5 L1038.2,307.8 L1035.6,304.8 L1033.2,301.6 L1031.0,298.2 L1029.0,294.7 L1027.2,290.9 L1025.6,287.0 L1024.3,282.9 L1023.1,278.7 L1022.2,274.4 L1021.5,269.9 L1021.1,265.3 L1020.9,260.6 L1020.9,255.8 L1021.1,251.0 L1021.6,246.1 L1022.3,241.1 L1023.2,236.1 L1024.4,231.1 L1025.8,226.1 L1027.4,221.1 L1029.2,216.1 L1031.3,211.1 L1033.5,206.2 L1035.9,201.4 L1038.5,196.6 L1041.4,192.0 L1044.3,187.4 L1047.5,182.9 L1050.8,178.6 L1054.3,174.4 L1057.9,170.4 L1061.6,166.5 L1065.5,162.8 L1069.4,159.3 L1073.5,155.9 L1077.6,152.8 L1081.9,149.9 L1086.2,147.1 L1090.5,144.7 L1094.9,142.4 L1099.3,140.4 L1103.8,138.6 L1108.2,137.1 L1112.6,135.8 L1117.1,134.8 L1121.4,134.0 L1125.8,133.5 L1130.1,133.3 L1134.3,133.3 L1138.4,133.6 L1142.5,134.2 L1146.4,135.0 L1150.3,136.1 L1154.0,137.4 L1157.6,139.0 L1161.0,140.8 L1164.3,142.8Z" fill="url(#upO)"/><path d="M1246.0,222.6 L1250.1,225.6 L1253.8,228.9 L1257.4,232.5 L1260.6,236.3 L1263.6,240.4 L1266.3,244.8 L1268.7,249.4 L1270.7,254.2 L1272.5,259.1 L1273.9,264.3 L1275.0,269.6 L1275.7,275.0 L1276.1,280.5 L1276.1,286.1 L1275.8,291.7 L1275.1,297.4 L1274.1,303.1 L1272.8,308.7 L1271.1,314.3 L1269.1,319.8 L1266.8,325.3 L1264.1,330.6 L1261.2,335.8 L1258.0,340.8 L1254.5,345.6 L1250.8,350.2 L1246.8,354.6 L1242.6,358.8 L1238.2,362.7 L1233.6,366.3 L1228.9,369.6 L1224.0,372.7 L1219.0,375.4 L1213.8,377.7 L1208.6,379.8 L1203.4,381.4 L1198.1,382.8 L1192.7,383.7 L1187.4,384.3 L1182.2,384.5 L1176.9,384.4 L1171.8,383.8 L1166.8,382.9 L1161.8,381.7 L1157.1,380.1 L1152.4,378.1 L1148.0,375.8 L1143.8,373.2 L1139.7,370.2 L1136.0,366.9 L1132.4,363.3 L1129.2,359.5 L1126.2,355.4 L1123.5,351.0 L1121.1,346.4 L1119.1,341.6 L1117.3,336.7 L1115.9,331.5 L1114.8,326.2 L1114.1,320.8 L1113.7,315.3 L1113.7,309.7 L1114.0,304.1 L1114.7,298.4 L1115.7,292.7 L1117.0,287.1 L1118.7,281.5 L1120.7,276.0 L1123.0,270.5 L1125.7,265.2 L1128.6,260.0 L1131.8,255.0 L1135.3,250.2 L1139.0,245.6 L1143.0,241.2 L1147.2,237.0 L1151.6,233.1 L1156.2,229.5 L1160.9,226.2 L1165.8,223.1 L1170.8,220.4 L1176.0,218.1 L1181.2,216.0 L1186.4,214.4 L1191.7,213.0 L1197.1,212.1 L1202.4,211.5 L1207.6,211.3 L1212.9,211.4 L1218.0,212.0 L1223.0,212.9 L1228.0,214.1 L1232.7,215.7 L1237.4,217.7 L1241.8,220.0 L1246.0,222.6Z" fill="url(#upI)"/><g clip-path="url(#uphull)"><path d="M1294 110l10 4M1294 110l-22 -2M1294 110l-9 7M1294 110l-0 11M1303 114l-10 7M1303 114l-1 12M1303 114l3 25M1272 109l13 9M1272 109l-20 -2M1272 109l-7 2M1272 109l3 12M1285 117l9 4M1285 117l-10 4M1285 117l1 9M1293 121l9 5M1293 121l-7 5M1293 121l-1 10M1302 126l-10 5M1302 126l4 13M1251 107l14 4M1251 107l-8 3M1251 107l2 12M1265 111l10 10M1265 111l-12 8M1265 111l-2 12M1275 121l11 5M1275 121l-12 2M1275 121l-3 12M1286 126l6 5M1286 126l-14 7M1286 126l-2 11M1292 131l14 8M1292 131l-8 5M1292 131l-3 11M1306 139l-17 3M1306 139l-9 12M1306 139l2 18M1243 110l10 8M1243 110l-19 -1M1243 110l-13 2M1243 110l-3 15M1253 119l10 4M1253 119l-13 6M1253 119l-2 11M1262 123l9 10M1262 123l-12 6M1262 123l-2 14M1272 133l12 4M1272 133l-11 5M1272 133l0 11M1284 137l5 6M1284 137l-12 7M1284 137l-3 12M1289 142l9 9M1289 142l-8 7M1289 142l3 13M1298 151l11 6M1298 151l-6 4M1298 151l3 12M1309 157l-8 6M1309 157l-10 15M1309 157l-3 23M1224 109l6 3M1224 109l-25 -0M1224 109l-10 5M1224 109l-5 10M1230 112l10 13M1230 112l-11 7M1230 112l1 17M1240 125l11 4M1240 125l-9 5M1240 125l-3 11M1251 129l10 8M1251 129l-14 6M1251 129l-3 12M1261 137l12 6M1261 137l-14 4M1261 137l-1 9M1272 143l9 6M1272 143l-13 3M1272 143l-4 9M1281 149l11 6M1281 149l-13 3M1281 149l2 12M1292 155l9 8M1292 155l-8 6M1292 155l-2 11M1300 163l-10 3M1300 163l-1 9M1199 109l15 5M1199 109l-10 3M1199 109l-2 12M1214 114l5 5M1214 114l-17 7M1214 114l-5 12M1219 119l12 10M1219 119l-10 6M1219 119l-0 10M1231 130l6 6M1231 130l-12 -1M1231 130l-3 9M1237 136l10 6M1237 136l-9 3M1237 136l-0 11M1247 142l12 5M1247 142l-11 5M1247 142l1 8M1259 147l9 6M1259 147l-12 3M1259 147l0 13M1268 152l16 9M1268 152l-8 7M1268 152l1 14M1284 161l6 5M1284 161l-15 5M1284 161l-7 10M1290 166l9 6M1290 166l-13 5M1290 166l-5 15M1299 172l7 9M1299 172l-14 9M1299 172l1 18M1306 181l-6 9M1306 181l0 12M1189 113l9 8M1189 113l-22 -0M1189 113l-9 3M1189 113l-1 12M1197 121l11 5M1197 121l-10 4M1197 121l3 10M1209 126l10 3M1209 126l-8 5M1209 126l1 14M1218 129l10 10M1218 129l-9 11M1218 129l-2 17M1228 139l9 8M1228 139l-11 7M1228 139l0 12M1237 147l11 3M1237 147l-8 4M1237 147l-0 9M1248 150l12 10M1248 150l-11 6M1248 150l1 12M1260 159l9 7M1260 159l-11 3M1260 159l-1 16M1269 166l8 5M1269 166l-10 10M1269 166l1 10M1277 171l9 10M1277 171l-7 5M1277 171l1 15M1285 181l15 8M1285 181l-8 5M1285 181l2 13M1300 190l6 3M1300 190l-13 5M1300 190l-2 9M1306 193l-8 6M1306 193l-5 17M1167 112l13 4M1167 112l-18 -2M1167 112l-11 4M1167 112l4 9M1180 116l8 9M1180 116l-9 5M1180 116l-4 14M1188 125l13 6M1188 125l-13 5M1188 125l-1 13M1201 131l9 9M1201 131l-14 7M1201 131l-7 13M1210 140l7 6M1210 140l-16 3M1210 140l-4 8M1217 146l12 5M1217 146l-11 3M1217 146l-1 10M1228 151l8 5M1228 151l-13 5M1228 151l-2 10M1237 156l12 7M1237 156l-10 5M1237 156l3 15M1249 162l10 13M1249 162l-9 8M1249 162l-2 12M1259 176l10 1M1259 176l-12 -2M1259 176l1 7M1270 176l8 10M1270 176l-9 6M1270 176l-4 11M1278 187l10 8M1278 187l-12 1M1278 187l-2 8M1287 194l11 4M1287 194l-12 0M1287 194l-2 7M1299 199l-13 3M1299 199l2 12M1149 111l7 6M1149 111l-21 -3M1149 111l-9 2M1149 111l-2 8M1156 116l15 5M1156 116l-8 2M1156 116l1 11M1170 121l5 9M1170 121l-14 5M1170 121l-4 15M1175 130l11 7M1175 130l-9 6M1175 130l-2 12M1186 137l8 6M1186 137l-13 5M1186 137l-1 14M1194 143l11 5M1194 143l-8 8M1194 143l1 11M1205 148l10 8M1205 148l-11 6M1205 148l-1 14M1215 156l11 5M1215 156l-11 7M1215 156l3 15M1227 161l13 10M1227 161l-8 10M1227 161l-1 17M1240 171l7 3M1240 171l-14 7M1240 171l-6 13M1247 174l13 9M1247 174l-14 10M1247 174l0 16M1261 183l5 5M1261 183l-13 7M1261 183l-1 14M1265 187l10 7M1265 187l-6 9M1275 195l10 7M1275 195l-16 2M1275 195l-7 9M1275 195l3 16M1285 201l15 9M1285 201l-7 9M1285 201l1 13M1301 210l-15 4M1301 210l-6 15M1301 210l4 22M1127 108l12 5M1127 108l-8 5M1127 108l2 14M1140 113l7 6M1140 113l-11 9M1140 113l-2 17M1147 119l9 8M1147 119l-10 11M1147 119l0 13M1157 127l10 9M1157 127l-9 4M1157 127l-4 14M1166 136l7 6M1166 136l-14 4M1166 136l-2 11M1173 142l12 9M1173 142l-9 6M1173 142l4 11M1186 151l9 4M1186 151l-9 1M1186 151l1 6M1195 155l10 8M1195 155l-8 3M1195 155l3 13M1204 163l14 8M1204 163l-7 5M1204 163l4 10M1218 171l7 7M1218 171l-10 2M1218 171l-2 13M1226 178l8 6M1226 178l-9 6M1226 178l-0 9M1234 184l14 6M1234 184l-8 4M1234 184l1 9M1248 190l12 7M1248 190l-13 3M1248 190l2 11M1260 197l9 7M1260 197l-10 4M1260 197l-2 13M1269 204l9 6M1269 204l-11 5M1269 204l-6 10M1278 210l8 4M1278 210l-15 4M1278 210l-5 10M1286 214l9 11M1286 214l-13 6M1286 214l-2 17M1295 225l10 7M1295 225l-11 6M1295 225l1 12M1305 232l-9 5M1305 232l2 12M1119 113l10 9M1119 113l-24 -2M1119 113l-13 5M1119 113l-6 12M1129 122l9 8M1129 122l-16 3M1129 122l-3 11M1138 130l10 1M1138 130l-11 3M1138 130l1 8M1147 131l5 9M1147 131l-9 7M1147 131l-3 10M1153 140l12 7M1153 140l-8 1M1153 140l7 11M1165 148l13 5M1165 148l-5 4M1165 148l0 7M1177 152l10 5M1177 152l-13 3M1177 152l-3 13M1187 158l10 11M1187 158l-13 8M1187 158l-1 13M1197 168l12 5M1197 168l-11 3M1197 168l-3 11M1209 173l8 12M1209 173l-15 7M1209 173l-4 10M1217 184l9 3M1217 184l-12 -2M1217 184l-1 10M1226 187l9 6M1226 187l-10 7M1226 187l1 13M1235 193l15 8M1235 193l-7 7M1235 193l-1 12M1249 200l8 9M1249 200l-16 4M1249 200l-8 13M1257 209l5 5M1257 209l-16 4M1257 209l-4 12M1263 214l11 6M1263 214l-9 7M1263 214l-0 12M1273 221l11 10M1273 221l-11 5M1273 221l2 17M1284 231l11 6M1284 231l-9 6M1284 231l1 12M1296 237l11 7M1296 237l-11 6M1296 237l2 8M1307 244l-9 1M1307 244l-3 9M1095 111l11 7M1095 111l-22 -1M1095 111l-11 7M1095 111l-3 12M1106 118l7 7M1106 118l-14 6M1106 118l-1 11M1113 125l13 9M1113 125l-9 4M1113 125l3 13M1126 133l12 5M1126 133l-10 4M1126 133l-1 9M1138 138l6 3M1138 138l-13 4M1138 138l-6 13M1144 141l15 10M1144 141l-12 10M1144 141l-3 17M1159 151l5 4M1159 151l-18 7M1159 151l-5 14M1165 155l9 10M1165 155l-10 10M1165 155l4 16M1174 165l12 6M1174 165l-6 6M1174 165l-2 12M1186 171l8 9M1186 171l-14 6M1186 171l-1 17M1194 180l11 3M1194 180l-9 8M1194 180l0 14M1205 183l11 11M1205 183l-10 11M1205 183l-0 16M1216 194l11 6M1216 194l-11 4M1216 194l-2 12M1227 200l7 4M1227 200l-14 6M1227 200l-4 12M1234 204l8 9M1234 204l-11 8M1234 204l-2 11M1242 213l12 8M1242 213l-9 2M1242 213l2 13M1254 221l8 5M1254 221l-10 5M1254 221l2 13M1262 226l13 12M1262 226l-6 8M1262 226l3 14M1275 237l10 6M1275 237l-10 2M1275 237l-2 7M1285 243l12 3M1285 243l-12 2M1285 243l-2 9M1298 246l6 8M1298 246l-14 6M1298 246l-2 14M1303 253l-8 6M1303 253l-4 11M1303 253l-4 25M1073 110l11 8M1073 110l-14 -2M1073 110l-10 3M1073 110l0 8M1084 118l8 5M1084 118l-11 -0M1084 118l-2 9M1092 124l12 5M1092 124l-10 4M1092 124l5 10M1104 128l12 9M1104 128l-8 5M1104 128l3 13M1116 138l9 4M1116 138l-9 4M1116 138l-4 9M1125 142l8 9M1125 142l-12 5M1125 142l1 14M1133 151l9 7M1133 151l-6 5M1133 151l1 8M1142 158l12 7M1142 158l-8 1M1142 158l1 12M1154 165l14 6M1154 165l-11 6M1154 165l-0 14M1168 171l4 6M1168 171l-14 8M1168 171l-7 10M1172 177l13 10M1172 177l-10 4M1172 177l1 13M1185 187l9 7M1185 187l-12 3M1185 187l1 9M1194 194l10 4M1194 194l-8 2M1194 194l-3 10M1205 198l9 8M1205 198l-13 6M1205 198l2 11M1213 206l10 7M1213 206l-7 3M1213 206l0 10M1223 213l9 3M1223 213l-10 3M1223 213l2 13M1232 216l11 10M1232 216l-7 10M1232 216l1 12M1243 226l13 8M1243 226l-10 2M1243 226l1 12M1256 234l9 6M1256 234l-12 5M1256 234l-6 9M1265 239l9 5M1265 239l-15 3M1265 239l-3 10M1274 245l10 7M1274 245l-12 5M1274 245l-4 13M1283 252l12 8M1283 252l-14 6M1283 252l-1 12M1296 260l4 5M1296 260l-13 3M1296 260l-3 10M1300 265l-8 5M1300 265l-0 14M1058 108l4 5M1058 108l-23 -0M1058 108l-14 3M1058 108l-6 12M1063 113l11 5M1063 113l-10 7M1063 113l3 16M1073 118l9 9M1073 118l-7 10M1082 128l15 6M1082 128l-16 1M1082 128l-11 8M1082 128l-0 12M1097 134l11 8M1097 134l-15 6M1097 134l-5 14M1108 142l5 5M1108 142l-16 6M1108 142l-3 11M1113 147l14 9M1113 147l-8 5M1113 147l1 15M1126 156l7 3M1126 156l-13 6M1126 156l-3 10M1133 160l10 11M1133 160l-11 7M1133 160l0 16M1143 170l11 8M1143 170l-9 5M1143 170l-2 8M1154 179l8 2M1154 179l-13 -0M1154 179l2 10M1162 181l11 9M1162 181l-6 8M1162 181l0 14M1173 190l13 6M1173 190l-11 5M1173 190l-0 11M1186 196l5 8M1186 196l-14 5M1186 196l-4 12M1191 204l15 5M1191 204l-9 4M1191 204l-1 11M1206 209l7 6M1206 209l-16 7M1206 209l-1 12M1214 215l12 10M1214 215l-8 5M1214 215l-1 11M1225 225l9 2M1225 225l-12 1M1225 225l-5 7M1234 228l11 11M1234 228l-13 5M1234 228l-1 12M1244 238l5 4M1244 238l-12 1M1244 238l-1 9M1250 243l12 7M1250 243l-7 4M1250 243l0 14M1262 249l7 8M1262 249l-12 7M1262 249l-1 10M1269 258l13 5M1269 258l-9 2M1269 258l4 13M1282 263l10 7M1282 263l-9 8M1282 263l-3 11M1292 270l8 8M1292 270l-12 5M1292 270l0 14M1300 278l-7 6M1300 278l2 9M1036 108l8 3M1036 108l-14 -0M1036 108l-5 13M1044 111l8 8M1044 111l-13 10M1044 111l0 12M1052 120l14 9M1052 120l-8 3M1052 120l0 11M1066 129l5 7M1066 129l-13 2M1066 129l-6 10M1071 135l11 5M1071 135l-11 3M1071 135l2 8M1081 140l11 8M1081 140l-8 3M1081 140l3 11M1092 148l13 4M1092 148l-7 3M1092 148l1 14M1105 152l9 10M1105 152l-11 10M1105 152l-2 17M1113 162l9 5M1113 162l-11 8M1113 162l-6 12M1123 166l11 9M1123 166l-15 7M1123 166l-2 13M1134 175l7 3M1134 175l-13 4M1134 175l-2 11M1141 178l15 10M1141 178l-9 8M1141 178l2 16M1156 189l6 7M1156 189l-12 6M1156 189l-4 13M1162 195l11 6M1162 195l-11 6M1162 195l2 11M1172 201l9 7M1172 201l-8 6M1172 201l-0 14M1182 208l8 7M1182 208l-10 7M1182 208l-3 11M1190 215l15 5M1190 215l-12 4M1190 215l5 11M1190 215l-7 17M1205 221l7 6M1205 221l-10 6M1205 221l-5 15M1213 227l7 6M1213 227l-12 9M1213 227l-1 15M1220 233l12 6M1220 233l-9 8M1220 233l0 12M1233 239l10 8M1233 239l-12 6M1233 239l-0 17M1243 247l7 10M1243 247l-11 10M1243 247l1 15M1250 257l11 2M1250 257l-5 5M1250 257l0 10M1261 259l13 12M1261 259l-11 8M1261 259l-1 16M1274 271l6 4M1274 271l-14 5M1274 271l-5 8M1280 274l13 9M1280 274l-11 5M1280 274l2 15M1293 284l10 4M1293 284l-11 5M1293 284l-3 13M1302 288l-12 10M1302 288l-4 14M1022 108l9 13M1022 108l-19 6M1022 108l-14 10M1022 108l-1 13M1031 121l13 2M1031 121l-10 -0M1031 121l5 9M1031 121l-12 13M1044 123l9 7M1044 123l-8 7M1053 130l7 9M1053 130l-17 -0M1053 130l-10 10M1053 130l-1 12M1060 139l13 5M1060 139l-8 3M1060 139l2 10M1073 143l12 8M1073 143l-11 6M1073 143l-4 13M1085 151l8 11M1085 151l-16 5M1085 151l-6 13M1093 162l9 8M1093 162l-14 2M1093 162l-5 9M1102 169l6 4M1102 169l-14 1M1102 169l0 9M1108 173l13 7M1108 173l-6 4M1108 173l5 11M1121 180l11 7M1121 180l-8 5M1121 180l-3 12M1132 187l12 8M1132 187l-14 6M1132 187l1 13M1143 195l8 7M1143 195l-10 4M1143 195l-1 8M1151 201l13 5M1151 201l-9 2M1151 201l-0 11M1164 207l8 8M1164 207l-13 6M1164 207l-2 12M1172 215l7 4M1172 215l-10 4M1172 215l-1 7M1179 219l-8 3M1179 219l4 13M1195 227l5 9M1195 227l-13 6M1195 227l-5 11M1201 235l11 6M1201 235l-10 2M1201 235l-1 12M1211 241l9 4M1211 241l-12 6M1211 241l-4 11M1221 245l12 12M1221 245l-13 7M1221 245l-3 15M1232 257l12 5M1232 257l-15 4M1232 257l-4 11M1244 262l6 5M1244 262l-16 6M1244 262l-5 14M1250 267l10 8M1250 267l-10 9M1250 267l-1 13M1260 275l9 4M1260 275l-11 5M1260 275l1 10M1268 279l13 10M1268 279l-7 6M1268 279l3 15M1282 289l8 8M1282 289l-11 5M1282 289l-3 10M1290 297l8 5M1290 297l-11 2M1290 297l-5 10M1298 302l-13 5M1298 302l1 14M1003 113l5 4M1003 113l-4 8M1008 118l13 3M1008 118l-9 3M1008 118l5 10M1021 121l-9 6M1021 121l-2 13M1036 130l7 10M1036 130l-17 4M1036 130l-8 12M1042 140l9 2M1042 140l-15 2M1042 140l-3 10M1051 142l10 7M1051 142l-12 8M1051 142l-3 14M1062 149l7 7M1062 149l-13 7M1062 149l-1 13M1069 156l10 8M1069 156l-8 6M1069 156l5 14M1079 164l9 7M1079 164l-5 6M1079 164l0 11M1088 171l14 7M1088 171l-9 4M1088 171l4 17M1102 178l10 7M1102 178l-10 9M1102 178l-2 11M1112 184l5 8M1112 184l-12 4M1112 184l1 12M1118 192l15 7M1118 192l-5 5M1118 192l2 12M1133 199l9 4M1133 199l-13 5M1133 199l-1 12M1142 203l9 10M1142 203l-11 8M1142 203l1 14M1151 213l11 7M1151 213l-8 4M1151 213l1 12M1162 219l9 3M1162 219l-10 6M1162 219l-5 12M1171 222l12 10M1171 222l-14 9M1171 222l1 18M1183 232l8 5M1183 232l-12 8M1183 232l-5 10M1191 238l9 10M1191 238l-13 5M1191 238l2 12M1199 247l8 5M1199 247l-7 3M1199 247l-3 10M1208 252l10 8M1208 252l-12 5M1208 252l0 12M1217 260l11 7M1217 260l-9 4M1217 260l1 8M1229 268l11 8M1229 268l-10 1M1229 268l3 8M1240 276l9 4M1240 276l-8 1M1240 276l-1 7M1249 280l12 5M1249 280l-10 2M1249 280l1 10M1261 285l10 9M1261 285l-10 5M1261 285l-4 12M1271 294l8 6M1271 294l-14 3M1271 294l-3 10M1279 300l6 7M1279 300l-10 4M1279 300l1 15M1285 307l13 8M1285 307l-5 8M1285 307l4 12M1299 315l-10 4M1299 315l-1 11M999 121l13 6M999 121l2 11M999 121l-8 21M1013 127l7 6M1013 127l-12 5M1013 127l-1 15M1019 133l8 9M1019 133l-8 9M1019 133l2 16M1028 142l12 8M1028 142l-6 7M1028 142l1 9M1039 150l9 6M1039 150l-10 2M1039 150l-2 11M1048 156l13 6M1048 156l-11 5M1048 156l2 10M1061 163l13 7M1061 163l-11 4M1061 163l-0 15M1074 170l5 5M1074 170l-13 7M1074 170l-6 13M1079 175l13 12M1079 175l-11 8M1079 175l1 13M1092 187l8 1M1092 187l-12 1M1092 187l-2 5M1100 188l13 8M1100 188l-10 4M1100 188l-1 15M1113 197l7 8M1113 197l-14 6M1113 197l-4 14M1120 205l12 7M1120 205l-11 6M1120 205l-1 9M1132 211l11 6M1132 211l-13 3M1132 211l-3 13M1143 217l9 8M1143 217l-14 7M1143 217l-3 14M1152 225l5 6M1152 225l-12 6M1152 225l-3 10M1157 231l14 9M1157 231l-8 4M1157 231l3 10M1171 240l7 3M1171 240l-11 1M1171 240l-4 7M1178 243l15 7M1178 243l-10 5M1178 243l0 12M1192 250l4 8M1192 250l-14 4M1192 250l-7 12M1196 257l12 7M1196 257l-11 5M1196 257l-0 11M1208 264l10 5M1208 264l-12 4M1208 264l-3 12M1218 269l13 8M1218 269l-13 7M1218 269l1 18M1231 276l8 6M1231 276l-12 11M1231 276l-3 16M1239 282l11 8M1239 282l-11 10M1239 282l-1 16M1251 290l7 7M1251 290l-13 8M1251 290l-1 15M1257 297l11 7M1257 297l-8 8M1257 297l-2 13M1269 304l11 11M1269 304l-13 6M1269 304l-1 12M1280 315l9 5M1280 315l-12 1M1280 315l-2 9M1289 319l9 7M1289 319l-11 5M1289 319l2 11M1298 326l-7 4M1298 326l1 10M1298 326l8 17M1001 132l10 10M1001 132l-10 9M1001 132l-3 12M1011 143l10 7M1011 143l-13 1M1011 143l-0 12M1021 149l8 2M1021 149l-11 6M1021 149l-6 11M1029 151l9 9M1029 151l-14 9M1029 151l2 17M1038 161l12 6M1038 161l-7 7M1038 161l3 12M1050 167l11 11M1050 167l-9 7M1050 167l-3 16M1061 177l8 6M1061 177l-14 5M1061 177l-4 12M1068 183l12 5M1068 183l-11 6M1068 183l-1 10M1080 188l10 4M1080 188l-13 5M1080 188l2 12M1090 192l9 11M1090 192l-8 8M1090 192l-1 12M1099 203l10 8M1099 203l-10 1M1099 203l-1 8M1109 211l10 3M1109 211l-11 1M1109 211l1 11M1119 214l10 10M1119 214l-9 8M1119 214l-0 14M1129 224l11 7M1129 224l-10 4M1129 224l-1 11M1140 231l9 4M1140 231l-12 4M1140 231l-2 11M1149 235l11 6M1149 235l-10 7M1149 235l-3 12M1160 241l8 6M1160 241l-14 6M1160 241l-4 12M1167 247l11 7M1167 247l-11 6M1167 247l5 14M1178 254l7 8M1178 254l-6 7M1185 262l10 6M1185 262l-13 -1M1185 262l-6 6M1185 262l2 15M1196 268l9 8M1196 268l-9 9M1196 268l2 14M1205 276l14 11M1205 276l-8 6M1205 276l2 10M1219 287l9 6M1219 287l-12 -1M1219 287l-3 6M1228 292l9 6M1228 292l-12 1M1228 292l-0 9M1238 298l12 6M1238 298l-10 3M1238 298l-2 7M1250 305l6 5M1250 305l-14 1M1250 305l-4 7M1256 310l12 6M1256 310l-10 2M1256 310l-1 14M1268 316l11 8M1268 316l-13 8M1268 316l-1 15M1278 324l13 6M1278 324l-12 7M1278 324l2 12M1291 330l8 6M1291 330l-11 6M1291 330l-5 13M1299 336l7 7M1299 336l-13 7M1299 336l-2 10M1305 343l-8 4M1305 343l-9 20M1305 343l-4 25M991 141l7 3M991 141l5 13M998 144l13 11M998 144l-1 11M1011 155l5 5M1011 155l-14 0M1011 155l-2 13M1015 160l16 8M1015 160l-6 8M1015 160l3 10M1031 168l10 5M1031 168l-12 2M1031 168l-1 10M1041 173l6 9M1041 173l-11 5M1041 173l-4 14M1047 182l10 7M1047 182l-11 5M1047 182l2 8M1057 189l10 4M1057 189l-8 1M1057 189l4 10M1067 193l15 7M1067 193l-6 6M1067 193l1 11M1082 200l7 4M1082 200l-14 4M1082 200l-7 10M1089 204l9 7M1089 204l-13 6M1089 204l-0 15M1098 211l11 11M1098 211l-9 8M1098 211l-2 11M1110 222l9 5M1110 222l-14 1M1110 222l-2 10M1119 228l9 7M1119 228l-11 5M1119 228l-1 10M1128 235l10 7M1128 235l-10 3M1128 235l-1 11M1138 242l7 5M1138 242l-11 4M1138 242l-0 13M1146 247l10 6M1146 247l-7 8M1146 247l2 16M1156 253l16 8M1156 253l-8 10M1156 253l5 13M1172 261l7 8M1172 261l-11 5M1172 261l-3 13M1179 269l8 8M1179 269l-10 5M1179 269l-1 13M1187 277l10 5M1187 277l-9 5M1187 277l1 13M1198 282l9 4M1198 282l-10 8M1198 282l-0 9M1207 286l9 7M1207 286l-9 5M1207 286l-2 14M1216 293l12 9M1216 293l-11 7M1216 293l-2 12M1228 302l7 4M1228 302l-14 3M1228 302l-2 12M1235 306l11 6M1235 306l-9 8M1235 306l0 11M1246 312l9 12M1246 312l-11 5M1246 312l-1 14M1255 324l12 7M1255 324l-10 2M1255 324l2 9M1266 331l14 5M1266 331l-10 2M1266 331l-1 9M1280 336l6 7M1280 336l-14 4M1280 336l-2 12M1286 343l11 3M1286 343l-8 4M1286 343l-1 13M1297 347l-12 9M1297 347l-1 17M997 155l12 13M997 155l3 14M1009 168l10 2M1009 168l-9 1M1009 168l-3 7M1019 170l11 8M1019 170l-13 5M1019 170l1 15M1030 178l6 9M1030 178l-11 7M1030 178l1 12M1036 187l13 3M1036 187l-5 3M1036 187l3 11M1049 190l12 8M1049 190l-10 8M1049 190l0 12M1061 199l7 5M1061 199l-12 3M1061 199l-1 11M1068 204l8 6M1068 204l-8 6M1068 204l1 16M1076 211l13 9M1076 211l-7 10M1076 211l3 16M1089 219l7 3M1089 219l-10 7M1089 219l-4 13M1096 223l12 10M1096 223l-11 9M1096 223l1 17M1108 233l10 5M1108 233l-11 7M1108 233l-4 11M1118 238l9 8M1118 238l-14 6M1118 238l1 16M1127 246l11 8M1127 246l-8 7M1127 246l-2 9M1138 254l10 8M1138 254l-13 0M1138 254l-4 11M1148 263l13 3M1148 263l-13 2M1148 263l-0 8M1161 266l8 7M1161 266l-13 4M1161 266l-7 12M1169 273l9 8M1169 273l-15 5M1169 273l-5 14M1178 282l9 9M1178 282l-14 6M1178 282l-4 12M1188 290l10 1M1188 290l-14 3M1188 290l-2 11M1197 291l8 9M1197 291l-12 10M1197 291l-1 14M1205 300l9 5M1205 300l-9 4M1205 300l2 13M1214 305l12 8M1214 305l-7 9M1214 305l2 14M1226 314l9 3M1226 314l-10 6M1226 314l0 14M1235 317l10 9M1235 317l-9 11M1235 317l-4 16M1245 326l11 7M1245 326l-14 7M1245 326l3 12M1256 333l9 8M1256 333l-9 5M1256 333l2 14M1266 340l12 7M1266 340l-8 7M1266 340l-3 11M1278 348l6 9M1278 348l-15 4M1278 348l-2 13M1284 356l12 7M1284 356l-8 5M1284 356l3 10M1296 363l6 5M1296 363l-9 3M1296 363l-3 8M1302 368l-9 3M1302 368l2 14M1000 169l6 6M1000 169l-2 16M1000 169l-7 23M1006 175l13 10M1006 175l-8 9M1006 175l0 13M1019 185l12 5M1019 185l-13 4M1019 185l-5 11M1031 190l8 8M1031 190l-18 5M1031 190l-1 13M1039 198l10 4M1039 198l-9 5M1039 198l-6 12M1049 202l11 8M1049 202l-16 8M1049 202l-2 18M1060 210l9 10M1060 210l-13 10M1060 210l-0 14M1069 220l10 7M1069 220l-9 3M1069 220l-4 11M1069 220l6 13M1079 227l6 5M1079 227l-4 7M1085 232l12 7M1085 232l-10 1M1085 232l2 9M1097 240l7 5M1097 240l-10 1M1097 240l-1 11M1104 244l15 9M1104 244l-8 7M1104 244l2 16M1119 253l7 1M1119 253l-13 7M1119 253l-0 12M1125 255l9 11M1125 255l-7 11M1125 255l-2 16M1134 265l13 5M1134 265l-11 5M1134 265l-1 9M1148 270l6 8M1148 270l-14 4M1148 270l-1 17M1154 278l10 9M1154 278l-7 9M1154 278l-0 8M1164 287l10 6M1164 287l-10 -1M1164 287l4 11M1164 287l-12 13M1174 293l11 8M1174 293l-5 5M1174 293l2 14M1185 301l11 3M1185 301l-9 5M1185 301l0 13M1196 305l11 9M1196 305l-11 9M1196 305l-3 14M1207 314l9 6M1207 314l-14 5M1207 314l-5 11M1216 320l10 8M1216 320l-14 5M1216 320l-0 10M1226 327l5 6M1226 327l-10 3M1226 327l-2 10M1231 333l17 5M1231 333l-6 4M1231 333l4 13M1248 338l10 9M1248 338l-12 8M1248 338l-5 13M1258 347l5 4M1258 347l-16 4M1258 347l-4 11M1263 352l13 10M1263 352l-9 7M1263 352l3 16M1276 361l11 5M1276 361l-11 6M1276 361l-1 10M1287 366l5 5M1287 366l-12 4M1287 366l-0 13M1293 372l11 11M1293 372l-6 7M1293 372l4 12M1304 383l-7 1M1304 383l-1 6M1304 383l-0 24M997 185l9 4M997 185l-4 8M1006 188l8 7M1006 188l-13 4M1006 188l-4 13M1014 195l16 8M1014 195l-12 6M1014 195l-0 14M1030 203l3 7M1030 203l-16 6M1030 203l-7 11M1033 210l14 10M1033 210l-10 4M1033 210l2 13M1047 220l13 4M1047 220l-12 3M1047 220l-2 6M1047 220l8 12M1059 224l5 7M1059 224l-4 8M1065 231l10 2M1065 231l-10 1M1065 231l1 10M1075 233l12 8M1075 233l-9 8M1075 233l-1 17M1087 241l9 10M1087 241l-13 10M1087 241l0 15M1096 251l10 9M1096 251l-8 5M1096 251l-0 14M1106 260l12 6M1106 260l-10 5M1106 260l1 11M1118 266l5 5M1118 266l-11 5M1118 266l-7 10M1123 270l10 4M1123 270l-12 5M1123 270l-0 9M1133 274l13 13M1133 274l-11 5M1133 274l3 15M1147 288l7 -1M1147 288l-10 2M1147 288l-2 6M1154 287l-9 7M1154 287l-2 14M1169 298l8 9M1169 298l-17 3M1169 298l-3 10M1176 307l9 8M1176 307l-11 1M1176 307l-4 10M1186 314l7 5M1186 314l-14 3M1186 314l-3 6M1193 319l9 5M1193 319l-10 2M1193 319l3 10M1202 324l14 6M1202 324l-7 5M1202 324l4 11M1216 330l9 7M1216 330l-10 5M1216 330l-5 14M1225 337l11 9M1225 337l-13 7M1225 337l1 12M1235 346l7 5M1235 346l-10 3M1235 346l-2 8M1242 351l12 7M1242 351l-9 3M1242 351l2 15M1254 358l12 9M1254 358l-9 8M1254 358l-1 11M1266 368l10 3M1266 368l-13 2M1266 368l-2 8M1275 371l12 8M1275 371l-12 5M1275 371l-5 13M1287 379l10 5M1287 379l-17 5M1287 379l-3 9M1297 384l6 4M1297 384l-12 4M1297 384l-6 14M1303 388l-13 10M1303 388l0 18M993 192l9 9M993 192l1 16M1002 201l12 8M1002 201l-8 7M1002 201l1 10M1014 209l9 5M1014 209l-11 3M1014 209l0 7M1023 214l12 9M1023 214l-9 2M1023 214l2 12M1035 223l9 3M1035 223l-10 3M1035 223l0 14M1045 226l10 6M1045 226l-9 11M1045 226l-4 14M1055 232l11 9M1055 232l-14 9M1055 232l-2 15M1066 241l8 9M1066 241l-12 6M1066 241l-1 10M1074 251l14 5M1074 251l-9 1M1074 251l-3 8M1087 256l8 9M1087 256l-16 3M1087 256l-2 11M1095 265l11 6M1095 265l-10 2M1095 265l-2 9M1107 271l5 4M1107 271l-13 3M1107 271l-4 11M1112 275l11 4M1112 275l-9 7M1112 275l3 14M1123 279l13 10M1123 279l-8 10M1123 279l2 15M1136 289l9 5M1136 289l-12 5M1136 289l-6 13M1145 294l7 7M1145 294l-14 8M1145 294l0 17M1152 301l14 7M1152 301l-7 10M1152 301l5 14M1166 307l6 10M1166 307l-9 7M1172 317l11 3M1172 317l-15 -2M1172 317l-9 7M1172 317l1 7M1183 320l12 8M1183 320l-11 4M1183 320l2 13M1196 329l11 6M1196 329l-10 4M1196 329l-6 12M1207 335l5 9M1207 335l-17 6M1207 335l-5 12M1211 344l14 5M1211 344l-9 3M1211 344l1 12M1226 349l7 5M1226 349l-14 7M1226 349l-1 10M1233 354l12 12M1233 354l-9 5M1233 354l3 13M1245 366l8 4M1245 366l-9 1M1245 366l-2 9M1253 370l11 6M1253 370l-10 6M1253 370l1 12M1264 376l6 8M1264 376l-10 6M1264 376l-2 13M1270 384l14 4M1270 384l-8 5M1270 384l3 12M1284 388l6 10M1284 388l-11 8M1284 388l-4 13M1291 398l13 8M1291 398l-10 3M1291 398l2 15M1304 406l-11 7M994 208l9 4M994 208l1 13M994 208l-2 24M1003 212l11 4M1003 212l-7 9M1003 212l2 16M1014 216l11 11M1014 216l-10 12M1014 216l-1 17M1025 227l10 10M1025 227l-13 6M1025 227l-4 10M1035 237l5 3M1035 237l-14 0M1035 237l-1 12M1035 237l-14 10M1041 240l13 6M1041 240l-6 9M1041 240l0 12M1054 247l11 5M1054 247l-13 6M1054 247l-2 10M1064 252l7 7M1064 252l-13 6M1064 252l-1 15M1071 259l14 8M1071 259l-8 7M1071 259l3 17M1085 267l9 7M1085 267l-11 9M1085 267l-2 9M1094 274l9 8M1094 274l-10 2M1094 274l-4 13M1103 282l12 8M1103 282l-13 5M1103 282l2 11M1115 290l10 5M1115 290l-10 3M1115 290l-2 11M1124 294l6 8M1124 294l-12 6M1124 294l-1 12M1131 302l15 9M1131 302l-8 4M1131 302l4 9M1145 311l11 4M1145 311l-11 1M1145 311l0 8M1157 315l7 9M1157 315l-11 4M1157 315l-3 14M1163 324l10 1M1163 324l-10 5M1163 324l-4 11M1173 324l13 9M1173 324l-13 10M1173 324l-2 17M1185 333l4 8M1185 333l-15 8M1185 333l-1 16M1190 341l12 7M1190 341l-5 9M1190 341l5 13M1202 347l10 9M1202 347l-7 6M1202 347l-1 14M1212 356l12 4M1212 356l-10 6M1212 356l-2 13M1224 359l12 8M1224 359l-15 9M1224 359l-1 17M1236 367l7 8M1236 367l-13 9M1236 367l-6 14M1243 376l11 6M1243 376l-13 6M1243 376l-0 10M1254 381l8 7M1254 381l-12 4M1254 381l-3 14M1262 389l12 8M1262 389l-10 6M1262 389l0 14M1274 396l7 5M1274 396l-12 7M1274 396l-2 14M1280 401l12 12M1280 401l-9 9M1293 413l-22 -3M995 221l9 7M995 221l-4 11M1004 228l8 5M1004 228l-13 4M1004 228l-1 6M1013 233l9 4M1013 233l-9 1M1013 233l-0 7M1021 237l-9 2M1021 237l0 10M1035 249l6 3M1035 249l-13 -2M1035 249l0 10M1041 252l11 5M1041 252l-6 7M1041 252l4 12M1052 257l12 9M1052 257l-7 7M1052 257l5 13M1063 266l10 10M1063 266l-7 4M1063 266l1 12M1074 276l10 -0M1074 276l-9 3M1074 276l-2 9M1074 276l8 12M1083 276l7 11M1083 276l-2 12M1090 286l15 6M1090 286l-9 2M1090 286l2 11M1105 293l7 8M1105 293l-13 5M1105 293l-3 9M1112 301l11 6M1112 301l-10 1M1112 301l-4 11M1123 306l11 5M1123 306l-14 5M1123 306l-1 12M1134 311l11 7M1134 311l-12 7M1134 311l-3 14M1146 319l7 10M1146 319l-14 7M1146 319l-2 15M1153 329l7 6M1153 329l-9 5M1153 329l-1 12M1160 334l11 7M1160 334l-7 6M1160 334l0 7M1170 341l14 8M1170 341l-11 1M1170 341l-2 11M1184 349l10 4M1184 349l-16 2M1184 349l-3 10M1195 354l7 8M1195 354l-13 5M1195 354l-2 12M1201 362l8 7M1201 362l-8 4M1201 362l2 13M1209 369l14 8M1209 369l-6 6M1209 369l3 10M1223 377l6 5M1223 377l-11 2M1223 377l-2 8M1229 381l13 4M1229 381l-8 3M1229 381l-2 10M1243 386l9 10M1243 386l-15 5M1243 386l-1 12M1252 395l10 8M1252 395l-10 3M1252 395l-0 15M1262 403l9 7M1262 403l-11 6M1262 403l-4 8M1271 410l-13 1M992 232l12 2M992 232l-1 9M1003 234l9 6M1003 234l-12 7M1003 234l-2 14M1012 240l9 7M1012 240l-11 8M1012 240l1 16M1021 247l14 12M1021 247l-8 9M1021 247l-3 14M1035 259l9 5M1035 259l-16 2M1035 259l-6 9M1045 264l12 6M1045 264l-15 4M1045 264l-1 12M1057 270l8 8M1057 270l-13 6M1057 270l-7 13M1065 278l7 7M1065 278l-15 5M1065 278l-4 9M1071 285l10 3M1071 285l-11 3M1071 285l2 14M1082 288l11 9M1082 288l-9 11M1082 288l1 15M1092 298l10 4M1092 298l-9 5M1092 298l2 11M1102 301l7 10M1102 301l-8 8M1109 312l13 7M1109 312l-14 -3M1109 312l-6 6M1109 312l3 10M1122 318l10 7M1122 318l-10 3M1122 318l-4 13M1132 325l12 9M1132 325l-14 5M1132 325l-1 14M1144 334l9 7M1144 334l-13 5M1144 334l-2 8M1153 341l7 1M1153 341l-10 1M1153 341l-2 12M1160 342l9 10M1160 342l-9 11M1160 342l3 14M1169 352l13 7M1169 352l-6 4M1169 352l4 13M1182 359l11 6M1182 359l-9 5M1182 359l-3 9M1193 365l10 9M1193 365l-14 2M1193 365l-3 9M1203 375l8 4M1203 375l-14 -1M1203 375l0 9M1212 378l10 6M1212 378l-8 5M1212 378l-2 15M1221 385l6 6M1221 385l-12 9M1221 385l2 13M1228 391l13 7M1228 391l-4 6M1228 391l-2 14M1241 398l10 12M1241 398l-15 7M1241 398l-0 12M1251 410l7 2M1251 410l-10 0M1258 411l-17 -1M991 241l10 7M991 241l8 21M1002 248l12 7M1002 248l-3 14M1013 256l6 5M1013 256l-14 6M1013 256l1 11M1019 261l11 7M1019 261l-4 5M1019 261l3 13M1030 268l14 9M1030 268l-7 6M1030 268l4 12M1043 277l6 7M1043 277l-10 3M1043 277l-4 9M1049 283l11 4M1049 283l-10 3M1049 283l1 8M1061 288l12 11M1061 288l-11 4M1061 288l-1 15M1073 299l10 4M1073 299l-14 4M1073 299l-1 12M1083 303l11 6M1083 303l-11 8M1083 303l-5 13M1095 309l8 8M1095 309l-17 7M1095 309l-3 14M1103 317l9 4M1103 317l-12 6M1103 317l-0 10M1112 321l5 9M1112 321l-10 6M1112 321l-2 11M1118 331l13 9M1118 331l-7 2M1118 331l4 11M1131 339l12 2M1131 339l-9 3M1131 339l3 8M1142 342l9 11M1142 342l-8 6M1142 342l-2 10M1151 353l12 3M1151 353l-11 -1M1151 353l-3 9M1163 356l10 9M1163 356l-15 6M1163 356l-4 14M1172 364l6 3M1172 364l-14 5M1172 364l-5 10M1179 368l11 6M1179 368l-11 7M1179 368l-0 15M1190 374l14 10M1190 374l-11 8M1190 374l1 15M1204 384l6 10M1204 384l-12 6M1204 384l-2 13M1210 394l14 3M1210 394l-8 3M1210 394l0 10M1223 397l3 8M1223 397l-14 7M1223 397l-4 13M1226 405l15 5M1226 405l-7 5M1241 410l-22 0M999 262l16 4M999 262l-8 7M999 262l-0 11M1014 266l8 8M1014 266l-16 6M1014 266l-4 14M1022 274l12 6M1022 274l-12 6M1022 274l0 11M1034 280l6 6M1034 280l-12 5M1034 280l-5 11M1040 286l10 5M1040 286l-11 5M1040 286l2 13M1050 291l9 12M1050 291l-8 7M1050 291l0 16M1059 303l13 8M1059 303l-9 4M1059 303l4 10M1072 311l6 5M1072 311l-9 2M1072 311l-3 7M1078 316l14 7M1078 316l-8 2M1078 316l-2 12M1091 323l11 4M1091 323l-15 4M1091 323l-1 10M1103 327l8 5M1103 327l-12 6M1103 327l0 12M1111 333l11 10M1111 333l-8 7M1111 333l-5 15M1122 342l12 6M1122 342l-16 5M1122 342l-4 11M1122 342l7 15M1134 348l6 4M1134 348l-6 9M1140 352l8 10M1140 352l-12 5M1140 352l1 18M1148 362l10 8M1148 362l-7 8M1148 362l1 15M1158 369l9 5M1158 369l-9 7M1158 369l-0 8M1168 375l11 8M1168 375l-10 2M1168 375l2 15M1179 383l12 7M1179 383l-9 7M1179 383l0 11M1191 390l11 7M1191 390l-12 4M1191 390l-4 8M1202 397l8 7M1202 397l-15 1M1202 397l-4 7M1210 404l9 6M1210 404l-12 0M1219 410l-22 -6M991 268l7 4M991 268l9 19M991 268l7 25M998 273l12 8M998 273l1 14M1010 280l12 4M1010 280l-10 7M1010 280l-3 11M1022 285l6 6M1022 285l-15 6M1022 285l0 13M1028 291l13 8M1028 291l-6 7M1028 291l4 14M1042 299l8 9M1042 299l-10 6M1042 299l-4 10M1050 307l13 5M1050 307l-13 1M1050 307l-0 15M1063 313l6 5M1063 313l-13 9M1063 313l-1 11M1069 318l7 9M1069 318l-8 6M1069 318l2 14M1076 327l14 5M1076 327l-5 5M1076 327l3 11M1090 333l13 7M1090 333l-12 5M1090 333l-0 14M1103 339l3 8M1103 339l-13 8M1103 339l-1 12M1106 347l11 6M1106 347l-4 4M1106 347l5 13M1117 353l11 4M1117 353l-7 7M1117 353l1 11M1128 357l13 13M1128 357l-10 6M1128 357l-3 16M1141 370l8 7M1141 370l-16 4M1141 370l-2 9M1149 377l9 0M1149 377l-10 2M1149 377l-0 8M1158 377l12 13M1158 377l-9 7M1158 377l2 17M1170 390l9 3M1170 390l-10 4M1170 390l-2 9M1179 393l8 5M1179 393l-11 5M1179 393l-4 13M1187 398l11 6M1187 398l-12 8M1187 398l-0 15M1197 404l-11 9M1000 287l8 4M1000 287l-1 7M1008 291l15 7M1008 291l-9 3M1008 291l-1 14M1023 298l10 7M1023 298l-16 8M1023 298l-4 16M1032 305l5 4M1032 305l-13 9M1032 305l-4 9M1037 309l13 14M1037 309l-9 5M1037 309l1 14M1050 322l12 2M1050 322l-12 0M1050 322l-4 7M1050 322l8 13M1062 324l10 8M1062 324l-3 11M1071 332l7 6M1071 332l-13 3M1071 332l-7 12M1079 338l11 9M1079 338l-14 6M1079 338l1 13M1090 347l12 5M1090 347l-10 4M1090 347l1 12M1102 352l8 9M1102 352l-11 7M1102 352l-6 10M1111 360l7 3M1111 360l-15 1M1111 360l-3 9M1118 364l7 10M1118 364l-11 6M1118 364l3 15M1125 374l15 5M1125 374l-4 5M1125 374l1 8M1139 379l9 5M1139 379l-13 3M1139 379l-2 16M1149 384l11 10M1149 384l-12 11M1149 384l-2 10M1160 394l8 5M1160 394l-14 1M1160 394l-2 9M1168 399l7 8M1168 399l-11 5M1168 399l1 14M1175 406l11 7M1175 406l-6 6M1186 413l-18 -1M998 294l8 12M998 294l-1 12M1006 305l13 8M1006 305l-8 1M1006 305l2 8M1019 314l9 0M1019 314l-10 -1M1019 314l-3 5M1028 314l10 9M1028 314l-12 4M1028 314l-4 14M1038 323l7 7M1038 323l-14 5M1038 323l-3 10M1045 329l13 6M1045 329l-10 3M1045 329l2 13M1058 335l6 9M1058 335l-10 7M1058 335l-4 13M1064 344l15 7M1064 344l-11 4M1064 344l4 15M1064 344l-4 17M1080 351l11 8M1080 351l-11 8M1080 351l-2 12M1091 359l5 3M1091 359l-14 5M1091 359l-2 10M1096 362l11 8M1096 362l-7 7M1096 362l-3 15M1107 370l13 9M1107 370l-15 7M1107 370l-2 15M1121 378l5 3M1121 378l-15 7M1121 378l-5 10M1126 382l11 13M1126 382l-11 6M1126 382l4 15M1137 395l9 -0M1137 395l-8 2M1137 395l-2 8M1146 395l11 9M1146 395l-11 8M1146 395l-2 14M1158 403l11 9M1158 403l-13 5M1169 412l-24 -3M998 306l11 7M998 306l-3 16M1009 313l8 5M1009 313l-14 9M1009 313l0 15M1016 318l8 9M1016 318l-8 10M1024 328l11 5M1024 328l-15 0M1024 328l-10 8M1024 328l3 13M1035 332l12 10M1035 332l-8 9M1035 332l-1 14M1048 343l6 5M1048 343l-14 4M1048 343l-4 11M1054 348l-10 6M1054 348l6 13M1068 359l9 4M1068 359l-8 2M1068 359l-4 7M1077 363l12 5M1077 363l-13 3M1077 363l-3 9M1089 369l4 8M1089 369l-15 4M1089 369l-8 13M1093 377l13 8M1093 377l-11 5M1093 377l1 10M1105 385l10 3M1105 385l-12 1M1105 385l-0 10M1115 388l14 9M1115 388l-10 7M1115 388l1 14M1130 397l6 6M1130 397l-14 6M1130 397l-1 11M1136 403l9 6M1136 403l-6 5M1145 409l-15 -1M995 322l14 6M995 322l-0 10M995 322l-2 21M1009 328l6 8M1009 328l-14 4M1009 328l1 10M1014 336l13 5M1014 336l-5 3M1014 336l-1 11M1027 341l7 5M1027 341l-14 6M1027 341l-2 14M1034 346l10 8M1034 346l-8 9M1034 346l4 12M1044 354l16 7M1044 354l-6 4M1044 354l-2 12M1060 361l4 6M1060 361l-18 5M1060 361l-4 15M1064 367l10 6M1064 367l-8 9M1064 367l-1 14M1074 373l7 9M1074 373l-11 8M1074 373l-0 13M1082 382l12 4M1082 382l-7 4M1082 382l2 13M1094 386l11 9M1094 386l-10 9M1094 386l-1 16M1105 395l11 7M1105 395l-12 7M1105 395l-2 14M1116 402l13 5M1116 402l-13 7M1116 402l1 11M1129 408l-12 6M995 332l15 6M995 332l-2 11M1009 338l4 8M1009 338l-17 4M1009 338l-4 10M1013 347l12 9M1013 347l-8 1M1013 347l3 13M1026 356l12 3M1026 356l-9 4M1026 356l-4 9M1026 356l8 15M1038 358l4 8M1038 358l-4 13M1042 366l14 10M1042 366l-8 5M1042 366l4 12M1056 376l7 5M1056 376l-10 3M1056 376l-2 9M1063 381l11 5M1063 381l-10 4M1063 381l3 9M1074 386l9 9M1074 386l-8 4M1074 386l2 11M1083 395l9 7M1083 395l-8 2M1083 395l-3 11M1093 402l10 7M1093 402l-12 3M1093 402l-1 8M1103 409l14 4M1103 409l-11 1M1117 413l-25 -4M993 342l13 5M993 342l-1 14M1005 348l11 11M1005 348l-14 9M1005 348l-5 16M1016 359l6 5M1016 359l-16 5M1016 359l-0 10M1022 364l12 6M1022 364l-6 5M1022 364l1 12M1034 371l11 8M1034 371l-11 6M1034 371l-2 13M1046 378l8 6M1046 378l-13 5M1046 378l-3 11M1054 385l12 6M1054 385l-11 5M1054 385l0 13M1066 390l10 7M1066 390l-12 7M1066 390l-1 12M1076 397l5 9M1076 397l-11 6M1076 397l0 13M1081 406l11 4M1081 406l-5 5M1092 410l-16 0M991 357l9 7M991 357l1 12M991 357l-0 25M1000 364l16 5M1000 364l-8 5M1000 364l4 11M1016 369l7 7M1016 369l-12 6M1016 369l-5 11M1023 376l10 7M1023 376l-12 4M1023 376l-0 10M1033 384l10 5M1033 384l-10 3M1033 384l-0 15M1043 389l11 8M1043 389l-10 10M1043 389l-1 13M1054 398l11 5M1054 398l-12 4M1054 398l-3 13M1065 403l11 7M1065 403l-14 8M1076 410l-25 1M992 369l13 6M992 369l-1 13M1005 375l7 6M1005 375l-14 7M1005 375l-1 10M1011 381l12 6M1011 381l-8 4M1011 381l0 12M1023 386l10 12M1023 386l-11 6M1023 386l-1 15M1033 399l10 3M1033 399l-10 3M1033 399l-1 8M1042 402l9 9M1042 402l-10 5M1042 402l1 11M1051 411l-8 2M991 382l12 3M991 382l1 14M1003 385l8 7M1003 385l-11 12M1003 385l-5 15M1012 392l11 10M1012 392l-13 7M1012 392l-3 14M1022 402l9 5M1022 402l-13 5M1022 402l-4 10M1032 407l11 6M1032 407l-13 5M1043 413l-24 -1M992 396l7 3M992 396l1 7M999 399l10 7M999 399l-6 4M999 399l4 10M1009 406l9 6M1009 406l-7 3M1019 412l-16 -3M993 403l10 7" stroke="#000" stroke-width="1" fill="none"/></g><path d="M1183.7,219 C1165,231 1140,250 1127,271 C1120,283 1114,297 1111.5,305.8 C1125,298 1140,288 1153,274 C1166,258 1178,240 1183.7,219 Z" fill="url(#bg)" stroke="#000" stroke-width="1.1"/><path d="M1211.8,211.4 L1216.2,211.7 L1220.4,212.3 L1224.6,213.2 L1228.7,214.3 L1232.7,215.7 L1236.6,217.4 L1240.4,219.2 L1244.0,221.3 L1247.5,223.7 L1250.8,226.2 L1254.0,229.0 L1257.0,232.0 L1259.7,235.2 L1262.3,238.6 L1264.7,242.1 L1266.9,245.9 L1268.9,249.7 L1270.6,253.8 L1272.1,257.9 L1273.4,262.2 L1274.4,266.6 L1275.2,271.1 L1275.7,275.7 L1276.1,280.3 L1276.1,285.0 L1275.9,289.7 L1275.5,294.5 L1274.8,299.2 L1273.9,304.0 L1272.8,308.7 L1271.4,313.4 L1269.8,318.1 L1267.9,322.7 L1265.9,327.2 L1263.6,331.6 L1261.1,336.0 L1258.4,340.2 L1255.5,344.3 L1252.5,348.2 L1249.2,352.0 L1245.8,355.7 L1242.3,359.1 L1238.6,362.4 L1234.7,365.5 L1230.8,368.3 L1226.7,371.0 L1222.6,373.5 L1218.3,375.7 L1214.0,377.6 L1209.7,379.4 L1205.3,380.9 L1200.8,382.1 L1196.4,383.1 L1191.9,383.8 L1187.4,384.3 L1183.0,384.5 L1178.6,384.5 L1174.3,384.1 L1170.0,383.6 L1165.8,382.7" fill="none" stroke="#000" stroke-width="0.8" opacity="0.7"/><path d="M1247.2,221.0 L1250.5,223.4 L1253.6,226.0 L1256.6,228.8 L1259.4,231.8 L1262.1,235.0 L1264.5,238.3 L1266.8,241.8 L1268.9,245.5 L1270.7,249.3 L1272.4,253.2 L1273.9,257.3 L1275.1,261.4 L1276.1,265.7 L1276.9,270.1 L1277.5,274.5 L1277.8,279.0 L1277.9,283.6 L1277.8,288.1 L1277.4,292.8 L1276.9,297.4 L1276.1,302.0 L1275.1,306.7 L1273.8,311.2 L1272.4,315.8 L1270.7,320.3 L1268.8,324.8 L1266.8,329.2 L1264.5,333.4 L1262.0,337.6 L1259.4,341.7 L1256.6,345.7 L1253.6,349.5 L1250.4,353.2 L1247.1,356.8 L1243.7,360.1 L1240.1,363.3 L1236.4,366.4 L1232.6,369.2 L1228.6,371.9 L1224.6,374.3 L1220.5,376.5 L1216.3,378.6 L1212.1,380.4 L1207.9,381.9 L1203.5,383.3 L1199.2,384.4 L1194.9,385.2 L1190.5,385.9 L1186.2,386.3 L1181.9,386.4 L1177.6,386.3 L1173.4,386.0 L1169.2,385.4 L1165.1,384.6 L1161.1,383.5 L1157.2,382.2 L1153.4,380.7 L1149.7,379.0 L1146.1,377.0 L1142.6,374.8 L1047.1,315.4 L1044.0,313.1 L1041.0,310.5 L1038.2,307.8 L1035.6,304.8 L1033.2,301.6 L1031.0,298.2 L1029.0,294.7 L1027.2,290.9 L1025.6,287.0 L1024.3,282.9 L1023.1,278.7 L1022.2,274.4 L1021.5,269.9 L1021.1,265.3 L1020.9,260.6 L1020.9,255.8 L1021.1,251.0 L1021.6,246.1 L1022.3,241.1 L1023.2,236.1 L1024.4,231.1 L1025.8,226.1 L1027.4,221.1 L1029.2,216.1 L1031.3,211.1 L1033.5,206.2 L1035.9,201.4 L1038.5,196.6 L1041.4,192.0 L1044.3,187.4 L1047.5,182.9 L1050.8,178.6 L1054.3,174.4 L1057.9,170.4 L1061.6,166.5 L1065.5,162.8 L1069.4,159.3 L1073.5,155.9 L1077.6,152.8 L1081.9,149.9 L1086.2,147.1 L1090.5,144.7 L1094.9,142.4 L1099.3,140.4 L1103.8,138.6 L1108.2,137.1 L1112.6,135.8 L1117.1,134.8 L1121.4,134.0 L1125.8,133.5 L1130.1,133.3 L1134.3,133.3 L1138.4,133.6 L1142.5,134.2 L1146.4,135.0 L1150.3,136.1 L1154.0,137.4 L1157.6,139.0 L1161.0,140.8 L1164.3,142.8Z" fill="none" stroke="#000" stroke-width="1.2"/><rect x="582" y="1" width="1372" height="30" fill="url(#tb)"/><rect x="616" y="1" width="28" height="30" fill="#b2b9fb"/><rect x="653" y="5" width="21" height="21" fill="#7f8cdc"/><path d="M652,16 H674 M663,5 V27" stroke="#000" stroke-width="1.8"/><rect x="658" y="11" width="10" height="10" fill="#b4bcfa" stroke="#000" stroke-width="1.5"/><rect x="661" y="14" width="4" height="4" fill="none" stroke="#000" stroke-width="1"/><path d="M589,15.5 H596" stroke="#666" stroke-width="1"/><path d="M595.5,12 Q597.5,11.5 598.5,13.5 L602,14.2 Q602.5,12.5 604.2,12.8 L604.2,18.2 Q602.5,18.5 602,16.8 L598.5,17.5 Q597.5,19.5 595.5,19 Q594.5,15.5 595.5,12 Z" fill="#2a2a2a"/><text x="617" y="24.6" font-family="Liberation Sans" font-size="21" fill="#000">3D</text><g font-family="Liberation Sans" font-size="50" fill="#fff" text-anchor="end"><text x="1951" y="73" transform="translate(1951,0) scale(0.915,1) translate(-1951,0)" fill="#333" opacity="0.6">WELSIM</text><text x="1950" y="72" transform="translate(1950,0) scale(0.915,1) translate(-1950,0)">WELSIM</text><text x="1951" y="124.5" transform="translate(1951,0) scale(0.975,1) translate(-1951,0)" fill="#333" opacity="0.6">2025R2</text><text x="1950" y="123.5" transform="translate(1950,0) scale(0.975,1) translate(-1950,0)">2025R2</text></g><path d="M1070.6,780.7 H1464.5 M1070.6,780.7 V770.0 M1086.4,780.7 V776.0 M1102.1,780.7 V776.0 M1117.9,780.7 V776.0 M1133.6,780.7 V776.0 M1149.4,780.7 V770.0 M1165.1,780.7 V776.0 M1180.9,780.7 V776.0 M1196.6,780.7 V776.0 M1212.4,780.7 V776.0 M1228.2,780.7 V770.0 M1243.9,780.7 V776.0 M1259.7,780.7 V776.0 M1275.4,780.7 V776.0 M1291.2,780.7 V776.0 M1306.9,780.7 V770.0 M1322.7,780.7 V776.0 M1338.5,780.7 V776.0 M1354.2,780.7 V776.0 M1370.0,780.7 V776.0 M1385.7,780.7 V770.0 M1401.5,780.7 V776.0 M1417.2,780.7 V776.0 M1433.0,780.7 V776.0 M1448.7,780.7 V776.0 M1464.5,780.7 V770.0" stroke="#111" stroke-width="1.3" fill="none"/><text x="1475" y="774.6" font-family="Liberation Sans" font-size="26" letter-spacing="3.3" fill="#111">25 cm</text><path d="M1933.3,765.4 L1938.3,716" stroke="#0000ff" stroke-width="1.6"/><path d="M1938.3,714 L1942.5,726 L1933.5,726 Z" fill="#0000ee"/><path d="M1933.3,765.4 L1905,742" stroke="#ff0000" stroke-width="1.2"/><circle cx="1905" cy="743" r="4" fill="#aa0000"/><path d="M1899,737 L1907,739 L1903,745 Z" fill="#660000"/><path d="M1933.3,765.4 L1885,779.6" stroke="#00ff00" stroke-width="1.4"/><path d="M1883,780 L1892,772 L1896,780 Z" fill="#00cc00"/><g font-family="Liberation Sans" font-style="italic" font-size="17" fill="#111" stroke="#fff" stroke-width="0.6" paint-order="stroke"><text x="1941" y="718">Z</text><text x="1908" y="736">X</text><text x="1899" y="770">Y</text></g>
</svg><div class="box" style="left:825px;top:792px;width:1129px;height:1px;background:#a8a8a8"></div><div class="box" style="left:582px;top:792px;width:242px;height:46px;background:#f8f8f8;border:1px solid #e6e6e6;border-top:none"></div><svg class="ic" style="left:606px;top:798px" width="32" height="32" viewBox="0 0 32 32">
<rect width="32" height="32" fill="#fbb630"/>
<text x="16" y="27.3" text-anchor="middle" font-family="Liberation Sans" font-weight="bold" font-size="29" fill="#0d0d0d" transform="translate(16,0) scale(0.92,1) translate(-16,0)">W</text>
</svg><div class="t" style="left:647px;top:805.5px;font-size:23px;line-height:23px;font-weight:400;color:#000;letter-spacing:-1.1px">FEM Project</div><svg class="ic" style="left:770px;top:802px" width="28" height="28" viewBox="0 0 28 28">
<rect x="1" y="1" width="26" height="26" rx="3" fill="#e0805a" stroke="#e03a2a" stroke-width="2"/>
<path d="M8.5,8.5 L19.5,19.5 M19.5,8.5 L8.5,19.5" stroke="#fff" stroke-width="3.4"/>
</svg><div class="box" style="left:582px;top:850px;width:1368px;height:33px;background:#dadada;border:2px solid #b6b6b6;border-left:none"></div><div class="t" style="left:593px;top:859.5px;font-size:23px;line-height:23px;font-weight:400;color:#000;">Output</div><svg class="ic" style="left:1879px;top:860px" width="18" height="18" viewBox="0 0 18 18">
<rect x="5.5" y="1.5" width="10" height="10" fill="none" stroke="#333" stroke-width="2.4"/>
<rect x="1.5" y="6.5" width="10" height="10" fill="#dadada" stroke="#333" stroke-width="2.4"/>
<rect x="1" y="5.5" width="11" height="3.5" fill="#333"/>
<rect x="5" y="1" width="11" height="3.5" fill="#333"/>
</svg><svg class="ic" style="left:1921px;top:861px" width="18" height="18" viewBox="0 0 18 18"><path d="M2,2 L16,16 M16,2 L2,16" stroke="#333" stroke-width="3"/></svg><div class="box" style="left:584px;top:894px;width:51px;height:43px;background:#fdfdfd;border:1px solid #dedede;border-radius:4px"></div><div class="box" style="left:640px;top:894px;width:51px;height:43px;background:#fdfdfd;border:1px solid #dedede;border-radius:4px"></div><svg class="ic" style="left:594px;top:900px" width="32" height="32" viewBox="0 0 32 32">
<path d="M1.5,1.5 H23 L29.5,8 V30 H1.5 Z" fill="none" stroke="#0a0a0a" stroke-width="3"/>
<rect x="5" y="2" width="6" height="10" fill="#0a0a0a"/>
<rect x="5" y="2" width="16" height="10" fill="none" stroke="#0a0a0a" stroke-width="2.6"/>
<rect x="6.5" y="19" width="18" height="11" fill="none" stroke="#0a0a0a" stroke-width="2.6"/>
</svg><svg class="ic" style="left:650px;top:900px" width="32" height="32" viewBox="0 0 32 32">
<circle cx="2.5" cy="5" r="1.3" fill="#111"/><circle cx="6" cy="5.5" r="1.3" fill="#111"/><circle cx="5.5" cy="11" r="2.6" fill="#111"/>
<path d="M25,2 L20,12" stroke="#111" stroke-width="3.2" stroke-linecap="round"/>
<path d="M14,13 Q19,11 23,15 L20,21 Q16,25 12,26 Q6,25 4,19 Q10,19 14,13 Z" fill="#fff" stroke="#111" stroke-width="2.4" stroke-linejoin="round"/>
<path d="M12,26 L14,20 M17,24 L18,19" stroke="#111" stroke-width="1.6"/>
</svg><div class="box" style="left:582px;top:941px;width:1371px;height:139px;background:#fff;border-bottom:1px solid #a0a0a0"></div><div class="t" style="left:1639px;top:1102.5px;font-size:23px;line-height:23px;font-weight:400;color:#000;letter-spacing:0.27px">Metric (kg, mm, s, mA, N, mV)</div>
<div id="winborder"></div><div id="wincorner"><div></div></div>
</body></html>
